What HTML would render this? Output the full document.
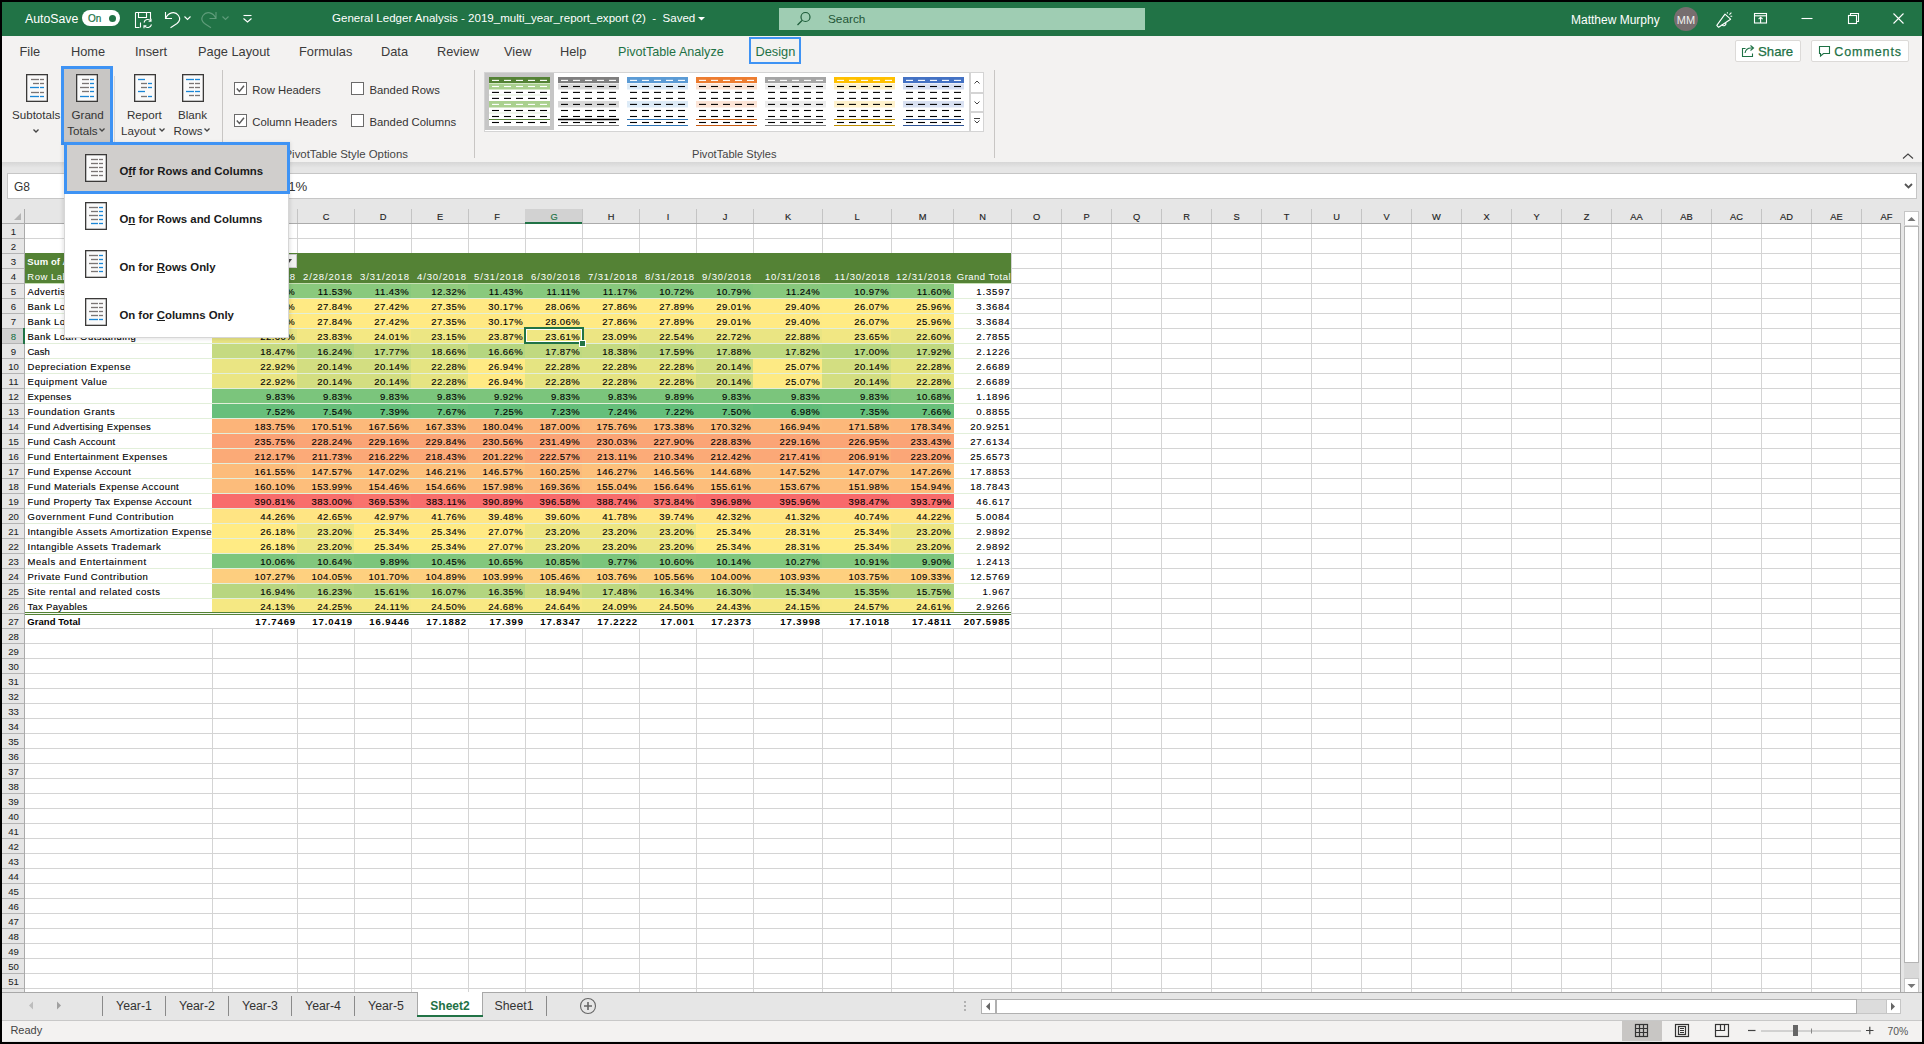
<!DOCTYPE html><html><head><meta charset="utf-8"><style>
html,body{margin:0;padding:0;}
body{width:1924px;height:1044px;position:relative;overflow:hidden;background:#000;font-family:"Liberation Sans", sans-serif;}
div{box-sizing:border-box;}
svg{position:absolute;overflow:visible;}
</style></head><body>
<div style="position:absolute;left:2px;top:2px;width:1920px;height:34px;background:#217346;"></div>
<div style="position:absolute;left:25px;top:13px;font-size:12.3px;line-height:12.3px;color:#fff;font-weight:normal;white-space:nowrap;">AutoSave</div>
<div style="position:absolute;left:82px;top:10px;width:38px;height:16px;background:#fff;border-radius:8px;"></div>
<div style="position:absolute;left:88px;top:14px;font-size:10px;line-height:10px;color:#217346;font-weight:normal;white-space:nowrap;-webkit-text-stroke:0.2px #217346;">On</div>
<div style="position:absolute;left:108.5px;top:14.5px;width:7px;height:7px;background:#217346;border-radius:50%;"></div>
<svg style="left:0;top:0" width="1924" height="40">
<g fill="none" stroke="#fff" stroke-width="1.1">
<path d="M135.5 12.5 h15 v7 M135.5 12.5 v15 h4"/>
<path d="M138.5 12.5 v5 h8 v-5"/>
<path d="M140.5 27.5 v-5"/>
<path d="M144 22.5 a4 4 0 0 1 7 -1.5 M151 18.8 v2.4 h-2.4 M151.5 24.5 a4 4 0 0 1 -7 1.5 M144 28.2 v-2.4 h2.4"/>
<path d="M165.5 12 V18.5 H172 M165.7 18.3 C168 12.5 175 10.5 178.5 15.5 C180.5 18.5 179.5 21.5 177 23.5 L170.5 27.8"/>
<path d="M184.5 16.5 l3 3 l3 -3"/>
</g>
<g fill="none" stroke="#5f9c7a" stroke-width="1.1">
<path d="M216 12 V18.5 H209.5 M215.8 18.3 C213.5 12.5 206.5 10.5 203 15.5 C201 18.5 202 21.5 204.5 23.5 L211 27.8"/>
<path d="M222.5 16.5 l3 3 l3 -3"/>
</g>
<g fill="none" stroke="#fff" stroke-width="1.1">
<path d="M243.5 15.5 h8"/><path d="M243.5 18.5 l4 3.5 l4 -3.5"/>
</g>
</svg>
<div style="position:absolute;left:332px;top:13px;font-size:11.55px;line-height:11.55px;color:#fff;font-weight:normal;white-space:nowrap;">General Ledger Analysis - 2019_multi_year_report_export (2)&nbsp; -&nbsp; Saved</div>
<svg style="left:0;top:0" width="1924" height="40"><path d="M698 17 l3.5 3.5 l3.5 -3.5z" fill="#fff"/></svg>
<div style="position:absolute;left:779px;top:8px;width:366px;height:22px;background:#9fcdb3;"></div>
<svg style="left:0;top:0" width="1924" height="40"><g fill="none" stroke="#1e5c3a" stroke-width="1.2"><circle cx="805.5" cy="17" r="4.5"/><path d="M802 20.5 l-4.5 4.5"/></g></svg>
<div style="position:absolute;left:828px;top:14px;font-size:11.8px;line-height:11.8px;color:#1f5537;font-weight:normal;white-space:nowrap;">Search</div>
<div style="position:absolute;left:1571px;top:14px;font-size:12px;line-height:12px;color:#fff;font-weight:normal;white-space:nowrap;">Matthew Murphy</div>
<div style="position:absolute;left:1674px;top:7px;width:24px;height:24px;background:#776e6f;border-radius:50%;"></div>
<div style="position:absolute;left:1486px;width:400px;top:15px;font-size:11px;line-height:11px;color:#f0f0f0;font-weight:normal;white-space:nowrap;text-align:center;">MM</div>
<svg style="left:0;top:0" width="1924" height="40"><g fill="none" stroke="#fff" stroke-width="1.1">
<path d="M1725 14.2 L1716.8 25.3 L1718.6 27.3 L1730.6 19.2 Z" stroke-linejoin="round"/><path d="M1722 24.6 a2 2 0 0 0 3.6 -1.8"/>
<path d="M1727.4 12.2 v1.4 M1729.4 14.6 l2 -2 M1730.4 16.3 h1.8"/>
<rect x="1754.5" y="13.5" width="12" height="9.5"/><path d="M1754.5 15.8 h12"/><path d="M1760.6 23 v-5.6 M1758.6 19.2 l2 -2 l2 2"/>
<path d="M1801.5 18.5 h11"/>
<rect x="1848.5" y="15.5" width="8" height="8"/><path d="M1850.5 15.5 v-2 h8 v8 h-2"/>
<path d="M1893.5 13.5 l10 10 M1903.5 13.5 l-10 10"/>
</g></svg>
<div style="position:absolute;left:2px;top:36px;width:1920px;height:126px;background:#f3f2f1;"></div>
<div style="position:absolute;left:19.5px;top:46px;font-size:12.8px;line-height:12.8px;color:#3b3b3b;font-weight:normal;white-space:nowrap;">File</div>
<div style="position:absolute;left:71px;top:46px;font-size:12.8px;line-height:12.8px;color:#3b3b3b;font-weight:normal;white-space:nowrap;">Home</div>
<div style="position:absolute;left:135px;top:46px;font-size:12.8px;line-height:12.8px;color:#3b3b3b;font-weight:normal;white-space:nowrap;">Insert</div>
<div style="position:absolute;left:198px;top:46px;font-size:12.8px;line-height:12.8px;color:#3b3b3b;font-weight:normal;white-space:nowrap;">Page Layout</div>
<div style="position:absolute;left:299px;top:46px;font-size:12.8px;line-height:12.8px;color:#3b3b3b;font-weight:normal;white-space:nowrap;">Formulas</div>
<div style="position:absolute;left:381px;top:46px;font-size:12.8px;line-height:12.8px;color:#3b3b3b;font-weight:normal;white-space:nowrap;">Data</div>
<div style="position:absolute;left:437px;top:46px;font-size:12.8px;line-height:12.8px;color:#3b3b3b;font-weight:normal;white-space:nowrap;">Review</div>
<div style="position:absolute;left:504px;top:46px;font-size:12.8px;line-height:12.8px;color:#3b3b3b;font-weight:normal;white-space:nowrap;">View</div>
<div style="position:absolute;left:560px;top:46px;font-size:12.8px;line-height:12.8px;color:#3b3b3b;font-weight:normal;white-space:nowrap;">Help</div>
<div style="position:absolute;left:618px;top:46px;font-size:12.6px;line-height:12.6px;color:#1e7145;font-weight:normal;white-space:nowrap;">PivotTable Analyze</div>
<div style="position:absolute;left:749px;top:37px;width:52px;height:27px;border:2px solid #3e93f4;"></div>
<div style="position:absolute;left:755.5px;top:46px;font-size:12.8px;line-height:12.8px;color:#1e7145;font-weight:normal;white-space:nowrap;">Design</div>
<div style="position:absolute;left:1735px;top:40px;width:66px;height:22px;background:#fff;border:1px solid #dcdad8;border-radius:2px;"></div>
<div style="position:absolute;left:1758px;top:45px;font-size:13.2px;line-height:13.2px;color:#1e7145;font-weight:normal;white-space:nowrap;-webkit-text-stroke:0.25px #1e7145;">Share</div>
<div style="position:absolute;left:1811px;top:40px;width:98px;height:22px;background:#fff;border:1px solid #dcdad8;border-radius:2px;"></div>
<div style="position:absolute;left:1834.3px;top:46px;font-size:12.5px;line-height:12.5px;color:#1e7145;font-weight:normal;white-space:nowrap;-webkit-text-stroke:0.25px #1e7145;letter-spacing:0.9px;">Comments</div>
<svg style="left:0;top:0" width="1924" height="70"><g fill="none" stroke="#1e7145" stroke-width="1.1">
<path d="M1745.5 48.5 h-3 v8 h10 v-3"/><path d="M1745 53 q1 -5 6 -5 h1.5 M1750.5 45.5 l3 2.5 l-3 2.5"/>
<path d="M1819.5 46.5 h10 v7 h-6 l-3 2.5 v-2.5 h-1 z"/>
</g></svg>
<div style="position:absolute;left:61px;top:66px;width:52px;height:79px;background:#c8c6c4;border:3px solid #3e93f4;"></div>
<svg style="left:26px;top:74px" width="22" height="28"><rect x="0.65" y="0.65" width="20.7" height="26.7" fill="#fafafa" stroke="#3b3a39" stroke-width="1.3"/><line x1="5" y1="5.5" x2="13" y2="5.5" stroke="#7a7574" stroke-width="1.3"/><line x1="14" y1="5.5" x2="18" y2="5.5" stroke="#7a7574" stroke-width="1.3"/><line x1="7" y1="9.5" x2="13" y2="9.5" stroke="#7a7574" stroke-width="1.3"/><line x1="14" y1="9.5" x2="18" y2="9.5" stroke="#7a7574" stroke-width="1.3"/><line x1="4" y1="13.5" x2="13" y2="13.5" stroke="#1a86d6" stroke-width="1.3"/><line x1="14" y1="13.5" x2="18" y2="13.5" stroke="#1a86d6" stroke-width="1.3"/><line x1="5" y1="18.5" x2="13" y2="18.5" stroke="#7a7574" stroke-width="1.3"/><line x1="14" y1="18.5" x2="18" y2="18.5" stroke="#7a7574" stroke-width="1.3"/><line x1="4" y1="22.5" x2="13" y2="22.5" stroke="#1a86d6" stroke-width="1.3"/><line x1="14" y1="22.5" x2="18" y2="22.5" stroke="#1a86d6" stroke-width="1.3"/></svg>
<svg style="left:76px;top:74px" width="22" height="28"><rect x="0.65" y="0.65" width="20.7" height="26.7" fill="#fafafa" stroke="#3b3a39" stroke-width="1.3"/><line x1="6" y1="5.5" x2="13" y2="5.5" stroke="#7a7574" stroke-width="1.3"/><line x1="14" y1="5.5" x2="18" y2="5.5" stroke="#1a86d6" stroke-width="1.3"/><line x1="6" y1="9.5" x2="13" y2="9.5" stroke="#7a7574" stroke-width="1.3"/><line x1="14" y1="9.5" x2="18" y2="9.5" stroke="#1a86d6" stroke-width="1.3"/><line x1="4" y1="13.5" x2="13" y2="13.5" stroke="#7a7574" stroke-width="1.3"/><line x1="14" y1="13.5" x2="18" y2="13.5" stroke="#1a86d6" stroke-width="1.3"/><line x1="6" y1="17.5" x2="13" y2="17.5" stroke="#7a7574" stroke-width="1.3"/><line x1="14" y1="17.5" x2="18" y2="17.5" stroke="#1a86d6" stroke-width="1.3"/><line x1="4" y1="22.5" x2="13" y2="22.5" stroke="#1a86d6" stroke-width="1.3"/><line x1="14" y1="22.5" x2="18" y2="22.5" stroke="#1a86d6" stroke-width="1.3"/></svg>
<svg style="left:134px;top:74px" width="22" height="28"><rect x="0.65" y="0.65" width="20.7" height="26.7" fill="#fafafa" stroke="#3b3a39" stroke-width="1.3"/><line x1="4" y1="5.5" x2="11" y2="5.5" stroke="#1a86d6" stroke-width="1.3"/><line x1="7" y1="9.5" x2="13" y2="9.5" stroke="#7a7574" stroke-width="1.3"/><line x1="14" y1="9.5" x2="18" y2="9.5" stroke="#1a86d6" stroke-width="1.3"/><line x1="7" y1="13.5" x2="13" y2="13.5" stroke="#7a7574" stroke-width="1.3"/><line x1="14" y1="13.5" x2="18" y2="13.5" stroke="#1a86d6" stroke-width="1.3"/><line x1="4" y1="17.5" x2="11" y2="17.5" stroke="#1a86d6" stroke-width="1.3"/><line x1="7" y1="22.5" x2="13" y2="22.5" stroke="#7a7574" stroke-width="1.3"/><line x1="14" y1="22.5" x2="18" y2="22.5" stroke="#1a86d6" stroke-width="1.3"/></svg>
<svg style="left:182px;top:74px" width="22" height="28"><rect x="0.65" y="0.65" width="20.7" height="26.7" fill="#fafafa" stroke="#3b3a39" stroke-width="1.3"/><line x1="4" y1="5.5" x2="12" y2="5.5" stroke="#1a86d6" stroke-width="1.3"/><line x1="13" y1="5.5" x2="18" y2="5.5" stroke="#1a86d6" stroke-width="1.3"/><line x1="7" y1="9.5" x2="12" y2="9.5" stroke="#7a7574" stroke-width="1.3"/><line x1="13" y1="9.5" x2="18" y2="9.5" stroke="#7a7574" stroke-width="1.3"/><line x1="7" y1="13.5" x2="12" y2="13.5" stroke="#7a7574" stroke-width="1.3"/><line x1="13" y1="13.5" x2="18" y2="13.5" stroke="#7a7574" stroke-width="1.3"/><line x1="4" y1="17.5" x2="12" y2="17.5" stroke="#1a86d6" stroke-width="1.3"/><line x1="13" y1="17.5" x2="18" y2="17.5" stroke="#1a86d6" stroke-width="1.3"/><line x1="7" y1="21.5" x2="12" y2="21.5" stroke="#7a7574" stroke-width="1.3"/><line x1="13" y1="21.5" x2="18" y2="21.5" stroke="#7a7574" stroke-width="1.3"/></svg>
<div style="position:absolute;left:12px;top:109px;font-size:11.6px;line-height:11.6px;color:#333333;font-weight:normal;white-space:nowrap;">Subtotals</div>
<div style="position:absolute;left:71.5px;top:109px;font-size:11.6px;line-height:11.6px;color:#333333;font-weight:normal;white-space:nowrap;">Grand</div>
<div style="position:absolute;left:67.3px;top:125px;font-size:11.6px;line-height:11.6px;color:#333333;font-weight:normal;white-space:nowrap;">Totals</div>
<div style="position:absolute;left:127px;top:109px;font-size:11.6px;line-height:11.6px;color:#333333;font-weight:normal;white-space:nowrap;">Report</div>
<div style="position:absolute;left:121px;top:125px;font-size:11.6px;line-height:11.6px;color:#333333;font-weight:normal;white-space:nowrap;">Layout</div>
<div style="position:absolute;left:178px;top:109px;font-size:11.6px;line-height:11.6px;color:#333333;font-weight:normal;white-space:nowrap;">Blank</div>
<div style="position:absolute;left:173.6px;top:125px;font-size:11.6px;line-height:11.6px;color:#333333;font-weight:normal;white-space:nowrap;">Rows</div>
<svg style="left:0;top:0" width="1000" height="170"><g fill="none" stroke="#444" stroke-width="1.3">
<path d="M33.5 129.5 l2.5 2.5 l2.5 -2.5"/>
<path d="M99.5 128.5 l2.5 2.5 l2.5 -2.5"/>
<path d="M159.5 128.5 l2.5 2.5 l2.5 -2.5"/>
<path d="M204.5 128.5 l2.5 2.5 l2.5 -2.5"/>
</g>
<line x1="114.5" y1="76" x2="114.5" y2="142" stroke="#d8d6d4"/>
<line x1="222.5" y1="70" x2="222.5" y2="158" stroke="#c8c6c4"/>
<line x1="474.5" y1="70" x2="474.5" y2="158" stroke="#c8c6c4"/>
<line x1="994.5" y1="70" x2="994.5" y2="158" stroke="#c8c6c4"/>
</svg>
<svg style="left:234px;top:82px" width="13" height="13"><rect x="0.5" y="0.5" width="12" height="12" fill="#fff" stroke="#6b6b6b"/><path d="M2.8 6.6 l2.6 2.8 l4.6 -5.6" fill="none" stroke="#5a5a5a" stroke-width="1.5"/></svg>
<svg style="left:234px;top:114px" width="13" height="13"><rect x="0.5" y="0.5" width="12" height="12" fill="#fff" stroke="#6b6b6b"/><path d="M2.8 6.6 l2.6 2.8 l4.6 -5.6" fill="none" stroke="#5a5a5a" stroke-width="1.5"/></svg>
<svg style="left:351px;top:82px" width="13" height="13"><rect x="0.5" y="0.5" width="12" height="12" fill="#fff" stroke="#6b6b6b"/></svg>
<svg style="left:351px;top:114px" width="13" height="13"><rect x="0.5" y="0.5" width="12" height="12" fill="#fff" stroke="#6b6b6b"/></svg>
<div style="position:absolute;left:252.3px;top:85px;font-size:11.3px;line-height:11.3px;color:#333333;font-weight:normal;white-space:nowrap;">Row Headers</div>
<div style="position:absolute;left:252.3px;top:117px;font-size:11.3px;line-height:11.3px;color:#333333;font-weight:normal;white-space:nowrap;">Column Headers</div>
<div style="position:absolute;left:369.5px;top:85px;font-size:11.3px;line-height:11.3px;color:#333333;font-weight:normal;white-space:nowrap;">Banded Rows</div>
<div style="position:absolute;left:369.5px;top:117px;font-size:11.3px;line-height:11.3px;color:#333333;font-weight:normal;white-space:nowrap;">Banded Columns</div>
<div style="position:absolute;left:284.5px;top:149px;font-size:11.4px;line-height:11.4px;color:#444;font-weight:normal;white-space:nowrap;">PivotTable Style Options</div>
<div style="position:absolute;left:692px;top:149px;font-size:11.1px;line-height:11.1px;color:#444;font-weight:normal;white-space:nowrap;">PivotTable Styles</div>
<svg style="left:0;top:0" width="1000" height="170"><rect x="484.5" y="72.5" width="485" height="59" fill="#fff" stroke="#d4d4d4"/><rect x="485" y="73" width="69" height="57" fill="#c6c6c6"/><rect x="489" y="77" width="61" height="49" fill="#fff"/><rect x="489" y="77" width="61" height="6" fill="#548235"/><rect x="489" y="83.5" width="61" height="6" fill="#a9d08e"/><rect x="489" y="101" width="61" height="6.5" fill="#a9d08e"/><line x1="489" y1="95" x2="550" y2="95" stroke="#e2efda" stroke-width="1"/><line x1="489" y1="113" x2="550" y2="113" stroke="#e2efda" stroke-width="1"/><line x1="489" y1="119.5" x2="550" y2="119.5" stroke="#548235" stroke-width="1"/><line x1="492" y1="80.4" x2="499" y2="80.4" stroke="#fff" stroke-width="1.1"/><line x1="504" y1="80.4" x2="511" y2="80.4" stroke="#fff" stroke-width="1.1"/><line x1="516" y1="80.4" x2="523" y2="80.4" stroke="#fff" stroke-width="1.1"/><line x1="528" y1="80.4" x2="535" y2="80.4" stroke="#fff" stroke-width="1.1"/><line x1="540" y1="80.4" x2="547" y2="80.4" stroke="#fff" stroke-width="1.1"/><line x1="492" y1="86.5" x2="499" y2="86.5" stroke="#fff" stroke-width="1.1"/><line x1="504" y1="86.5" x2="511" y2="86.5" stroke="#fff" stroke-width="1.1"/><line x1="516" y1="86.5" x2="523" y2="86.5" stroke="#fff" stroke-width="1.1"/><line x1="528" y1="86.5" x2="535" y2="86.5" stroke="#fff" stroke-width="1.1"/><line x1="540" y1="86.5" x2="547" y2="86.5" stroke="#fff" stroke-width="1.1"/><line x1="492" y1="92.4" x2="499" y2="92.4" stroke="#000" stroke-width="1.1"/><line x1="504" y1="92.4" x2="511" y2="92.4" stroke="#000" stroke-width="1.1"/><line x1="516" y1="92.4" x2="523" y2="92.4" stroke="#000" stroke-width="1.1"/><line x1="528" y1="92.4" x2="535" y2="92.4" stroke="#000" stroke-width="1.1"/><line x1="540" y1="92.4" x2="547" y2="92.4" stroke="#000" stroke-width="1.1"/><line x1="492" y1="98.4" x2="499" y2="98.4" stroke="#000" stroke-width="1.1"/><line x1="504" y1="98.4" x2="511" y2="98.4" stroke="#000" stroke-width="1.1"/><line x1="516" y1="98.4" x2="523" y2="98.4" stroke="#000" stroke-width="1.1"/><line x1="528" y1="98.4" x2="535" y2="98.4" stroke="#000" stroke-width="1.1"/><line x1="540" y1="98.4" x2="547" y2="98.4" stroke="#000" stroke-width="1.1"/><line x1="492" y1="104.4" x2="499" y2="104.4" stroke="#fff" stroke-width="1.1"/><line x1="504" y1="104.4" x2="511" y2="104.4" stroke="#fff" stroke-width="1.1"/><line x1="516" y1="104.4" x2="523" y2="104.4" stroke="#fff" stroke-width="1.1"/><line x1="528" y1="104.4" x2="535" y2="104.4" stroke="#fff" stroke-width="1.1"/><line x1="540" y1="104.4" x2="547" y2="104.4" stroke="#fff" stroke-width="1.1"/><line x1="492" y1="110.5" x2="499" y2="110.5" stroke="#000" stroke-width="1.1"/><line x1="504" y1="110.5" x2="511" y2="110.5" stroke="#000" stroke-width="1.1"/><line x1="516" y1="110.5" x2="523" y2="110.5" stroke="#000" stroke-width="1.1"/><line x1="528" y1="110.5" x2="535" y2="110.5" stroke="#000" stroke-width="1.1"/><line x1="540" y1="110.5" x2="547" y2="110.5" stroke="#000" stroke-width="1.1"/><line x1="492" y1="116.5" x2="499" y2="116.5" stroke="#000" stroke-width="1.1"/><line x1="504" y1="116.5" x2="511" y2="116.5" stroke="#000" stroke-width="1.1"/><line x1="516" y1="116.5" x2="523" y2="116.5" stroke="#000" stroke-width="1.1"/><line x1="528" y1="116.5" x2="535" y2="116.5" stroke="#000" stroke-width="1.1"/><line x1="540" y1="116.5" x2="547" y2="116.5" stroke="#000" stroke-width="1.1"/><line x1="492" y1="122.5" x2="499" y2="122.5" stroke="#000" stroke-width="1.1"/><line x1="504" y1="122.5" x2="511" y2="122.5" stroke="#000" stroke-width="1.1"/><line x1="516" y1="122.5" x2="523" y2="122.5" stroke="#000" stroke-width="1.1"/><line x1="528" y1="122.5" x2="535" y2="122.5" stroke="#000" stroke-width="1.1"/><line x1="540" y1="122.5" x2="547" y2="122.5" stroke="#000" stroke-width="1.1"/><rect x="558" y="77" width="61" height="6" fill="#7f7f7f"/><rect x="558" y="83.5" width="61" height="6" fill="#d9d9d9"/><rect x="558" y="101" width="61" height="6.5" fill="#d9d9d9"/><line x1="558" y1="119.5" x2="619" y2="119.5" stroke="#000000" stroke-width="1.3"/><line x1="558" y1="125.5" x2="619" y2="125.5" stroke="#808080" stroke-width="1"/><line x1="561" y1="80.4" x2="568" y2="80.4" stroke="#fff" stroke-width="1.1"/><line x1="573" y1="80.4" x2="580" y2="80.4" stroke="#fff" stroke-width="1.1"/><line x1="585" y1="80.4" x2="592" y2="80.4" stroke="#fff" stroke-width="1.1"/><line x1="597" y1="80.4" x2="604" y2="80.4" stroke="#fff" stroke-width="1.1"/><line x1="609" y1="80.4" x2="616" y2="80.4" stroke="#fff" stroke-width="1.1"/><line x1="561" y1="86.5" x2="568" y2="86.5" stroke="#000" stroke-width="1.1"/><line x1="573" y1="86.5" x2="580" y2="86.5" stroke="#000" stroke-width="1.1"/><line x1="585" y1="86.5" x2="592" y2="86.5" stroke="#000" stroke-width="1.1"/><line x1="597" y1="86.5" x2="604" y2="86.5" stroke="#000" stroke-width="1.1"/><line x1="609" y1="86.5" x2="616" y2="86.5" stroke="#000" stroke-width="1.1"/><line x1="561" y1="92.4" x2="568" y2="92.4" stroke="#000" stroke-width="1.1"/><line x1="573" y1="92.4" x2="580" y2="92.4" stroke="#000" stroke-width="1.1"/><line x1="585" y1="92.4" x2="592" y2="92.4" stroke="#000" stroke-width="1.1"/><line x1="597" y1="92.4" x2="604" y2="92.4" stroke="#000" stroke-width="1.1"/><line x1="609" y1="92.4" x2="616" y2="92.4" stroke="#000" stroke-width="1.1"/><line x1="561" y1="98.4" x2="568" y2="98.4" stroke="#000" stroke-width="1.1"/><line x1="573" y1="98.4" x2="580" y2="98.4" stroke="#000" stroke-width="1.1"/><line x1="585" y1="98.4" x2="592" y2="98.4" stroke="#000" stroke-width="1.1"/><line x1="597" y1="98.4" x2="604" y2="98.4" stroke="#000" stroke-width="1.1"/><line x1="609" y1="98.4" x2="616" y2="98.4" stroke="#000" stroke-width="1.1"/><line x1="561" y1="104.4" x2="568" y2="104.4" stroke="#000" stroke-width="1.1"/><line x1="573" y1="104.4" x2="580" y2="104.4" stroke="#000" stroke-width="1.1"/><line x1="585" y1="104.4" x2="592" y2="104.4" stroke="#000" stroke-width="1.1"/><line x1="597" y1="104.4" x2="604" y2="104.4" stroke="#000" stroke-width="1.1"/><line x1="609" y1="104.4" x2="616" y2="104.4" stroke="#000" stroke-width="1.1"/><line x1="561" y1="110.5" x2="568" y2="110.5" stroke="#000" stroke-width="1.1"/><line x1="573" y1="110.5" x2="580" y2="110.5" stroke="#000" stroke-width="1.1"/><line x1="585" y1="110.5" x2="592" y2="110.5" stroke="#000" stroke-width="1.1"/><line x1="597" y1="110.5" x2="604" y2="110.5" stroke="#000" stroke-width="1.1"/><line x1="609" y1="110.5" x2="616" y2="110.5" stroke="#000" stroke-width="1.1"/><line x1="561" y1="116.5" x2="568" y2="116.5" stroke="#000" stroke-width="1.1"/><line x1="573" y1="116.5" x2="580" y2="116.5" stroke="#000" stroke-width="1.1"/><line x1="585" y1="116.5" x2="592" y2="116.5" stroke="#000" stroke-width="1.1"/><line x1="597" y1="116.5" x2="604" y2="116.5" stroke="#000" stroke-width="1.1"/><line x1="609" y1="116.5" x2="616" y2="116.5" stroke="#000" stroke-width="1.1"/><line x1="561" y1="122.5" x2="568" y2="122.5" stroke="#000" stroke-width="1.1"/><line x1="573" y1="122.5" x2="580" y2="122.5" stroke="#000" stroke-width="1.1"/><line x1="585" y1="122.5" x2="592" y2="122.5" stroke="#000" stroke-width="1.1"/><line x1="597" y1="122.5" x2="604" y2="122.5" stroke="#000" stroke-width="1.1"/><line x1="609" y1="122.5" x2="616" y2="122.5" stroke="#000" stroke-width="1.1"/><rect x="627" y="77" width="61" height="6" fill="#5b9bd5"/><rect x="627" y="83.5" width="61" height="6" fill="#ddebf7"/><rect x="627" y="101" width="61" height="6.5" fill="#ddebf7"/><line x1="627" y1="119.5" x2="688" y2="119.5" stroke="#2e75b6" stroke-width="1"/><line x1="627" y1="125.5" x2="688" y2="125.5" stroke="#2e75b6" stroke-width="1"/><line x1="630" y1="80.4" x2="637" y2="80.4" stroke="#fff" stroke-width="1.1"/><line x1="642" y1="80.4" x2="649" y2="80.4" stroke="#fff" stroke-width="1.1"/><line x1="654" y1="80.4" x2="661" y2="80.4" stroke="#fff" stroke-width="1.1"/><line x1="666" y1="80.4" x2="673" y2="80.4" stroke="#fff" stroke-width="1.1"/><line x1="678" y1="80.4" x2="685" y2="80.4" stroke="#fff" stroke-width="1.1"/><line x1="630" y1="86.5" x2="637" y2="86.5" stroke="#000" stroke-width="1.1"/><line x1="642" y1="86.5" x2="649" y2="86.5" stroke="#000" stroke-width="1.1"/><line x1="654" y1="86.5" x2="661" y2="86.5" stroke="#000" stroke-width="1.1"/><line x1="666" y1="86.5" x2="673" y2="86.5" stroke="#000" stroke-width="1.1"/><line x1="678" y1="86.5" x2="685" y2="86.5" stroke="#000" stroke-width="1.1"/><line x1="630" y1="92.4" x2="637" y2="92.4" stroke="#000" stroke-width="1.1"/><line x1="642" y1="92.4" x2="649" y2="92.4" stroke="#000" stroke-width="1.1"/><line x1="654" y1="92.4" x2="661" y2="92.4" stroke="#000" stroke-width="1.1"/><line x1="666" y1="92.4" x2="673" y2="92.4" stroke="#000" stroke-width="1.1"/><line x1="678" y1="92.4" x2="685" y2="92.4" stroke="#000" stroke-width="1.1"/><line x1="630" y1="98.4" x2="637" y2="98.4" stroke="#000" stroke-width="1.1"/><line x1="642" y1="98.4" x2="649" y2="98.4" stroke="#000" stroke-width="1.1"/><line x1="654" y1="98.4" x2="661" y2="98.4" stroke="#000" stroke-width="1.1"/><line x1="666" y1="98.4" x2="673" y2="98.4" stroke="#000" stroke-width="1.1"/><line x1="678" y1="98.4" x2="685" y2="98.4" stroke="#000" stroke-width="1.1"/><line x1="630" y1="104.4" x2="637" y2="104.4" stroke="#000" stroke-width="1.1"/><line x1="642" y1="104.4" x2="649" y2="104.4" stroke="#000" stroke-width="1.1"/><line x1="654" y1="104.4" x2="661" y2="104.4" stroke="#000" stroke-width="1.1"/><line x1="666" y1="104.4" x2="673" y2="104.4" stroke="#000" stroke-width="1.1"/><line x1="678" y1="104.4" x2="685" y2="104.4" stroke="#000" stroke-width="1.1"/><line x1="630" y1="110.5" x2="637" y2="110.5" stroke="#000" stroke-width="1.1"/><line x1="642" y1="110.5" x2="649" y2="110.5" stroke="#000" stroke-width="1.1"/><line x1="654" y1="110.5" x2="661" y2="110.5" stroke="#000" stroke-width="1.1"/><line x1="666" y1="110.5" x2="673" y2="110.5" stroke="#000" stroke-width="1.1"/><line x1="678" y1="110.5" x2="685" y2="110.5" stroke="#000" stroke-width="1.1"/><line x1="630" y1="116.5" x2="637" y2="116.5" stroke="#000" stroke-width="1.1"/><line x1="642" y1="116.5" x2="649" y2="116.5" stroke="#000" stroke-width="1.1"/><line x1="654" y1="116.5" x2="661" y2="116.5" stroke="#000" stroke-width="1.1"/><line x1="666" y1="116.5" x2="673" y2="116.5" stroke="#000" stroke-width="1.1"/><line x1="678" y1="116.5" x2="685" y2="116.5" stroke="#000" stroke-width="1.1"/><line x1="630" y1="122.5" x2="637" y2="122.5" stroke="#000" stroke-width="1.1"/><line x1="642" y1="122.5" x2="649" y2="122.5" stroke="#000" stroke-width="1.1"/><line x1="654" y1="122.5" x2="661" y2="122.5" stroke="#000" stroke-width="1.1"/><line x1="666" y1="122.5" x2="673" y2="122.5" stroke="#000" stroke-width="1.1"/><line x1="678" y1="122.5" x2="685" y2="122.5" stroke="#000" stroke-width="1.1"/><rect x="696" y="77" width="61" height="6" fill="#ed7d31"/><rect x="696" y="83.5" width="61" height="6" fill="#fce4d6"/><rect x="696" y="101" width="61" height="6.5" fill="#fce4d6"/><line x1="696" y1="119.5" x2="757" y2="119.5" stroke="#c65911" stroke-width="1"/><line x1="696" y1="125.5" x2="757" y2="125.5" stroke="#c65911" stroke-width="1"/><line x1="699" y1="80.4" x2="706" y2="80.4" stroke="#fff" stroke-width="1.1"/><line x1="711" y1="80.4" x2="718" y2="80.4" stroke="#fff" stroke-width="1.1"/><line x1="723" y1="80.4" x2="730" y2="80.4" stroke="#fff" stroke-width="1.1"/><line x1="735" y1="80.4" x2="742" y2="80.4" stroke="#fff" stroke-width="1.1"/><line x1="747" y1="80.4" x2="754" y2="80.4" stroke="#fff" stroke-width="1.1"/><line x1="699" y1="86.5" x2="706" y2="86.5" stroke="#000" stroke-width="1.1"/><line x1="711" y1="86.5" x2="718" y2="86.5" stroke="#000" stroke-width="1.1"/><line x1="723" y1="86.5" x2="730" y2="86.5" stroke="#000" stroke-width="1.1"/><line x1="735" y1="86.5" x2="742" y2="86.5" stroke="#000" stroke-width="1.1"/><line x1="747" y1="86.5" x2="754" y2="86.5" stroke="#000" stroke-width="1.1"/><line x1="699" y1="92.4" x2="706" y2="92.4" stroke="#000" stroke-width="1.1"/><line x1="711" y1="92.4" x2="718" y2="92.4" stroke="#000" stroke-width="1.1"/><line x1="723" y1="92.4" x2="730" y2="92.4" stroke="#000" stroke-width="1.1"/><line x1="735" y1="92.4" x2="742" y2="92.4" stroke="#000" stroke-width="1.1"/><line x1="747" y1="92.4" x2="754" y2="92.4" stroke="#000" stroke-width="1.1"/><line x1="699" y1="98.4" x2="706" y2="98.4" stroke="#000" stroke-width="1.1"/><line x1="711" y1="98.4" x2="718" y2="98.4" stroke="#000" stroke-width="1.1"/><line x1="723" y1="98.4" x2="730" y2="98.4" stroke="#000" stroke-width="1.1"/><line x1="735" y1="98.4" x2="742" y2="98.4" stroke="#000" stroke-width="1.1"/><line x1="747" y1="98.4" x2="754" y2="98.4" stroke="#000" stroke-width="1.1"/><line x1="699" y1="104.4" x2="706" y2="104.4" stroke="#000" stroke-width="1.1"/><line x1="711" y1="104.4" x2="718" y2="104.4" stroke="#000" stroke-width="1.1"/><line x1="723" y1="104.4" x2="730" y2="104.4" stroke="#000" stroke-width="1.1"/><line x1="735" y1="104.4" x2="742" y2="104.4" stroke="#000" stroke-width="1.1"/><line x1="747" y1="104.4" x2="754" y2="104.4" stroke="#000" stroke-width="1.1"/><line x1="699" y1="110.5" x2="706" y2="110.5" stroke="#000" stroke-width="1.1"/><line x1="711" y1="110.5" x2="718" y2="110.5" stroke="#000" stroke-width="1.1"/><line x1="723" y1="110.5" x2="730" y2="110.5" stroke="#000" stroke-width="1.1"/><line x1="735" y1="110.5" x2="742" y2="110.5" stroke="#000" stroke-width="1.1"/><line x1="747" y1="110.5" x2="754" y2="110.5" stroke="#000" stroke-width="1.1"/><line x1="699" y1="116.5" x2="706" y2="116.5" stroke="#000" stroke-width="1.1"/><line x1="711" y1="116.5" x2="718" y2="116.5" stroke="#000" stroke-width="1.1"/><line x1="723" y1="116.5" x2="730" y2="116.5" stroke="#000" stroke-width="1.1"/><line x1="735" y1="116.5" x2="742" y2="116.5" stroke="#000" stroke-width="1.1"/><line x1="747" y1="116.5" x2="754" y2="116.5" stroke="#000" stroke-width="1.1"/><line x1="699" y1="122.5" x2="706" y2="122.5" stroke="#000" stroke-width="1.1"/><line x1="711" y1="122.5" x2="718" y2="122.5" stroke="#000" stroke-width="1.1"/><line x1="723" y1="122.5" x2="730" y2="122.5" stroke="#000" stroke-width="1.1"/><line x1="735" y1="122.5" x2="742" y2="122.5" stroke="#000" stroke-width="1.1"/><line x1="747" y1="122.5" x2="754" y2="122.5" stroke="#000" stroke-width="1.1"/><rect x="765" y="77" width="61" height="6" fill="#a5a5a5"/><rect x="765" y="83.5" width="61" height="6" fill="#ededed"/><rect x="765" y="101" width="61" height="6.5" fill="#ededed"/><line x1="765" y1="119.5" x2="826" y2="119.5" stroke="#7b7b7b" stroke-width="1"/><line x1="765" y1="125.5" x2="826" y2="125.5" stroke="#7b7b7b" stroke-width="1"/><line x1="768" y1="80.4" x2="775" y2="80.4" stroke="#fff" stroke-width="1.1"/><line x1="780" y1="80.4" x2="787" y2="80.4" stroke="#fff" stroke-width="1.1"/><line x1="792" y1="80.4" x2="799" y2="80.4" stroke="#fff" stroke-width="1.1"/><line x1="804" y1="80.4" x2="811" y2="80.4" stroke="#fff" stroke-width="1.1"/><line x1="816" y1="80.4" x2="823" y2="80.4" stroke="#fff" stroke-width="1.1"/><line x1="768" y1="86.5" x2="775" y2="86.5" stroke="#000" stroke-width="1.1"/><line x1="780" y1="86.5" x2="787" y2="86.5" stroke="#000" stroke-width="1.1"/><line x1="792" y1="86.5" x2="799" y2="86.5" stroke="#000" stroke-width="1.1"/><line x1="804" y1="86.5" x2="811" y2="86.5" stroke="#000" stroke-width="1.1"/><line x1="816" y1="86.5" x2="823" y2="86.5" stroke="#000" stroke-width="1.1"/><line x1="768" y1="92.4" x2="775" y2="92.4" stroke="#000" stroke-width="1.1"/><line x1="780" y1="92.4" x2="787" y2="92.4" stroke="#000" stroke-width="1.1"/><line x1="792" y1="92.4" x2="799" y2="92.4" stroke="#000" stroke-width="1.1"/><line x1="804" y1="92.4" x2="811" y2="92.4" stroke="#000" stroke-width="1.1"/><line x1="816" y1="92.4" x2="823" y2="92.4" stroke="#000" stroke-width="1.1"/><line x1="768" y1="98.4" x2="775" y2="98.4" stroke="#000" stroke-width="1.1"/><line x1="780" y1="98.4" x2="787" y2="98.4" stroke="#000" stroke-width="1.1"/><line x1="792" y1="98.4" x2="799" y2="98.4" stroke="#000" stroke-width="1.1"/><line x1="804" y1="98.4" x2="811" y2="98.4" stroke="#000" stroke-width="1.1"/><line x1="816" y1="98.4" x2="823" y2="98.4" stroke="#000" stroke-width="1.1"/><line x1="768" y1="104.4" x2="775" y2="104.4" stroke="#000" stroke-width="1.1"/><line x1="780" y1="104.4" x2="787" y2="104.4" stroke="#000" stroke-width="1.1"/><line x1="792" y1="104.4" x2="799" y2="104.4" stroke="#000" stroke-width="1.1"/><line x1="804" y1="104.4" x2="811" y2="104.4" stroke="#000" stroke-width="1.1"/><line x1="816" y1="104.4" x2="823" y2="104.4" stroke="#000" stroke-width="1.1"/><line x1="768" y1="110.5" x2="775" y2="110.5" stroke="#000" stroke-width="1.1"/><line x1="780" y1="110.5" x2="787" y2="110.5" stroke="#000" stroke-width="1.1"/><line x1="792" y1="110.5" x2="799" y2="110.5" stroke="#000" stroke-width="1.1"/><line x1="804" y1="110.5" x2="811" y2="110.5" stroke="#000" stroke-width="1.1"/><line x1="816" y1="110.5" x2="823" y2="110.5" stroke="#000" stroke-width="1.1"/><line x1="768" y1="116.5" x2="775" y2="116.5" stroke="#000" stroke-width="1.1"/><line x1="780" y1="116.5" x2="787" y2="116.5" stroke="#000" stroke-width="1.1"/><line x1="792" y1="116.5" x2="799" y2="116.5" stroke="#000" stroke-width="1.1"/><line x1="804" y1="116.5" x2="811" y2="116.5" stroke="#000" stroke-width="1.1"/><line x1="816" y1="116.5" x2="823" y2="116.5" stroke="#000" stroke-width="1.1"/><line x1="768" y1="122.5" x2="775" y2="122.5" stroke="#000" stroke-width="1.1"/><line x1="780" y1="122.5" x2="787" y2="122.5" stroke="#000" stroke-width="1.1"/><line x1="792" y1="122.5" x2="799" y2="122.5" stroke="#000" stroke-width="1.1"/><line x1="804" y1="122.5" x2="811" y2="122.5" stroke="#000" stroke-width="1.1"/><line x1="816" y1="122.5" x2="823" y2="122.5" stroke="#000" stroke-width="1.1"/><rect x="834" y="77" width="61" height="6" fill="#ffc000"/><rect x="834" y="83.5" width="61" height="6" fill="#fff2cc"/><rect x="834" y="101" width="61" height="6.5" fill="#fff2cc"/><line x1="834" y1="119.5" x2="895" y2="119.5" stroke="#bf8f00" stroke-width="1"/><line x1="834" y1="125.5" x2="895" y2="125.5" stroke="#bf8f00" stroke-width="1"/><line x1="837" y1="80.4" x2="844" y2="80.4" stroke="#fff" stroke-width="1.1"/><line x1="849" y1="80.4" x2="856" y2="80.4" stroke="#fff" stroke-width="1.1"/><line x1="861" y1="80.4" x2="868" y2="80.4" stroke="#fff" stroke-width="1.1"/><line x1="873" y1="80.4" x2="880" y2="80.4" stroke="#fff" stroke-width="1.1"/><line x1="885" y1="80.4" x2="892" y2="80.4" stroke="#fff" stroke-width="1.1"/><line x1="837" y1="86.5" x2="844" y2="86.5" stroke="#000" stroke-width="1.1"/><line x1="849" y1="86.5" x2="856" y2="86.5" stroke="#000" stroke-width="1.1"/><line x1="861" y1="86.5" x2="868" y2="86.5" stroke="#000" stroke-width="1.1"/><line x1="873" y1="86.5" x2="880" y2="86.5" stroke="#000" stroke-width="1.1"/><line x1="885" y1="86.5" x2="892" y2="86.5" stroke="#000" stroke-width="1.1"/><line x1="837" y1="92.4" x2="844" y2="92.4" stroke="#000" stroke-width="1.1"/><line x1="849" y1="92.4" x2="856" y2="92.4" stroke="#000" stroke-width="1.1"/><line x1="861" y1="92.4" x2="868" y2="92.4" stroke="#000" stroke-width="1.1"/><line x1="873" y1="92.4" x2="880" y2="92.4" stroke="#000" stroke-width="1.1"/><line x1="885" y1="92.4" x2="892" y2="92.4" stroke="#000" stroke-width="1.1"/><line x1="837" y1="98.4" x2="844" y2="98.4" stroke="#000" stroke-width="1.1"/><line x1="849" y1="98.4" x2="856" y2="98.4" stroke="#000" stroke-width="1.1"/><line x1="861" y1="98.4" x2="868" y2="98.4" stroke="#000" stroke-width="1.1"/><line x1="873" y1="98.4" x2="880" y2="98.4" stroke="#000" stroke-width="1.1"/><line x1="885" y1="98.4" x2="892" y2="98.4" stroke="#000" stroke-width="1.1"/><line x1="837" y1="104.4" x2="844" y2="104.4" stroke="#000" stroke-width="1.1"/><line x1="849" y1="104.4" x2="856" y2="104.4" stroke="#000" stroke-width="1.1"/><line x1="861" y1="104.4" x2="868" y2="104.4" stroke="#000" stroke-width="1.1"/><line x1="873" y1="104.4" x2="880" y2="104.4" stroke="#000" stroke-width="1.1"/><line x1="885" y1="104.4" x2="892" y2="104.4" stroke="#000" stroke-width="1.1"/><line x1="837" y1="110.5" x2="844" y2="110.5" stroke="#000" stroke-width="1.1"/><line x1="849" y1="110.5" x2="856" y2="110.5" stroke="#000" stroke-width="1.1"/><line x1="861" y1="110.5" x2="868" y2="110.5" stroke="#000" stroke-width="1.1"/><line x1="873" y1="110.5" x2="880" y2="110.5" stroke="#000" stroke-width="1.1"/><line x1="885" y1="110.5" x2="892" y2="110.5" stroke="#000" stroke-width="1.1"/><line x1="837" y1="116.5" x2="844" y2="116.5" stroke="#000" stroke-width="1.1"/><line x1="849" y1="116.5" x2="856" y2="116.5" stroke="#000" stroke-width="1.1"/><line x1="861" y1="116.5" x2="868" y2="116.5" stroke="#000" stroke-width="1.1"/><line x1="873" y1="116.5" x2="880" y2="116.5" stroke="#000" stroke-width="1.1"/><line x1="885" y1="116.5" x2="892" y2="116.5" stroke="#000" stroke-width="1.1"/><line x1="837" y1="122.5" x2="844" y2="122.5" stroke="#000" stroke-width="1.1"/><line x1="849" y1="122.5" x2="856" y2="122.5" stroke="#000" stroke-width="1.1"/><line x1="861" y1="122.5" x2="868" y2="122.5" stroke="#000" stroke-width="1.1"/><line x1="873" y1="122.5" x2="880" y2="122.5" stroke="#000" stroke-width="1.1"/><line x1="885" y1="122.5" x2="892" y2="122.5" stroke="#000" stroke-width="1.1"/><rect x="903" y="77" width="61" height="6" fill="#4472c4"/><rect x="903" y="83.5" width="61" height="6" fill="#d9e1f2"/><rect x="903" y="101" width="61" height="6.5" fill="#d9e1f2"/><line x1="903" y1="119.5" x2="964" y2="119.5" stroke="#2f5597" stroke-width="1"/><line x1="903" y1="125.5" x2="964" y2="125.5" stroke="#2f5597" stroke-width="1"/><line x1="906" y1="80.4" x2="913" y2="80.4" stroke="#fff" stroke-width="1.1"/><line x1="918" y1="80.4" x2="925" y2="80.4" stroke="#fff" stroke-width="1.1"/><line x1="930" y1="80.4" x2="937" y2="80.4" stroke="#fff" stroke-width="1.1"/><line x1="942" y1="80.4" x2="949" y2="80.4" stroke="#fff" stroke-width="1.1"/><line x1="954" y1="80.4" x2="961" y2="80.4" stroke="#fff" stroke-width="1.1"/><line x1="906" y1="86.5" x2="913" y2="86.5" stroke="#000" stroke-width="1.1"/><line x1="918" y1="86.5" x2="925" y2="86.5" stroke="#000" stroke-width="1.1"/><line x1="930" y1="86.5" x2="937" y2="86.5" stroke="#000" stroke-width="1.1"/><line x1="942" y1="86.5" x2="949" y2="86.5" stroke="#000" stroke-width="1.1"/><line x1="954" y1="86.5" x2="961" y2="86.5" stroke="#000" stroke-width="1.1"/><line x1="906" y1="92.4" x2="913" y2="92.4" stroke="#000" stroke-width="1.1"/><line x1="918" y1="92.4" x2="925" y2="92.4" stroke="#000" stroke-width="1.1"/><line x1="930" y1="92.4" x2="937" y2="92.4" stroke="#000" stroke-width="1.1"/><line x1="942" y1="92.4" x2="949" y2="92.4" stroke="#000" stroke-width="1.1"/><line x1="954" y1="92.4" x2="961" y2="92.4" stroke="#000" stroke-width="1.1"/><line x1="906" y1="98.4" x2="913" y2="98.4" stroke="#000" stroke-width="1.1"/><line x1="918" y1="98.4" x2="925" y2="98.4" stroke="#000" stroke-width="1.1"/><line x1="930" y1="98.4" x2="937" y2="98.4" stroke="#000" stroke-width="1.1"/><line x1="942" y1="98.4" x2="949" y2="98.4" stroke="#000" stroke-width="1.1"/><line x1="954" y1="98.4" x2="961" y2="98.4" stroke="#000" stroke-width="1.1"/><line x1="906" y1="104.4" x2="913" y2="104.4" stroke="#000" stroke-width="1.1"/><line x1="918" y1="104.4" x2="925" y2="104.4" stroke="#000" stroke-width="1.1"/><line x1="930" y1="104.4" x2="937" y2="104.4" stroke="#000" stroke-width="1.1"/><line x1="942" y1="104.4" x2="949" y2="104.4" stroke="#000" stroke-width="1.1"/><line x1="954" y1="104.4" x2="961" y2="104.4" stroke="#000" stroke-width="1.1"/><line x1="906" y1="110.5" x2="913" y2="110.5" stroke="#000" stroke-width="1.1"/><line x1="918" y1="110.5" x2="925" y2="110.5" stroke="#000" stroke-width="1.1"/><line x1="930" y1="110.5" x2="937" y2="110.5" stroke="#000" stroke-width="1.1"/><line x1="942" y1="110.5" x2="949" y2="110.5" stroke="#000" stroke-width="1.1"/><line x1="954" y1="110.5" x2="961" y2="110.5" stroke="#000" stroke-width="1.1"/><line x1="906" y1="116.5" x2="913" y2="116.5" stroke="#000" stroke-width="1.1"/><line x1="918" y1="116.5" x2="925" y2="116.5" stroke="#000" stroke-width="1.1"/><line x1="930" y1="116.5" x2="937" y2="116.5" stroke="#000" stroke-width="1.1"/><line x1="942" y1="116.5" x2="949" y2="116.5" stroke="#000" stroke-width="1.1"/><line x1="954" y1="116.5" x2="961" y2="116.5" stroke="#000" stroke-width="1.1"/><line x1="906" y1="122.5" x2="913" y2="122.5" stroke="#000" stroke-width="1.1"/><line x1="918" y1="122.5" x2="925" y2="122.5" stroke="#000" stroke-width="1.1"/><line x1="930" y1="122.5" x2="937" y2="122.5" stroke="#000" stroke-width="1.1"/><line x1="942" y1="122.5" x2="949" y2="122.5" stroke="#000" stroke-width="1.1"/><line x1="954" y1="122.5" x2="961" y2="122.5" stroke="#000" stroke-width="1.1"/><rect x="970.5" y="72.5" width="13" height="20" fill="#fff" stroke="#d4d4d4"/><rect x="970.5" y="93.5" width="13" height="18" fill="#fff" stroke="#d4d4d4"/><rect x="970.5" y="112.5" width="13" height="19" fill="#fff" stroke="#d4d4d4"/><g fill="none" stroke="#444" stroke-width="1"><path d="M974.5 83.5 l2.5 -2.5 l2.5 2.5"/><path d="M974.5 101.5 l2.5 2.5 l2.5 -2.5"/><path d="M974 118.5 h6 M974.5 120.5 l2.5 2.5 l2.5 -2.5"/></g></svg>
<svg style="left:0;top:0" width="1924" height="170"><path d="M1903 158.5 l5 -4.5 l5 4.5" fill="none" stroke="#444" stroke-width="1.1"/></svg>
<div style="position:absolute;left:2px;top:162px;width:1920px;height:880px;background:#e6e6e6;"></div>
<div style="position:absolute;left:2px;top:162px;width:1920px;height:6px;background:linear-gradient(#d6d6d6,#e6e6e6);"></div>
<div style="position:absolute;left:7px;top:173px;width:70px;height:26px;background:#fff;border:1px solid #c6c6c6;"></div>
<div style="position:absolute;left:14px;top:181px;font-size:12px;line-height:12px;color:#333;font-weight:normal;white-space:nowrap;">G8</div>
<div style="position:absolute;left:230px;top:173px;width:1687px;height:26px;background:#fff;border:1px solid #c6c6c6;"></div>
<div style="position:absolute;right:1617.20px;top:180px;font-size:13.2px;line-height:13.2px;color:#333;font-weight:normal;white-space:nowrap;text-align:right;letter-spacing:-0.3px;">23.61%</div>
<svg style="left:0;top:0" width="1924" height="200"><path d="M1905 184 l3.5 3.5 l3.5 -3.5" fill="none" stroke="#555" stroke-width="1.8"/></svg>
<div style="position:absolute;left:24px;top:223px;width:1876px;height:769px;background:#fff;"></div>
<div style="position:absolute;left:2px;top:209px;width:1898px;height:14px;background:#e6e6e6;"></div>
<div style="position:absolute;left:2px;top:223px;width:22px;height:769px;background:#e6e6e6;"></div>
<div style="position:absolute;left:212px;top:224px;width:1px;height:768px;background:#d4d4d4;"></div>
<div style="position:absolute;left:212px;top:209px;width:1px;height:14px;background:#c4c4c4;"></div>
<div style="position:absolute;left:297px;top:224px;width:1px;height:768px;background:#d4d4d4;"></div>
<div style="position:absolute;left:297px;top:209px;width:1px;height:14px;background:#c4c4c4;"></div>
<div style="position:absolute;left:354px;top:224px;width:1px;height:768px;background:#d4d4d4;"></div>
<div style="position:absolute;left:354px;top:209px;width:1px;height:14px;background:#c4c4c4;"></div>
<div style="position:absolute;left:411px;top:224px;width:1px;height:768px;background:#d4d4d4;"></div>
<div style="position:absolute;left:411px;top:209px;width:1px;height:14px;background:#c4c4c4;"></div>
<div style="position:absolute;left:468px;top:224px;width:1px;height:768px;background:#d4d4d4;"></div>
<div style="position:absolute;left:468px;top:209px;width:1px;height:14px;background:#c4c4c4;"></div>
<div style="position:absolute;left:525px;top:224px;width:1px;height:768px;background:#d4d4d4;"></div>
<div style="position:absolute;left:525px;top:209px;width:1px;height:14px;background:#c4c4c4;"></div>
<div style="position:absolute;left:582px;top:224px;width:1px;height:768px;background:#d4d4d4;"></div>
<div style="position:absolute;left:582px;top:209px;width:1px;height:14px;background:#c4c4c4;"></div>
<div style="position:absolute;left:639px;top:224px;width:1px;height:768px;background:#d4d4d4;"></div>
<div style="position:absolute;left:639px;top:209px;width:1px;height:14px;background:#c4c4c4;"></div>
<div style="position:absolute;left:696px;top:224px;width:1px;height:768px;background:#d4d4d4;"></div>
<div style="position:absolute;left:696px;top:209px;width:1px;height:14px;background:#c4c4c4;"></div>
<div style="position:absolute;left:753px;top:224px;width:1px;height:768px;background:#d4d4d4;"></div>
<div style="position:absolute;left:753px;top:209px;width:1px;height:14px;background:#c4c4c4;"></div>
<div style="position:absolute;left:822px;top:224px;width:1px;height:768px;background:#d4d4d4;"></div>
<div style="position:absolute;left:822px;top:209px;width:1px;height:14px;background:#c4c4c4;"></div>
<div style="position:absolute;left:891px;top:224px;width:1px;height:768px;background:#d4d4d4;"></div>
<div style="position:absolute;left:891px;top:209px;width:1px;height:14px;background:#c4c4c4;"></div>
<div style="position:absolute;left:953px;top:224px;width:1px;height:768px;background:#d4d4d4;"></div>
<div style="position:absolute;left:953px;top:209px;width:1px;height:14px;background:#c4c4c4;"></div>
<div style="position:absolute;left:1011px;top:224px;width:1px;height:768px;background:#d4d4d4;"></div>
<div style="position:absolute;left:1011px;top:209px;width:1px;height:14px;background:#c4c4c4;"></div>
<div style="position:absolute;left:1061px;top:224px;width:1px;height:768px;background:#d4d4d4;"></div>
<div style="position:absolute;left:1061px;top:209px;width:1px;height:14px;background:#c4c4c4;"></div>
<div style="position:absolute;left:1111px;top:224px;width:1px;height:768px;background:#d4d4d4;"></div>
<div style="position:absolute;left:1111px;top:209px;width:1px;height:14px;background:#c4c4c4;"></div>
<div style="position:absolute;left:1161px;top:224px;width:1px;height:768px;background:#d4d4d4;"></div>
<div style="position:absolute;left:1161px;top:209px;width:1px;height:14px;background:#c4c4c4;"></div>
<div style="position:absolute;left:1211px;top:224px;width:1px;height:768px;background:#d4d4d4;"></div>
<div style="position:absolute;left:1211px;top:209px;width:1px;height:14px;background:#c4c4c4;"></div>
<div style="position:absolute;left:1261px;top:224px;width:1px;height:768px;background:#d4d4d4;"></div>
<div style="position:absolute;left:1261px;top:209px;width:1px;height:14px;background:#c4c4c4;"></div>
<div style="position:absolute;left:1311px;top:224px;width:1px;height:768px;background:#d4d4d4;"></div>
<div style="position:absolute;left:1311px;top:209px;width:1px;height:14px;background:#c4c4c4;"></div>
<div style="position:absolute;left:1361px;top:224px;width:1px;height:768px;background:#d4d4d4;"></div>
<div style="position:absolute;left:1361px;top:209px;width:1px;height:14px;background:#c4c4c4;"></div>
<div style="position:absolute;left:1411px;top:224px;width:1px;height:768px;background:#d4d4d4;"></div>
<div style="position:absolute;left:1411px;top:209px;width:1px;height:14px;background:#c4c4c4;"></div>
<div style="position:absolute;left:1461px;top:224px;width:1px;height:768px;background:#d4d4d4;"></div>
<div style="position:absolute;left:1461px;top:209px;width:1px;height:14px;background:#c4c4c4;"></div>
<div style="position:absolute;left:1511px;top:224px;width:1px;height:768px;background:#d4d4d4;"></div>
<div style="position:absolute;left:1511px;top:209px;width:1px;height:14px;background:#c4c4c4;"></div>
<div style="position:absolute;left:1561px;top:224px;width:1px;height:768px;background:#d4d4d4;"></div>
<div style="position:absolute;left:1561px;top:209px;width:1px;height:14px;background:#c4c4c4;"></div>
<div style="position:absolute;left:1611px;top:224px;width:1px;height:768px;background:#d4d4d4;"></div>
<div style="position:absolute;left:1611px;top:209px;width:1px;height:14px;background:#c4c4c4;"></div>
<div style="position:absolute;left:1661px;top:224px;width:1px;height:768px;background:#d4d4d4;"></div>
<div style="position:absolute;left:1661px;top:209px;width:1px;height:14px;background:#c4c4c4;"></div>
<div style="position:absolute;left:1711px;top:224px;width:1px;height:768px;background:#d4d4d4;"></div>
<div style="position:absolute;left:1711px;top:209px;width:1px;height:14px;background:#c4c4c4;"></div>
<div style="position:absolute;left:1761px;top:224px;width:1px;height:768px;background:#d4d4d4;"></div>
<div style="position:absolute;left:1761px;top:209px;width:1px;height:14px;background:#c4c4c4;"></div>
<div style="position:absolute;left:1811px;top:224px;width:1px;height:768px;background:#d4d4d4;"></div>
<div style="position:absolute;left:1811px;top:209px;width:1px;height:14px;background:#c4c4c4;"></div>
<div style="position:absolute;left:1861px;top:224px;width:1px;height:768px;background:#d4d4d4;"></div>
<div style="position:absolute;left:1861px;top:209px;width:1px;height:14px;background:#c4c4c4;"></div>
<div style="position:absolute;left:25px;top:238px;width:1875px;height:1px;background:#d4d4d4;"></div>
<div style="position:absolute;left:2px;top:238px;width:22px;height:1px;background:#b4b4b4;"></div>
<div style="position:absolute;left:25px;top:253px;width:1875px;height:1px;background:#d4d4d4;"></div>
<div style="position:absolute;left:2px;top:253px;width:22px;height:1px;background:#b4b4b4;"></div>
<div style="position:absolute;left:25px;top:268px;width:1875px;height:1px;background:#d4d4d4;"></div>
<div style="position:absolute;left:2px;top:268px;width:22px;height:1px;background:#b4b4b4;"></div>
<div style="position:absolute;left:25px;top:283px;width:1875px;height:1px;background:#d4d4d4;"></div>
<div style="position:absolute;left:2px;top:283px;width:22px;height:1px;background:#b4b4b4;"></div>
<div style="position:absolute;left:25px;top:298px;width:1875px;height:1px;background:#d4d4d4;"></div>
<div style="position:absolute;left:2px;top:298px;width:22px;height:1px;background:#b4b4b4;"></div>
<div style="position:absolute;left:25px;top:313px;width:1875px;height:1px;background:#d4d4d4;"></div>
<div style="position:absolute;left:2px;top:313px;width:22px;height:1px;background:#b4b4b4;"></div>
<div style="position:absolute;left:25px;top:328px;width:1875px;height:1px;background:#d4d4d4;"></div>
<div style="position:absolute;left:2px;top:328px;width:22px;height:1px;background:#b4b4b4;"></div>
<div style="position:absolute;left:25px;top:343px;width:1875px;height:1px;background:#d4d4d4;"></div>
<div style="position:absolute;left:2px;top:343px;width:22px;height:1px;background:#b4b4b4;"></div>
<div style="position:absolute;left:25px;top:358px;width:1875px;height:1px;background:#d4d4d4;"></div>
<div style="position:absolute;left:2px;top:358px;width:22px;height:1px;background:#b4b4b4;"></div>
<div style="position:absolute;left:25px;top:373px;width:1875px;height:1px;background:#d4d4d4;"></div>
<div style="position:absolute;left:2px;top:373px;width:22px;height:1px;background:#b4b4b4;"></div>
<div style="position:absolute;left:25px;top:388px;width:1875px;height:1px;background:#d4d4d4;"></div>
<div style="position:absolute;left:2px;top:388px;width:22px;height:1px;background:#b4b4b4;"></div>
<div style="position:absolute;left:25px;top:403px;width:1875px;height:1px;background:#d4d4d4;"></div>
<div style="position:absolute;left:2px;top:403px;width:22px;height:1px;background:#b4b4b4;"></div>
<div style="position:absolute;left:25px;top:418px;width:1875px;height:1px;background:#d4d4d4;"></div>
<div style="position:absolute;left:2px;top:418px;width:22px;height:1px;background:#b4b4b4;"></div>
<div style="position:absolute;left:25px;top:433px;width:1875px;height:1px;background:#d4d4d4;"></div>
<div style="position:absolute;left:2px;top:433px;width:22px;height:1px;background:#b4b4b4;"></div>
<div style="position:absolute;left:25px;top:448px;width:1875px;height:1px;background:#d4d4d4;"></div>
<div style="position:absolute;left:2px;top:448px;width:22px;height:1px;background:#b4b4b4;"></div>
<div style="position:absolute;left:25px;top:463px;width:1875px;height:1px;background:#d4d4d4;"></div>
<div style="position:absolute;left:2px;top:463px;width:22px;height:1px;background:#b4b4b4;"></div>
<div style="position:absolute;left:25px;top:478px;width:1875px;height:1px;background:#d4d4d4;"></div>
<div style="position:absolute;left:2px;top:478px;width:22px;height:1px;background:#b4b4b4;"></div>
<div style="position:absolute;left:25px;top:493px;width:1875px;height:1px;background:#d4d4d4;"></div>
<div style="position:absolute;left:2px;top:493px;width:22px;height:1px;background:#b4b4b4;"></div>
<div style="position:absolute;left:25px;top:508px;width:1875px;height:1px;background:#d4d4d4;"></div>
<div style="position:absolute;left:2px;top:508px;width:22px;height:1px;background:#b4b4b4;"></div>
<div style="position:absolute;left:25px;top:523px;width:1875px;height:1px;background:#d4d4d4;"></div>
<div style="position:absolute;left:2px;top:523px;width:22px;height:1px;background:#b4b4b4;"></div>
<div style="position:absolute;left:25px;top:538px;width:1875px;height:1px;background:#d4d4d4;"></div>
<div style="position:absolute;left:2px;top:538px;width:22px;height:1px;background:#b4b4b4;"></div>
<div style="position:absolute;left:25px;top:553px;width:1875px;height:1px;background:#d4d4d4;"></div>
<div style="position:absolute;left:2px;top:553px;width:22px;height:1px;background:#b4b4b4;"></div>
<div style="position:absolute;left:25px;top:568px;width:1875px;height:1px;background:#d4d4d4;"></div>
<div style="position:absolute;left:2px;top:568px;width:22px;height:1px;background:#b4b4b4;"></div>
<div style="position:absolute;left:25px;top:583px;width:1875px;height:1px;background:#d4d4d4;"></div>
<div style="position:absolute;left:2px;top:583px;width:22px;height:1px;background:#b4b4b4;"></div>
<div style="position:absolute;left:25px;top:598px;width:1875px;height:1px;background:#d4d4d4;"></div>
<div style="position:absolute;left:2px;top:598px;width:22px;height:1px;background:#b4b4b4;"></div>
<div style="position:absolute;left:25px;top:613px;width:1875px;height:1px;background:#d4d4d4;"></div>
<div style="position:absolute;left:2px;top:613px;width:22px;height:1px;background:#b4b4b4;"></div>
<div style="position:absolute;left:25px;top:628px;width:1875px;height:1px;background:#d4d4d4;"></div>
<div style="position:absolute;left:2px;top:628px;width:22px;height:1px;background:#b4b4b4;"></div>
<div style="position:absolute;left:25px;top:643px;width:1875px;height:1px;background:#d4d4d4;"></div>
<div style="position:absolute;left:2px;top:643px;width:22px;height:1px;background:#b4b4b4;"></div>
<div style="position:absolute;left:25px;top:658px;width:1875px;height:1px;background:#d4d4d4;"></div>
<div style="position:absolute;left:2px;top:658px;width:22px;height:1px;background:#b4b4b4;"></div>
<div style="position:absolute;left:25px;top:673px;width:1875px;height:1px;background:#d4d4d4;"></div>
<div style="position:absolute;left:2px;top:673px;width:22px;height:1px;background:#b4b4b4;"></div>
<div style="position:absolute;left:25px;top:688px;width:1875px;height:1px;background:#d4d4d4;"></div>
<div style="position:absolute;left:2px;top:688px;width:22px;height:1px;background:#b4b4b4;"></div>
<div style="position:absolute;left:25px;top:703px;width:1875px;height:1px;background:#d4d4d4;"></div>
<div style="position:absolute;left:2px;top:703px;width:22px;height:1px;background:#b4b4b4;"></div>
<div style="position:absolute;left:25px;top:718px;width:1875px;height:1px;background:#d4d4d4;"></div>
<div style="position:absolute;left:2px;top:718px;width:22px;height:1px;background:#b4b4b4;"></div>
<div style="position:absolute;left:25px;top:733px;width:1875px;height:1px;background:#d4d4d4;"></div>
<div style="position:absolute;left:2px;top:733px;width:22px;height:1px;background:#b4b4b4;"></div>
<div style="position:absolute;left:25px;top:748px;width:1875px;height:1px;background:#d4d4d4;"></div>
<div style="position:absolute;left:2px;top:748px;width:22px;height:1px;background:#b4b4b4;"></div>
<div style="position:absolute;left:25px;top:763px;width:1875px;height:1px;background:#d4d4d4;"></div>
<div style="position:absolute;left:2px;top:763px;width:22px;height:1px;background:#b4b4b4;"></div>
<div style="position:absolute;left:25px;top:778px;width:1875px;height:1px;background:#d4d4d4;"></div>
<div style="position:absolute;left:2px;top:778px;width:22px;height:1px;background:#b4b4b4;"></div>
<div style="position:absolute;left:25px;top:793px;width:1875px;height:1px;background:#d4d4d4;"></div>
<div style="position:absolute;left:2px;top:793px;width:22px;height:1px;background:#b4b4b4;"></div>
<div style="position:absolute;left:25px;top:808px;width:1875px;height:1px;background:#d4d4d4;"></div>
<div style="position:absolute;left:2px;top:808px;width:22px;height:1px;background:#b4b4b4;"></div>
<div style="position:absolute;left:25px;top:823px;width:1875px;height:1px;background:#d4d4d4;"></div>
<div style="position:absolute;left:2px;top:823px;width:22px;height:1px;background:#b4b4b4;"></div>
<div style="position:absolute;left:25px;top:838px;width:1875px;height:1px;background:#d4d4d4;"></div>
<div style="position:absolute;left:2px;top:838px;width:22px;height:1px;background:#b4b4b4;"></div>
<div style="position:absolute;left:25px;top:853px;width:1875px;height:1px;background:#d4d4d4;"></div>
<div style="position:absolute;left:2px;top:853px;width:22px;height:1px;background:#b4b4b4;"></div>
<div style="position:absolute;left:25px;top:868px;width:1875px;height:1px;background:#d4d4d4;"></div>
<div style="position:absolute;left:2px;top:868px;width:22px;height:1px;background:#b4b4b4;"></div>
<div style="position:absolute;left:25px;top:883px;width:1875px;height:1px;background:#d4d4d4;"></div>
<div style="position:absolute;left:2px;top:883px;width:22px;height:1px;background:#b4b4b4;"></div>
<div style="position:absolute;left:25px;top:898px;width:1875px;height:1px;background:#d4d4d4;"></div>
<div style="position:absolute;left:2px;top:898px;width:22px;height:1px;background:#b4b4b4;"></div>
<div style="position:absolute;left:25px;top:913px;width:1875px;height:1px;background:#d4d4d4;"></div>
<div style="position:absolute;left:2px;top:913px;width:22px;height:1px;background:#b4b4b4;"></div>
<div style="position:absolute;left:25px;top:928px;width:1875px;height:1px;background:#d4d4d4;"></div>
<div style="position:absolute;left:2px;top:928px;width:22px;height:1px;background:#b4b4b4;"></div>
<div style="position:absolute;left:25px;top:943px;width:1875px;height:1px;background:#d4d4d4;"></div>
<div style="position:absolute;left:2px;top:943px;width:22px;height:1px;background:#b4b4b4;"></div>
<div style="position:absolute;left:25px;top:958px;width:1875px;height:1px;background:#d4d4d4;"></div>
<div style="position:absolute;left:2px;top:958px;width:22px;height:1px;background:#b4b4b4;"></div>
<div style="position:absolute;left:25px;top:973px;width:1875px;height:1px;background:#d4d4d4;"></div>
<div style="position:absolute;left:2px;top:973px;width:22px;height:1px;background:#b4b4b4;"></div>
<div style="position:absolute;left:25px;top:988px;width:1875px;height:1px;background:#d4d4d4;"></div>
<div style="position:absolute;left:2px;top:988px;width:22px;height:1px;background:#b4b4b4;"></div>
<div style="position:absolute;left:2px;top:223px;width:1898px;height:1px;background:#ababab;"></div>
<div style="position:absolute;left:24px;top:209px;width:1px;height:783px;background:#ababab;"></div>
<div style="position:absolute;left:1900px;top:223px;width:1px;height:769px;background:#a6a6a6;"></div>
<div style="position:absolute;left:525px;top:209px;width:57px;height:14px;background:#d2d2d2;"></div>
<div style="position:absolute;left:525px;top:222px;width:57px;height:2px;background:#217346;"></div>
<div style="position:absolute;left:2px;top:329px;width:22px;height:14px;background:#d2d2d2;"></div>
<div style="position:absolute;left:23px;top:328px;width:2px;height:16px;background:#217346;"></div>
<svg style="left:0;top:0" width="30" height="230"><path d="M21 213 v7 h-7 z" fill="#b4b4b4"/></svg>
<div style="position:absolute;left:-81.5px;width:400px;top:213px;font-size:9.3px;line-height:9.3px;color:#222;font-weight:normal;white-space:nowrap;text-align:center;-webkit-text-stroke:0.15px #222;">A</div>
<div style="position:absolute;left:55.0px;width:400px;top:213px;font-size:9.3px;line-height:9.3px;color:#222;font-weight:normal;white-space:nowrap;text-align:center;-webkit-text-stroke:0.15px #222;">B</div>
<div style="position:absolute;left:126.0px;width:400px;top:213px;font-size:9.3px;line-height:9.3px;color:#222;font-weight:normal;white-space:nowrap;text-align:center;-webkit-text-stroke:0.15px #222;">C</div>
<div style="position:absolute;left:183.0px;width:400px;top:213px;font-size:9.3px;line-height:9.3px;color:#222;font-weight:normal;white-space:nowrap;text-align:center;-webkit-text-stroke:0.15px #222;">D</div>
<div style="position:absolute;left:240.0px;width:400px;top:213px;font-size:9.3px;line-height:9.3px;color:#222;font-weight:normal;white-space:nowrap;text-align:center;-webkit-text-stroke:0.15px #222;">E</div>
<div style="position:absolute;left:297.0px;width:400px;top:213px;font-size:9.3px;line-height:9.3px;color:#222;font-weight:normal;white-space:nowrap;text-align:center;-webkit-text-stroke:0.15px #222;">F</div>
<div style="position:absolute;left:354.0px;width:400px;top:213px;font-size:9.3px;line-height:9.3px;color:#217346;font-weight:normal;white-space:nowrap;text-align:center;-webkit-text-stroke:0.15px #217346;">G</div>
<div style="position:absolute;left:411.0px;width:400px;top:213px;font-size:9.3px;line-height:9.3px;color:#222;font-weight:normal;white-space:nowrap;text-align:center;-webkit-text-stroke:0.15px #222;">H</div>
<div style="position:absolute;left:468.0px;width:400px;top:213px;font-size:9.3px;line-height:9.3px;color:#222;font-weight:normal;white-space:nowrap;text-align:center;-webkit-text-stroke:0.15px #222;">I</div>
<div style="position:absolute;left:525.0px;width:400px;top:213px;font-size:9.3px;line-height:9.3px;color:#222;font-weight:normal;white-space:nowrap;text-align:center;-webkit-text-stroke:0.15px #222;">J</div>
<div style="position:absolute;left:588.0px;width:400px;top:213px;font-size:9.3px;line-height:9.3px;color:#222;font-weight:normal;white-space:nowrap;text-align:center;-webkit-text-stroke:0.15px #222;">K</div>
<div style="position:absolute;left:657.0px;width:400px;top:213px;font-size:9.3px;line-height:9.3px;color:#222;font-weight:normal;white-space:nowrap;text-align:center;-webkit-text-stroke:0.15px #222;">L</div>
<div style="position:absolute;left:722.5px;width:400px;top:213px;font-size:9.3px;line-height:9.3px;color:#222;font-weight:normal;white-space:nowrap;text-align:center;-webkit-text-stroke:0.15px #222;">M</div>
<div style="position:absolute;left:782.5px;width:400px;top:213px;font-size:9.3px;line-height:9.3px;color:#222;font-weight:normal;white-space:nowrap;text-align:center;-webkit-text-stroke:0.15px #222;">N</div>
<div style="position:absolute;left:836.5px;width:400px;top:213px;font-size:9.3px;line-height:9.3px;color:#222;font-weight:normal;white-space:nowrap;text-align:center;-webkit-text-stroke:0.15px #222;">O</div>
<div style="position:absolute;left:886.5px;width:400px;top:213px;font-size:9.3px;line-height:9.3px;color:#222;font-weight:normal;white-space:nowrap;text-align:center;-webkit-text-stroke:0.15px #222;">P</div>
<div style="position:absolute;left:936.5px;width:400px;top:213px;font-size:9.3px;line-height:9.3px;color:#222;font-weight:normal;white-space:nowrap;text-align:center;-webkit-text-stroke:0.15px #222;">Q</div>
<div style="position:absolute;left:986.5px;width:400px;top:213px;font-size:9.3px;line-height:9.3px;color:#222;font-weight:normal;white-space:nowrap;text-align:center;-webkit-text-stroke:0.15px #222;">R</div>
<div style="position:absolute;left:1036.5px;width:400px;top:213px;font-size:9.3px;line-height:9.3px;color:#222;font-weight:normal;white-space:nowrap;text-align:center;-webkit-text-stroke:0.15px #222;">S</div>
<div style="position:absolute;left:1086.5px;width:400px;top:213px;font-size:9.3px;line-height:9.3px;color:#222;font-weight:normal;white-space:nowrap;text-align:center;-webkit-text-stroke:0.15px #222;">T</div>
<div style="position:absolute;left:1136.5px;width:400px;top:213px;font-size:9.3px;line-height:9.3px;color:#222;font-weight:normal;white-space:nowrap;text-align:center;-webkit-text-stroke:0.15px #222;">U</div>
<div style="position:absolute;left:1186.5px;width:400px;top:213px;font-size:9.3px;line-height:9.3px;color:#222;font-weight:normal;white-space:nowrap;text-align:center;-webkit-text-stroke:0.15px #222;">V</div>
<div style="position:absolute;left:1236.5px;width:400px;top:213px;font-size:9.3px;line-height:9.3px;color:#222;font-weight:normal;white-space:nowrap;text-align:center;-webkit-text-stroke:0.15px #222;">W</div>
<div style="position:absolute;left:1286.5px;width:400px;top:213px;font-size:9.3px;line-height:9.3px;color:#222;font-weight:normal;white-space:nowrap;text-align:center;-webkit-text-stroke:0.15px #222;">X</div>
<div style="position:absolute;left:1336.5px;width:400px;top:213px;font-size:9.3px;line-height:9.3px;color:#222;font-weight:normal;white-space:nowrap;text-align:center;-webkit-text-stroke:0.15px #222;">Y</div>
<div style="position:absolute;left:1386.5px;width:400px;top:213px;font-size:9.3px;line-height:9.3px;color:#222;font-weight:normal;white-space:nowrap;text-align:center;-webkit-text-stroke:0.15px #222;">Z</div>
<div style="position:absolute;left:1436.5px;width:400px;top:213px;font-size:9.3px;line-height:9.3px;color:#222;font-weight:normal;white-space:nowrap;text-align:center;-webkit-text-stroke:0.15px #222;">AA</div>
<div style="position:absolute;left:1486.5px;width:400px;top:213px;font-size:9.3px;line-height:9.3px;color:#222;font-weight:normal;white-space:nowrap;text-align:center;-webkit-text-stroke:0.15px #222;">AB</div>
<div style="position:absolute;left:1536.5px;width:400px;top:213px;font-size:9.3px;line-height:9.3px;color:#222;font-weight:normal;white-space:nowrap;text-align:center;-webkit-text-stroke:0.15px #222;">AC</div>
<div style="position:absolute;left:1586.5px;width:400px;top:213px;font-size:9.3px;line-height:9.3px;color:#222;font-weight:normal;white-space:nowrap;text-align:center;-webkit-text-stroke:0.15px #222;">AD</div>
<div style="position:absolute;left:1636.5px;width:400px;top:213px;font-size:9.3px;line-height:9.3px;color:#222;font-weight:normal;white-space:nowrap;text-align:center;-webkit-text-stroke:0.15px #222;">AE</div>
<div style="position:absolute;left:1686.5px;width:400px;top:213px;font-size:9.3px;line-height:9.3px;color:#222;font-weight:normal;white-space:nowrap;text-align:center;-webkit-text-stroke:0.15px #222;">AF</div>
<div style="position:absolute;left:-186.5px;width:400px;top:227px;font-size:9.6px;line-height:9.6px;color:#222;font-weight:normal;white-space:nowrap;text-align:center;-webkit-text-stroke:0.05px #222;">1</div>
<div style="position:absolute;left:-186.5px;width:400px;top:242px;font-size:9.6px;line-height:9.6px;color:#222;font-weight:normal;white-space:nowrap;text-align:center;-webkit-text-stroke:0.05px #222;">2</div>
<div style="position:absolute;left:-186.5px;width:400px;top:257px;font-size:9.6px;line-height:9.6px;color:#222;font-weight:normal;white-space:nowrap;text-align:center;-webkit-text-stroke:0.05px #222;">3</div>
<div style="position:absolute;left:-186.5px;width:400px;top:272px;font-size:9.6px;line-height:9.6px;color:#222;font-weight:normal;white-space:nowrap;text-align:center;-webkit-text-stroke:0.05px #222;">4</div>
<div style="position:absolute;left:-186.5px;width:400px;top:287px;font-size:9.6px;line-height:9.6px;color:#222;font-weight:normal;white-space:nowrap;text-align:center;-webkit-text-stroke:0.05px #222;">5</div>
<div style="position:absolute;left:-186.5px;width:400px;top:302px;font-size:9.6px;line-height:9.6px;color:#222;font-weight:normal;white-space:nowrap;text-align:center;-webkit-text-stroke:0.05px #222;">6</div>
<div style="position:absolute;left:-186.5px;width:400px;top:317px;font-size:9.6px;line-height:9.6px;color:#222;font-weight:normal;white-space:nowrap;text-align:center;-webkit-text-stroke:0.05px #222;">7</div>
<div style="position:absolute;left:-186.5px;width:400px;top:332px;font-size:9.6px;line-height:9.6px;color:#217346;font-weight:normal;white-space:nowrap;text-align:center;-webkit-text-stroke:0.05px #217346;">8</div>
<div style="position:absolute;left:-186.5px;width:400px;top:347px;font-size:9.6px;line-height:9.6px;color:#222;font-weight:normal;white-space:nowrap;text-align:center;-webkit-text-stroke:0.05px #222;">9</div>
<div style="position:absolute;left:-186.5px;width:400px;top:362px;font-size:9.6px;line-height:9.6px;color:#222;font-weight:normal;white-space:nowrap;text-align:center;-webkit-text-stroke:0.05px #222;">10</div>
<div style="position:absolute;left:-186.5px;width:400px;top:377px;font-size:9.6px;line-height:9.6px;color:#222;font-weight:normal;white-space:nowrap;text-align:center;-webkit-text-stroke:0.05px #222;">11</div>
<div style="position:absolute;left:-186.5px;width:400px;top:392px;font-size:9.6px;line-height:9.6px;color:#222;font-weight:normal;white-space:nowrap;text-align:center;-webkit-text-stroke:0.05px #222;">12</div>
<div style="position:absolute;left:-186.5px;width:400px;top:407px;font-size:9.6px;line-height:9.6px;color:#222;font-weight:normal;white-space:nowrap;text-align:center;-webkit-text-stroke:0.05px #222;">13</div>
<div style="position:absolute;left:-186.5px;width:400px;top:422px;font-size:9.6px;line-height:9.6px;color:#222;font-weight:normal;white-space:nowrap;text-align:center;-webkit-text-stroke:0.05px #222;">14</div>
<div style="position:absolute;left:-186.5px;width:400px;top:437px;font-size:9.6px;line-height:9.6px;color:#222;font-weight:normal;white-space:nowrap;text-align:center;-webkit-text-stroke:0.05px #222;">15</div>
<div style="position:absolute;left:-186.5px;width:400px;top:452px;font-size:9.6px;line-height:9.6px;color:#222;font-weight:normal;white-space:nowrap;text-align:center;-webkit-text-stroke:0.05px #222;">16</div>
<div style="position:absolute;left:-186.5px;width:400px;top:467px;font-size:9.6px;line-height:9.6px;color:#222;font-weight:normal;white-space:nowrap;text-align:center;-webkit-text-stroke:0.05px #222;">17</div>
<div style="position:absolute;left:-186.5px;width:400px;top:482px;font-size:9.6px;line-height:9.6px;color:#222;font-weight:normal;white-space:nowrap;text-align:center;-webkit-text-stroke:0.05px #222;">18</div>
<div style="position:absolute;left:-186.5px;width:400px;top:497px;font-size:9.6px;line-height:9.6px;color:#222;font-weight:normal;white-space:nowrap;text-align:center;-webkit-text-stroke:0.05px #222;">19</div>
<div style="position:absolute;left:-186.5px;width:400px;top:512px;font-size:9.6px;line-height:9.6px;color:#222;font-weight:normal;white-space:nowrap;text-align:center;-webkit-text-stroke:0.05px #222;">20</div>
<div style="position:absolute;left:-186.5px;width:400px;top:527px;font-size:9.6px;line-height:9.6px;color:#222;font-weight:normal;white-space:nowrap;text-align:center;-webkit-text-stroke:0.05px #222;">21</div>
<div style="position:absolute;left:-186.5px;width:400px;top:542px;font-size:9.6px;line-height:9.6px;color:#222;font-weight:normal;white-space:nowrap;text-align:center;-webkit-text-stroke:0.05px #222;">22</div>
<div style="position:absolute;left:-186.5px;width:400px;top:557px;font-size:9.6px;line-height:9.6px;color:#222;font-weight:normal;white-space:nowrap;text-align:center;-webkit-text-stroke:0.05px #222;">23</div>
<div style="position:absolute;left:-186.5px;width:400px;top:572px;font-size:9.6px;line-height:9.6px;color:#222;font-weight:normal;white-space:nowrap;text-align:center;-webkit-text-stroke:0.05px #222;">24</div>
<div style="position:absolute;left:-186.5px;width:400px;top:587px;font-size:9.6px;line-height:9.6px;color:#222;font-weight:normal;white-space:nowrap;text-align:center;-webkit-text-stroke:0.05px #222;">25</div>
<div style="position:absolute;left:-186.5px;width:400px;top:602px;font-size:9.6px;line-height:9.6px;color:#222;font-weight:normal;white-space:nowrap;text-align:center;-webkit-text-stroke:0.05px #222;">26</div>
<div style="position:absolute;left:-186.5px;width:400px;top:617px;font-size:9.6px;line-height:9.6px;color:#222;font-weight:normal;white-space:nowrap;text-align:center;-webkit-text-stroke:0.05px #222;">27</div>
<div style="position:absolute;left:-186.5px;width:400px;top:632px;font-size:9.6px;line-height:9.6px;color:#222;font-weight:normal;white-space:nowrap;text-align:center;-webkit-text-stroke:0.05px #222;">28</div>
<div style="position:absolute;left:-186.5px;width:400px;top:647px;font-size:9.6px;line-height:9.6px;color:#222;font-weight:normal;white-space:nowrap;text-align:center;-webkit-text-stroke:0.05px #222;">29</div>
<div style="position:absolute;left:-186.5px;width:400px;top:662px;font-size:9.6px;line-height:9.6px;color:#222;font-weight:normal;white-space:nowrap;text-align:center;-webkit-text-stroke:0.05px #222;">30</div>
<div style="position:absolute;left:-186.5px;width:400px;top:677px;font-size:9.6px;line-height:9.6px;color:#222;font-weight:normal;white-space:nowrap;text-align:center;-webkit-text-stroke:0.05px #222;">31</div>
<div style="position:absolute;left:-186.5px;width:400px;top:692px;font-size:9.6px;line-height:9.6px;color:#222;font-weight:normal;white-space:nowrap;text-align:center;-webkit-text-stroke:0.05px #222;">32</div>
<div style="position:absolute;left:-186.5px;width:400px;top:707px;font-size:9.6px;line-height:9.6px;color:#222;font-weight:normal;white-space:nowrap;text-align:center;-webkit-text-stroke:0.05px #222;">33</div>
<div style="position:absolute;left:-186.5px;width:400px;top:722px;font-size:9.6px;line-height:9.6px;color:#222;font-weight:normal;white-space:nowrap;text-align:center;-webkit-text-stroke:0.05px #222;">34</div>
<div style="position:absolute;left:-186.5px;width:400px;top:737px;font-size:9.6px;line-height:9.6px;color:#222;font-weight:normal;white-space:nowrap;text-align:center;-webkit-text-stroke:0.05px #222;">35</div>
<div style="position:absolute;left:-186.5px;width:400px;top:752px;font-size:9.6px;line-height:9.6px;color:#222;font-weight:normal;white-space:nowrap;text-align:center;-webkit-text-stroke:0.05px #222;">36</div>
<div style="position:absolute;left:-186.5px;width:400px;top:767px;font-size:9.6px;line-height:9.6px;color:#222;font-weight:normal;white-space:nowrap;text-align:center;-webkit-text-stroke:0.05px #222;">37</div>
<div style="position:absolute;left:-186.5px;width:400px;top:782px;font-size:9.6px;line-height:9.6px;color:#222;font-weight:normal;white-space:nowrap;text-align:center;-webkit-text-stroke:0.05px #222;">38</div>
<div style="position:absolute;left:-186.5px;width:400px;top:797px;font-size:9.6px;line-height:9.6px;color:#222;font-weight:normal;white-space:nowrap;text-align:center;-webkit-text-stroke:0.05px #222;">39</div>
<div style="position:absolute;left:-186.5px;width:400px;top:812px;font-size:9.6px;line-height:9.6px;color:#222;font-weight:normal;white-space:nowrap;text-align:center;-webkit-text-stroke:0.05px #222;">40</div>
<div style="position:absolute;left:-186.5px;width:400px;top:827px;font-size:9.6px;line-height:9.6px;color:#222;font-weight:normal;white-space:nowrap;text-align:center;-webkit-text-stroke:0.05px #222;">41</div>
<div style="position:absolute;left:-186.5px;width:400px;top:842px;font-size:9.6px;line-height:9.6px;color:#222;font-weight:normal;white-space:nowrap;text-align:center;-webkit-text-stroke:0.05px #222;">42</div>
<div style="position:absolute;left:-186.5px;width:400px;top:857px;font-size:9.6px;line-height:9.6px;color:#222;font-weight:normal;white-space:nowrap;text-align:center;-webkit-text-stroke:0.05px #222;">43</div>
<div style="position:absolute;left:-186.5px;width:400px;top:872px;font-size:9.6px;line-height:9.6px;color:#222;font-weight:normal;white-space:nowrap;text-align:center;-webkit-text-stroke:0.05px #222;">44</div>
<div style="position:absolute;left:-186.5px;width:400px;top:887px;font-size:9.6px;line-height:9.6px;color:#222;font-weight:normal;white-space:nowrap;text-align:center;-webkit-text-stroke:0.05px #222;">45</div>
<div style="position:absolute;left:-186.5px;width:400px;top:902px;font-size:9.6px;line-height:9.6px;color:#222;font-weight:normal;white-space:nowrap;text-align:center;-webkit-text-stroke:0.05px #222;">46</div>
<div style="position:absolute;left:-186.5px;width:400px;top:917px;font-size:9.6px;line-height:9.6px;color:#222;font-weight:normal;white-space:nowrap;text-align:center;-webkit-text-stroke:0.05px #222;">47</div>
<div style="position:absolute;left:-186.5px;width:400px;top:932px;font-size:9.6px;line-height:9.6px;color:#222;font-weight:normal;white-space:nowrap;text-align:center;-webkit-text-stroke:0.05px #222;">48</div>
<div style="position:absolute;left:-186.5px;width:400px;top:947px;font-size:9.6px;line-height:9.6px;color:#222;font-weight:normal;white-space:nowrap;text-align:center;-webkit-text-stroke:0.05px #222;">49</div>
<div style="position:absolute;left:-186.5px;width:400px;top:962px;font-size:9.6px;line-height:9.6px;color:#222;font-weight:normal;white-space:nowrap;text-align:center;-webkit-text-stroke:0.05px #222;">50</div>
<div style="position:absolute;left:-186.5px;width:400px;top:977px;font-size:9.6px;line-height:9.6px;color:#222;font-weight:normal;white-space:nowrap;text-align:center;-webkit-text-stroke:0.05px #222;">51</div>
<div style="position:absolute;left:25px;top:253px;width:986px;height:30px;background:#548235;"></div>
<div style="position:absolute;left:25px;top:283px;width:986px;height:1px;background:#c6e0b4;"></div>
<div style="position:absolute;left:25px;top:284px;width:986px;height:14px;background:#fff;"></div>
<div style="position:absolute;left:212px;top:284px;width:86px;height:14px;background:#8bc97d;"></div>
<div style="position:absolute;left:297px;top:284px;width:58px;height:14px;background:#8ac97d;"></div>
<div style="position:absolute;left:354px;top:284px;width:58px;height:14px;background:#89c97d;"></div>
<div style="position:absolute;left:411px;top:284px;width:58px;height:14px;background:#90cb7e;"></div>
<div style="position:absolute;left:468px;top:284px;width:58px;height:14px;background:#89c97d;"></div>
<div style="position:absolute;left:525px;top:284px;width:58px;height:14px;background:#86c87d;"></div>
<div style="position:absolute;left:582px;top:284px;width:58px;height:14px;background:#87c87d;"></div>
<div style="position:absolute;left:639px;top:284px;width:58px;height:14px;background:#83c77d;"></div>
<div style="position:absolute;left:696px;top:284px;width:58px;height:14px;background:#83c77d;"></div>
<div style="position:absolute;left:753px;top:284px;width:70px;height:14px;background:#87c87d;"></div>
<div style="position:absolute;left:822px;top:284px;width:70px;height:14px;background:#85c87d;"></div>
<div style="position:absolute;left:891px;top:284px;width:63px;height:14px;background:#8ac97d;"></div>
<div style="position:absolute;left:25px;top:298px;width:986px;height:1px;background:#e2efda;"></div>
<div style="position:absolute;left:25px;top:299px;width:986px;height:14px;background:#fff;"></div>
<div style="position:absolute;left:212px;top:299px;width:86px;height:14px;background:#ffe984;"></div>
<div style="position:absolute;left:297px;top:299px;width:58px;height:14px;background:#ffea84;"></div>
<div style="position:absolute;left:354px;top:299px;width:58px;height:14px;background:#ffea84;"></div>
<div style="position:absolute;left:411px;top:299px;width:58px;height:14px;background:#ffea84;"></div>
<div style="position:absolute;left:468px;top:299px;width:58px;height:14px;background:#ffe984;"></div>
<div style="position:absolute;left:525px;top:299px;width:58px;height:14px;background:#ffea84;"></div>
<div style="position:absolute;left:582px;top:299px;width:58px;height:14px;background:#ffea84;"></div>
<div style="position:absolute;left:639px;top:299px;width:58px;height:14px;background:#ffea84;"></div>
<div style="position:absolute;left:696px;top:299px;width:58px;height:14px;background:#ffea84;"></div>
<div style="position:absolute;left:753px;top:299px;width:70px;height:14px;background:#ffea84;"></div>
<div style="position:absolute;left:822px;top:299px;width:70px;height:14px;background:#ffeb84;"></div>
<div style="position:absolute;left:891px;top:299px;width:63px;height:14px;background:#ffeb84;"></div>
<div style="position:absolute;left:25px;top:313px;width:986px;height:1px;background:#e2efda;"></div>
<div style="position:absolute;left:25px;top:314px;width:986px;height:14px;background:#fff;"></div>
<div style="position:absolute;left:212px;top:314px;width:86px;height:14px;background:#ffe984;"></div>
<div style="position:absolute;left:297px;top:314px;width:58px;height:14px;background:#ffea84;"></div>
<div style="position:absolute;left:354px;top:314px;width:58px;height:14px;background:#ffea84;"></div>
<div style="position:absolute;left:411px;top:314px;width:58px;height:14px;background:#ffea84;"></div>
<div style="position:absolute;left:468px;top:314px;width:58px;height:14px;background:#ffe984;"></div>
<div style="position:absolute;left:525px;top:314px;width:58px;height:14px;background:#ffea84;"></div>
<div style="position:absolute;left:582px;top:314px;width:58px;height:14px;background:#ffea84;"></div>
<div style="position:absolute;left:639px;top:314px;width:58px;height:14px;background:#ffea84;"></div>
<div style="position:absolute;left:696px;top:314px;width:58px;height:14px;background:#ffea84;"></div>
<div style="position:absolute;left:753px;top:314px;width:70px;height:14px;background:#ffea84;"></div>
<div style="position:absolute;left:822px;top:314px;width:70px;height:14px;background:#ffeb84;"></div>
<div style="position:absolute;left:891px;top:314px;width:63px;height:14px;background:#ffeb84;"></div>
<div style="position:absolute;left:25px;top:328px;width:986px;height:1px;background:#e2efda;"></div>
<div style="position:absolute;left:25px;top:329px;width:986px;height:14px;background:#fff;"></div>
<div style="position:absolute;left:212px;top:329px;width:86px;height:14px;background:#e8e483;"></div>
<div style="position:absolute;left:297px;top:329px;width:58px;height:14px;background:#f2e783;"></div>
<div style="position:absolute;left:354px;top:329px;width:58px;height:14px;background:#f4e883;"></div>
<div style="position:absolute;left:411px;top:329px;width:58px;height:14px;background:#ece683;"></div>
<div style="position:absolute;left:468px;top:329px;width:58px;height:14px;background:#f3e783;"></div>
<div style="position:absolute;left:525px;top:329px;width:58px;height:14px;background:#f0e783;"></div>
<div style="position:absolute;left:582px;top:329px;width:58px;height:14px;background:#ece583;"></div>
<div style="position:absolute;left:639px;top:329px;width:58px;height:14px;background:#e7e483;"></div>
<div style="position:absolute;left:696px;top:329px;width:58px;height:14px;background:#e9e583;"></div>
<div style="position:absolute;left:753px;top:329px;width:70px;height:14px;background:#eae583;"></div>
<div style="position:absolute;left:822px;top:329px;width:70px;height:14px;background:#f1e783;"></div>
<div style="position:absolute;left:891px;top:329px;width:63px;height:14px;background:#e8e483;"></div>
<div style="position:absolute;left:25px;top:343px;width:986px;height:1px;background:#e2efda;"></div>
<div style="position:absolute;left:25px;top:344px;width:986px;height:14px;background:#fff;"></div>
<div style="position:absolute;left:212px;top:344px;width:86px;height:14px;background:#c5da81;"></div>
<div style="position:absolute;left:297px;top:344px;width:58px;height:14px;background:#b2d580;"></div>
<div style="position:absolute;left:354px;top:344px;width:58px;height:14px;background:#bfd880;"></div>
<div style="position:absolute;left:411px;top:344px;width:58px;height:14px;background:#c6db81;"></div>
<div style="position:absolute;left:468px;top:344px;width:58px;height:14px;background:#b5d680;"></div>
<div style="position:absolute;left:525px;top:344px;width:58px;height:14px;background:#c0d980;"></div>
<div style="position:absolute;left:582px;top:344px;width:58px;height:14px;background:#c4da81;"></div>
<div style="position:absolute;left:639px;top:344px;width:58px;height:14px;background:#bdd880;"></div>
<div style="position:absolute;left:696px;top:344px;width:58px;height:14px;background:#c0d980;"></div>
<div style="position:absolute;left:753px;top:344px;width:70px;height:14px;background:#bfd980;"></div>
<div style="position:absolute;left:822px;top:344px;width:70px;height:14px;background:#b8d780;"></div>
<div style="position:absolute;left:891px;top:344px;width:63px;height:14px;background:#c0d980;"></div>
<div style="position:absolute;left:25px;top:358px;width:986px;height:1px;background:#e2efda;"></div>
<div style="position:absolute;left:25px;top:359px;width:986px;height:14px;background:#fff;"></div>
<div style="position:absolute;left:212px;top:359px;width:86px;height:14px;background:#eae583;"></div>
<div style="position:absolute;left:297px;top:359px;width:58px;height:14px;background:#d3de81;"></div>
<div style="position:absolute;left:354px;top:359px;width:58px;height:14px;background:#d3de81;"></div>
<div style="position:absolute;left:411px;top:359px;width:58px;height:14px;background:#e5e482;"></div>
<div style="position:absolute;left:468px;top:359px;width:58px;height:14px;background:#ffea84;"></div>
<div style="position:absolute;left:525px;top:359px;width:58px;height:14px;background:#e5e482;"></div>
<div style="position:absolute;left:582px;top:359px;width:58px;height:14px;background:#e5e482;"></div>
<div style="position:absolute;left:639px;top:359px;width:58px;height:14px;background:#e5e482;"></div>
<div style="position:absolute;left:696px;top:359px;width:58px;height:14px;background:#d3de81;"></div>
<div style="position:absolute;left:753px;top:359px;width:70px;height:14px;background:#fdea84;"></div>
<div style="position:absolute;left:822px;top:359px;width:70px;height:14px;background:#d3de81;"></div>
<div style="position:absolute;left:891px;top:359px;width:63px;height:14px;background:#e5e482;"></div>
<div style="position:absolute;left:25px;top:373px;width:986px;height:1px;background:#e2efda;"></div>
<div style="position:absolute;left:25px;top:374px;width:986px;height:14px;background:#fff;"></div>
<div style="position:absolute;left:212px;top:374px;width:86px;height:14px;background:#eae583;"></div>
<div style="position:absolute;left:297px;top:374px;width:58px;height:14px;background:#d3de81;"></div>
<div style="position:absolute;left:354px;top:374px;width:58px;height:14px;background:#d3de81;"></div>
<div style="position:absolute;left:411px;top:374px;width:58px;height:14px;background:#e5e482;"></div>
<div style="position:absolute;left:468px;top:374px;width:58px;height:14px;background:#ffea84;"></div>
<div style="position:absolute;left:525px;top:374px;width:58px;height:14px;background:#e5e482;"></div>
<div style="position:absolute;left:582px;top:374px;width:58px;height:14px;background:#e5e482;"></div>
<div style="position:absolute;left:639px;top:374px;width:58px;height:14px;background:#e5e482;"></div>
<div style="position:absolute;left:696px;top:374px;width:58px;height:14px;background:#d3de81;"></div>
<div style="position:absolute;left:753px;top:374px;width:70px;height:14px;background:#fdea84;"></div>
<div style="position:absolute;left:822px;top:374px;width:70px;height:14px;background:#d3de81;"></div>
<div style="position:absolute;left:891px;top:374px;width:63px;height:14px;background:#e5e482;"></div>
<div style="position:absolute;left:25px;top:388px;width:986px;height:1px;background:#e2efda;"></div>
<div style="position:absolute;left:25px;top:389px;width:986px;height:14px;background:#fff;"></div>
<div style="position:absolute;left:212px;top:389px;width:86px;height:14px;background:#7bc57c;"></div>
<div style="position:absolute;left:297px;top:389px;width:58px;height:14px;background:#7bc57c;"></div>
<div style="position:absolute;left:354px;top:389px;width:58px;height:14px;background:#7bc57c;"></div>
<div style="position:absolute;left:411px;top:389px;width:58px;height:14px;background:#7bc57c;"></div>
<div style="position:absolute;left:468px;top:389px;width:58px;height:14px;background:#7cc57c;"></div>
<div style="position:absolute;left:525px;top:389px;width:58px;height:14px;background:#7bc57c;"></div>
<div style="position:absolute;left:582px;top:389px;width:58px;height:14px;background:#7bc57c;"></div>
<div style="position:absolute;left:639px;top:389px;width:58px;height:14px;background:#7cc57c;"></div>
<div style="position:absolute;left:696px;top:389px;width:58px;height:14px;background:#7bc57c;"></div>
<div style="position:absolute;left:753px;top:389px;width:70px;height:14px;background:#7bc57c;"></div>
<div style="position:absolute;left:822px;top:389px;width:70px;height:14px;background:#7bc57c;"></div>
<div style="position:absolute;left:891px;top:389px;width:63px;height:14px;background:#82c77d;"></div>
<div style="position:absolute;left:25px;top:403px;width:986px;height:1px;background:#e2efda;"></div>
<div style="position:absolute;left:25px;top:404px;width:986px;height:14px;background:#fff;"></div>
<div style="position:absolute;left:212px;top:404px;width:86px;height:14px;background:#68bf7b;"></div>
<div style="position:absolute;left:297px;top:404px;width:58px;height:14px;background:#68bf7b;"></div>
<div style="position:absolute;left:354px;top:404px;width:58px;height:14px;background:#66bf7b;"></div>
<div style="position:absolute;left:411px;top:404px;width:58px;height:14px;background:#69c07b;"></div>
<div style="position:absolute;left:468px;top:404px;width:58px;height:14px;background:#65bf7b;"></div>
<div style="position:absolute;left:525px;top:404px;width:58px;height:14px;background:#65bf7b;"></div>
<div style="position:absolute;left:582px;top:404px;width:58px;height:14px;background:#65bf7b;"></div>
<div style="position:absolute;left:639px;top:404px;width:58px;height:14px;background:#65bf7b;"></div>
<div style="position:absolute;left:696px;top:404px;width:58px;height:14px;background:#67bf7b;"></div>
<div style="position:absolute;left:753px;top:404px;width:70px;height:14px;background:#63be7b;"></div>
<div style="position:absolute;left:822px;top:404px;width:70px;height:14px;background:#66bf7b;"></div>
<div style="position:absolute;left:891px;top:404px;width:63px;height:14px;background:#69c07b;"></div>
<div style="position:absolute;left:25px;top:418px;width:986px;height:1px;background:#e2efda;"></div>
<div style="position:absolute;left:25px;top:419px;width:986px;height:14px;background:#fff;"></div>
<div style="position:absolute;left:212px;top:419px;width:86px;height:14px;background:#fcb479;"></div>
<div style="position:absolute;left:297px;top:419px;width:58px;height:14px;background:#fcb87a;"></div>
<div style="position:absolute;left:354px;top:419px;width:58px;height:14px;background:#fcb97a;"></div>
<div style="position:absolute;left:411px;top:419px;width:58px;height:14px;background:#fcba7a;"></div>
<div style="position:absolute;left:468px;top:419px;width:58px;height:14px;background:#fcb57a;"></div>
<div style="position:absolute;left:525px;top:419px;width:58px;height:14px;background:#fcb379;"></div>
<div style="position:absolute;left:582px;top:419px;width:58px;height:14px;background:#fcb77a;"></div>
<div style="position:absolute;left:639px;top:419px;width:58px;height:14px;background:#fcb77a;"></div>
<div style="position:absolute;left:696px;top:419px;width:58px;height:14px;background:#fcb87a;"></div>
<div style="position:absolute;left:753px;top:419px;width:70px;height:14px;background:#fcba7b;"></div>
<div style="position:absolute;left:822px;top:419px;width:70px;height:14px;background:#fcb87a;"></div>
<div style="position:absolute;left:891px;top:419px;width:63px;height:14px;background:#fcb67a;"></div>
<div style="position:absolute;left:25px;top:433px;width:986px;height:1px;background:#e2efda;"></div>
<div style="position:absolute;left:25px;top:434px;width:986px;height:14px;background:#fff;"></div>
<div style="position:absolute;left:212px;top:434px;width:86px;height:14px;background:#fba276;"></div>
<div style="position:absolute;left:297px;top:434px;width:58px;height:14px;background:#fba476;"></div>
<div style="position:absolute;left:354px;top:434px;width:58px;height:14px;background:#fba476;"></div>
<div style="position:absolute;left:411px;top:434px;width:58px;height:14px;background:#fba476;"></div>
<div style="position:absolute;left:468px;top:434px;width:58px;height:14px;background:#fba476;"></div>
<div style="position:absolute;left:525px;top:434px;width:58px;height:14px;background:#fba376;"></div>
<div style="position:absolute;left:582px;top:434px;width:58px;height:14px;background:#fba476;"></div>
<div style="position:absolute;left:639px;top:434px;width:58px;height:14px;background:#fba476;"></div>
<div style="position:absolute;left:696px;top:434px;width:58px;height:14px;background:#fba476;"></div>
<div style="position:absolute;left:753px;top:434px;width:70px;height:14px;background:#fba476;"></div>
<div style="position:absolute;left:822px;top:434px;width:70px;height:14px;background:#fba576;"></div>
<div style="position:absolute;left:891px;top:434px;width:63px;height:14px;background:#fba376;"></div>
<div style="position:absolute;left:25px;top:448px;width:986px;height:1px;background:#e2efda;"></div>
<div style="position:absolute;left:25px;top:449px;width:986px;height:14px;background:#fff;"></div>
<div style="position:absolute;left:212px;top:449px;width:86px;height:14px;background:#fbaa77;"></div>
<div style="position:absolute;left:297px;top:449px;width:58px;height:14px;background:#fcaa78;"></div>
<div style="position:absolute;left:354px;top:449px;width:58px;height:14px;background:#fba877;"></div>
<div style="position:absolute;left:411px;top:449px;width:58px;height:14px;background:#fba877;"></div>
<div style="position:absolute;left:468px;top:449px;width:58px;height:14px;background:#fcae78;"></div>
<div style="position:absolute;left:525px;top:449px;width:58px;height:14px;background:#fba677;"></div>
<div style="position:absolute;left:582px;top:449px;width:58px;height:14px;background:#fbaa77;"></div>
<div style="position:absolute;left:639px;top:449px;width:58px;height:14px;background:#fcab78;"></div>
<div style="position:absolute;left:696px;top:449px;width:58px;height:14px;background:#fbaa77;"></div>
<div style="position:absolute;left:753px;top:449px;width:70px;height:14px;background:#fba877;"></div>
<div style="position:absolute;left:822px;top:449px;width:70px;height:14px;background:#fcac78;"></div>
<div style="position:absolute;left:891px;top:449px;width:63px;height:14px;background:#fba677;"></div>
<div style="position:absolute;left:25px;top:463px;width:986px;height:1px;background:#e2efda;"></div>
<div style="position:absolute;left:25px;top:464px;width:986px;height:14px;background:#fff;"></div>
<div style="position:absolute;left:212px;top:464px;width:86px;height:14px;background:#fcbc7b;"></div>
<div style="position:absolute;left:297px;top:464px;width:58px;height:14px;background:#fdc07c;"></div>
<div style="position:absolute;left:354px;top:464px;width:58px;height:14px;background:#fdc17c;"></div>
<div style="position:absolute;left:411px;top:464px;width:58px;height:14px;background:#fdc17c;"></div>
<div style="position:absolute;left:468px;top:464px;width:58px;height:14px;background:#fdc17c;"></div>
<div style="position:absolute;left:525px;top:464px;width:58px;height:14px;background:#fcbc7b;"></div>
<div style="position:absolute;left:582px;top:464px;width:58px;height:14px;background:#fdc17c;"></div>
<div style="position:absolute;left:639px;top:464px;width:58px;height:14px;background:#fdc17c;"></div>
<div style="position:absolute;left:696px;top:464px;width:58px;height:14px;background:#fdc17c;"></div>
<div style="position:absolute;left:753px;top:464px;width:70px;height:14px;background:#fdc07c;"></div>
<div style="position:absolute;left:822px;top:464px;width:70px;height:14px;background:#fdc17c;"></div>
<div style="position:absolute;left:891px;top:464px;width:63px;height:14px;background:#fdc17c;"></div>
<div style="position:absolute;left:25px;top:478px;width:986px;height:1px;background:#e2efda;"></div>
<div style="position:absolute;left:25px;top:479px;width:986px;height:14px;background:#fff;"></div>
<div style="position:absolute;left:212px;top:479px;width:86px;height:14px;background:#fcbc7b;"></div>
<div style="position:absolute;left:297px;top:479px;width:58px;height:14px;background:#fdbe7b;"></div>
<div style="position:absolute;left:354px;top:479px;width:58px;height:14px;background:#fdbe7b;"></div>
<div style="position:absolute;left:411px;top:479px;width:58px;height:14px;background:#fdbe7b;"></div>
<div style="position:absolute;left:468px;top:479px;width:58px;height:14px;background:#fdbd7b;"></div>
<div style="position:absolute;left:525px;top:479px;width:58px;height:14px;background:#fcb97a;"></div>
<div style="position:absolute;left:582px;top:479px;width:58px;height:14px;background:#fdbe7b;"></div>
<div style="position:absolute;left:639px;top:479px;width:58px;height:14px;background:#fdbd7b;"></div>
<div style="position:absolute;left:696px;top:479px;width:58px;height:14px;background:#fdbe7b;"></div>
<div style="position:absolute;left:753px;top:479px;width:70px;height:14px;background:#fdbe7b;"></div>
<div style="position:absolute;left:822px;top:479px;width:70px;height:14px;background:#fdbf7c;"></div>
<div style="position:absolute;left:891px;top:479px;width:63px;height:14px;background:#fdbe7b;"></div>
<div style="position:absolute;left:25px;top:493px;width:986px;height:1px;background:#e2efda;"></div>
<div style="position:absolute;left:25px;top:494px;width:986px;height:14px;background:#fff;"></div>
<div style="position:absolute;left:212px;top:494px;width:86px;height:14px;background:#f86c6c;"></div>
<div style="position:absolute;left:297px;top:494px;width:58px;height:14px;background:#f86e6c;"></div>
<div style="position:absolute;left:354px;top:494px;width:58px;height:14px;background:#f9736d;"></div>
<div style="position:absolute;left:411px;top:494px;width:58px;height:14px;background:#f86e6c;"></div>
<div style="position:absolute;left:468px;top:494px;width:58px;height:14px;background:#f86c6c;"></div>
<div style="position:absolute;left:525px;top:494px;width:58px;height:14px;background:#f86a6b;"></div>
<div style="position:absolute;left:582px;top:494px;width:58px;height:14px;background:#f86c6c;"></div>
<div style="position:absolute;left:639px;top:494px;width:58px;height:14px;background:#f8726d;"></div>
<div style="position:absolute;left:696px;top:494px;width:58px;height:14px;background:#f86a6b;"></div>
<div style="position:absolute;left:753px;top:494px;width:70px;height:14px;background:#f86a6b;"></div>
<div style="position:absolute;left:822px;top:494px;width:70px;height:14px;background:#f8696b;"></div>
<div style="position:absolute;left:891px;top:494px;width:63px;height:14px;background:#f86b6b;"></div>
<div style="position:absolute;left:25px;top:508px;width:986px;height:1px;background:#e2efda;"></div>
<div style="position:absolute;left:25px;top:509px;width:986px;height:14px;background:#fff;"></div>
<div style="position:absolute;left:212px;top:509px;width:86px;height:14px;background:#ffe483;"></div>
<div style="position:absolute;left:297px;top:509px;width:58px;height:14px;background:#ffe583;"></div>
<div style="position:absolute;left:354px;top:509px;width:58px;height:14px;background:#ffe583;"></div>
<div style="position:absolute;left:411px;top:509px;width:58px;height:14px;background:#ffe583;"></div>
<div style="position:absolute;left:468px;top:509px;width:58px;height:14px;background:#ffe683;"></div>
<div style="position:absolute;left:525px;top:509px;width:58px;height:14px;background:#ffe683;"></div>
<div style="position:absolute;left:582px;top:509px;width:58px;height:14px;background:#ffe583;"></div>
<div style="position:absolute;left:639px;top:509px;width:58px;height:14px;background:#ffe683;"></div>
<div style="position:absolute;left:696px;top:509px;width:58px;height:14px;background:#ffe583;"></div>
<div style="position:absolute;left:753px;top:509px;width:70px;height:14px;background:#ffe583;"></div>
<div style="position:absolute;left:822px;top:509px;width:70px;height:14px;background:#ffe683;"></div>
<div style="position:absolute;left:891px;top:509px;width:63px;height:14px;background:#ffe483;"></div>
<div style="position:absolute;left:25px;top:523px;width:986px;height:1px;background:#e2efda;"></div>
<div style="position:absolute;left:25px;top:524px;width:986px;height:14px;background:#fff;"></div>
<div style="position:absolute;left:212px;top:524px;width:86px;height:14px;background:#ffeb84;"></div>
<div style="position:absolute;left:297px;top:524px;width:58px;height:14px;background:#ede683;"></div>
<div style="position:absolute;left:354px;top:524px;width:58px;height:14px;background:#ffeb84;"></div>
<div style="position:absolute;left:411px;top:524px;width:58px;height:14px;background:#ffeb84;"></div>
<div style="position:absolute;left:468px;top:524px;width:58px;height:14px;background:#ffea84;"></div>
<div style="position:absolute;left:525px;top:524px;width:58px;height:14px;background:#ede683;"></div>
<div style="position:absolute;left:582px;top:524px;width:58px;height:14px;background:#ede683;"></div>
<div style="position:absolute;left:639px;top:524px;width:58px;height:14px;background:#ede683;"></div>
<div style="position:absolute;left:696px;top:524px;width:58px;height:14px;background:#ffeb84;"></div>
<div style="position:absolute;left:753px;top:524px;width:70px;height:14px;background:#ffea84;"></div>
<div style="position:absolute;left:822px;top:524px;width:70px;height:14px;background:#ffeb84;"></div>
<div style="position:absolute;left:891px;top:524px;width:63px;height:14px;background:#ede683;"></div>
<div style="position:absolute;left:25px;top:538px;width:986px;height:1px;background:#e2efda;"></div>
<div style="position:absolute;left:25px;top:539px;width:986px;height:14px;background:#fff;"></div>
<div style="position:absolute;left:212px;top:539px;width:86px;height:14px;background:#ffeb84;"></div>
<div style="position:absolute;left:297px;top:539px;width:58px;height:14px;background:#ede683;"></div>
<div style="position:absolute;left:354px;top:539px;width:58px;height:14px;background:#ffeb84;"></div>
<div style="position:absolute;left:411px;top:539px;width:58px;height:14px;background:#ffeb84;"></div>
<div style="position:absolute;left:468px;top:539px;width:58px;height:14px;background:#ffea84;"></div>
<div style="position:absolute;left:525px;top:539px;width:58px;height:14px;background:#ede683;"></div>
<div style="position:absolute;left:582px;top:539px;width:58px;height:14px;background:#ede683;"></div>
<div style="position:absolute;left:639px;top:539px;width:58px;height:14px;background:#ede683;"></div>
<div style="position:absolute;left:696px;top:539px;width:58px;height:14px;background:#ffeb84;"></div>
<div style="position:absolute;left:753px;top:539px;width:70px;height:14px;background:#ffea84;"></div>
<div style="position:absolute;left:822px;top:539px;width:70px;height:14px;background:#ffeb84;"></div>
<div style="position:absolute;left:891px;top:539px;width:63px;height:14px;background:#ede683;"></div>
<div style="position:absolute;left:25px;top:553px;width:986px;height:1px;background:#e2efda;"></div>
<div style="position:absolute;left:25px;top:554px;width:986px;height:14px;background:#fff;"></div>
<div style="position:absolute;left:212px;top:554px;width:86px;height:14px;background:#7dc67d;"></div>
<div style="position:absolute;left:297px;top:554px;width:58px;height:14px;background:#82c77d;"></div>
<div style="position:absolute;left:354px;top:554px;width:58px;height:14px;background:#7cc57c;"></div>
<div style="position:absolute;left:411px;top:554px;width:58px;height:14px;background:#80c77d;"></div>
<div style="position:absolute;left:468px;top:554px;width:58px;height:14px;background:#82c77d;"></div>
<div style="position:absolute;left:525px;top:554px;width:58px;height:14px;background:#84c77d;"></div>
<div style="position:absolute;left:582px;top:554px;width:58px;height:14px;background:#7bc57c;"></div>
<div style="position:absolute;left:639px;top:554px;width:58px;height:14px;background:#82c77d;"></div>
<div style="position:absolute;left:696px;top:554px;width:58px;height:14px;background:#7ec67d;"></div>
<div style="position:absolute;left:753px;top:554px;width:70px;height:14px;background:#7fc67d;"></div>
<div style="position:absolute;left:822px;top:554px;width:70px;height:14px;background:#84c87d;"></div>
<div style="position:absolute;left:891px;top:554px;width:63px;height:14px;background:#7cc57c;"></div>
<div style="position:absolute;left:25px;top:568px;width:986px;height:1px;background:#e2efda;"></div>
<div style="position:absolute;left:25px;top:569px;width:986px;height:14px;background:#fff;"></div>
<div style="position:absolute;left:212px;top:569px;width:86px;height:14px;background:#fdce7f;"></div>
<div style="position:absolute;left:297px;top:569px;width:58px;height:14px;background:#fed07f;"></div>
<div style="position:absolute;left:354px;top:569px;width:58px;height:14px;background:#fed07f;"></div>
<div style="position:absolute;left:411px;top:569px;width:58px;height:14px;background:#fecf7f;"></div>
<div style="position:absolute;left:468px;top:569px;width:58px;height:14px;background:#fed07f;"></div>
<div style="position:absolute;left:525px;top:569px;width:58px;height:14px;background:#fdcf7f;"></div>
<div style="position:absolute;left:582px;top:569px;width:58px;height:14px;background:#fed07f;"></div>
<div style="position:absolute;left:639px;top:569px;width:58px;height:14px;background:#fdcf7f;"></div>
<div style="position:absolute;left:696px;top:569px;width:58px;height:14px;background:#fed07f;"></div>
<div style="position:absolute;left:753px;top:569px;width:70px;height:14px;background:#fed07f;"></div>
<div style="position:absolute;left:822px;top:569px;width:70px;height:14px;background:#fed07f;"></div>
<div style="position:absolute;left:891px;top:569px;width:63px;height:14px;background:#fdce7e;"></div>
<div style="position:absolute;left:25px;top:583px;width:986px;height:1px;background:#e2efda;"></div>
<div style="position:absolute;left:25px;top:584px;width:986px;height:14px;background:#fff;"></div>
<div style="position:absolute;left:212px;top:584px;width:86px;height:14px;background:#b8d680;"></div>
<div style="position:absolute;left:297px;top:584px;width:58px;height:14px;background:#b2d580;"></div>
<div style="position:absolute;left:354px;top:584px;width:58px;height:14px;background:#acd37f;"></div>
<div style="position:absolute;left:411px;top:584px;width:58px;height:14px;background:#b0d47f;"></div>
<div style="position:absolute;left:468px;top:584px;width:58px;height:14px;background:#b3d580;"></div>
<div style="position:absolute;left:525px;top:584px;width:58px;height:14px;background:#c9db81;"></div>
<div style="position:absolute;left:582px;top:584px;width:58px;height:14px;background:#bcd880;"></div>
<div style="position:absolute;left:639px;top:584px;width:58px;height:14px;background:#b3d580;"></div>
<div style="position:absolute;left:696px;top:584px;width:58px;height:14px;background:#b2d580;"></div>
<div style="position:absolute;left:753px;top:584px;width:70px;height:14px;background:#aad27f;"></div>
<div style="position:absolute;left:822px;top:584px;width:70px;height:14px;background:#aad37f;"></div>
<div style="position:absolute;left:891px;top:584px;width:63px;height:14px;background:#aed37f;"></div>
<div style="position:absolute;left:25px;top:598px;width:986px;height:1px;background:#e2efda;"></div>
<div style="position:absolute;left:25px;top:599px;width:986px;height:14px;background:#fff;"></div>
<div style="position:absolute;left:212px;top:599px;width:86px;height:14px;background:#f5e883;"></div>
<div style="position:absolute;left:297px;top:599px;width:58px;height:14px;background:#f6e883;"></div>
<div style="position:absolute;left:354px;top:599px;width:58px;height:14px;background:#f5e883;"></div>
<div style="position:absolute;left:411px;top:599px;width:58px;height:14px;background:#f8e984;"></div>
<div style="position:absolute;left:468px;top:599px;width:58px;height:14px;background:#f9e984;"></div>
<div style="position:absolute;left:525px;top:599px;width:58px;height:14px;background:#f9e984;"></div>
<div style="position:absolute;left:582px;top:599px;width:58px;height:14px;background:#f4e883;"></div>
<div style="position:absolute;left:639px;top:599px;width:58px;height:14px;background:#f8e984;"></div>
<div style="position:absolute;left:696px;top:599px;width:58px;height:14px;background:#f7e984;"></div>
<div style="position:absolute;left:753px;top:599px;width:70px;height:14px;background:#f5e883;"></div>
<div style="position:absolute;left:822px;top:599px;width:70px;height:14px;background:#f8e984;"></div>
<div style="position:absolute;left:891px;top:599px;width:63px;height:14px;background:#f9e984;"></div>
<div style="position:absolute;left:25px;top:613px;width:986px;height:1px;background:#e2efda;"></div>
<div style="position:absolute;left:25px;top:612px;width:986px;height:1px;background:#548235;"></div>
<div style="position:absolute;left:25px;top:613px;width:986px;height:1px;#fff"></div>
<div style="position:absolute;left:25px;top:613px;width:986px;height:1px;background:#f4f8f0;"></div>
<div style="position:absolute;left:25px;top:614px;width:986px;height:1px;background:#548235;"></div>
<div style="position:absolute;left:25px;top:615px;width:986px;height:13px;background:#fff;"></div>
<div style="position:absolute;left:27.3px;top:257px;font-size:9.5px;line-height:9.5px;color:#fff;font-weight:bold;white-space:nowrap;letter-spacing:0.1px;">Sum of Amount</div>
<div style="position:absolute;left:27.3px;top:272px;font-size:9.5px;line-height:9.5px;color:#fff;font-weight:normal;white-space:nowrap;letter-spacing:0.5px;">Row Labels</div>
<div style="position:absolute;left:215px;top:257px;font-size:9.5px;line-height:9.5px;color:#fff;font-weight:bold;white-space:nowrap;letter-spacing:0.5px;">Column Labels</div>
<div style="position:absolute;left:283px;top:254px;width:14px;height:14px;background:#f2f2f2;border:1px solid #c8c8c8;"></div>
<svg style="left:0;top:0" width="300" height="300"><path d="M286 259 h6 l-3 4z" fill="#444"/></svg>
<div style="position:absolute;right:1628.05px;top:272px;font-size:9.5px;line-height:9.5px;color:#fff;font-weight:normal;white-space:nowrap;text-align:right;letter-spacing:0.85px;">1/31/2018</div>
<div style="position:absolute;right:1571.05px;top:272px;font-size:9.5px;line-height:9.5px;color:#fff;font-weight:normal;white-space:nowrap;text-align:right;letter-spacing:0.85px;">2/28/2018</div>
<div style="position:absolute;right:1514.05px;top:272px;font-size:9.5px;line-height:9.5px;color:#fff;font-weight:normal;white-space:nowrap;text-align:right;letter-spacing:0.85px;">3/31/2018</div>
<div style="position:absolute;right:1457.05px;top:272px;font-size:9.5px;line-height:9.5px;color:#fff;font-weight:normal;white-space:nowrap;text-align:right;letter-spacing:0.85px;">4/30/2018</div>
<div style="position:absolute;right:1400.05px;top:272px;font-size:9.5px;line-height:9.5px;color:#fff;font-weight:normal;white-space:nowrap;text-align:right;letter-spacing:0.85px;">5/31/2018</div>
<div style="position:absolute;right:1343.05px;top:272px;font-size:9.5px;line-height:9.5px;color:#fff;font-weight:normal;white-space:nowrap;text-align:right;letter-spacing:0.85px;">6/30/2018</div>
<div style="position:absolute;right:1286.05px;top:272px;font-size:9.5px;line-height:9.5px;color:#fff;font-weight:normal;white-space:nowrap;text-align:right;letter-spacing:0.85px;">7/31/2018</div>
<div style="position:absolute;right:1229.05px;top:272px;font-size:9.5px;line-height:9.5px;color:#fff;font-weight:normal;white-space:nowrap;text-align:right;letter-spacing:0.85px;">8/31/2018</div>
<div style="position:absolute;right:1172.05px;top:272px;font-size:9.5px;line-height:9.5px;color:#fff;font-weight:normal;white-space:nowrap;text-align:right;letter-spacing:0.85px;">9/30/2018</div>
<div style="position:absolute;right:1103.05px;top:272px;font-size:9.5px;line-height:9.5px;color:#fff;font-weight:normal;white-space:nowrap;text-align:right;letter-spacing:0.85px;">10/31/2018</div>
<div style="position:absolute;right:1034.05px;top:272px;font-size:9.5px;line-height:9.5px;color:#fff;font-weight:normal;white-space:nowrap;text-align:right;letter-spacing:0.85px;">11/30/2018</div>
<div style="position:absolute;right:972.05px;top:272px;font-size:9.5px;line-height:9.5px;color:#fff;font-weight:normal;white-space:nowrap;text-align:right;letter-spacing:0.85px;">12/31/2018</div>
<div style="position:absolute;right:912.91px;top:272px;font-size:9.5px;line-height:9.5px;color:#fff;font-weight:normal;white-space:nowrap;text-align:right;letter-spacing:0.49px;">Grand Total</div>
<div style="position:absolute;left:27.5px;top:287px;font-size:9.5px;line-height:9.5px;color:#000;font-weight:normal;white-space:nowrap;letter-spacing:0.45px;-webkit-text-stroke:0.12px #000;">Advertising</div>
<div style="position:absolute;right:1628.83px;top:287px;font-size:9.5px;line-height:9.5px;color:#000;font-weight:normal;white-space:nowrap;text-align:right;letter-spacing:0.47px;-webkit-text-stroke:0.12px #000;">11.66%</div>
<div style="position:absolute;right:1571.83px;top:287px;font-size:9.5px;line-height:9.5px;color:#000;font-weight:normal;white-space:nowrap;text-align:right;letter-spacing:0.47px;-webkit-text-stroke:0.12px #000;">11.53%</div>
<div style="position:absolute;right:1514.83px;top:287px;font-size:9.5px;line-height:9.5px;color:#000;font-weight:normal;white-space:nowrap;text-align:right;letter-spacing:0.47px;-webkit-text-stroke:0.12px #000;">11.43%</div>
<div style="position:absolute;right:1457.83px;top:287px;font-size:9.5px;line-height:9.5px;color:#000;font-weight:normal;white-space:nowrap;text-align:right;letter-spacing:0.47px;-webkit-text-stroke:0.12px #000;">12.32%</div>
<div style="position:absolute;right:1400.83px;top:287px;font-size:9.5px;line-height:9.5px;color:#000;font-weight:normal;white-space:nowrap;text-align:right;letter-spacing:0.47px;-webkit-text-stroke:0.12px #000;">11.43%</div>
<div style="position:absolute;right:1343.83px;top:287px;font-size:9.5px;line-height:9.5px;color:#000;font-weight:normal;white-space:nowrap;text-align:right;letter-spacing:0.47px;-webkit-text-stroke:0.12px #000;">11.11%</div>
<div style="position:absolute;right:1286.83px;top:287px;font-size:9.5px;line-height:9.5px;color:#000;font-weight:normal;white-space:nowrap;text-align:right;letter-spacing:0.47px;-webkit-text-stroke:0.12px #000;">11.17%</div>
<div style="position:absolute;right:1229.83px;top:287px;font-size:9.5px;line-height:9.5px;color:#000;font-weight:normal;white-space:nowrap;text-align:right;letter-spacing:0.47px;-webkit-text-stroke:0.12px #000;">10.72%</div>
<div style="position:absolute;right:1172.83px;top:287px;font-size:9.5px;line-height:9.5px;color:#000;font-weight:normal;white-space:nowrap;text-align:right;letter-spacing:0.47px;-webkit-text-stroke:0.12px #000;">10.79%</div>
<div style="position:absolute;right:1103.83px;top:287px;font-size:9.5px;line-height:9.5px;color:#000;font-weight:normal;white-space:nowrap;text-align:right;letter-spacing:0.47px;-webkit-text-stroke:0.12px #000;">11.24%</div>
<div style="position:absolute;right:1034.83px;top:287px;font-size:9.5px;line-height:9.5px;color:#000;font-weight:normal;white-space:nowrap;text-align:right;letter-spacing:0.47px;-webkit-text-stroke:0.12px #000;">10.97%</div>
<div style="position:absolute;right:972.83px;top:287px;font-size:9.5px;line-height:9.5px;color:#000;font-weight:normal;white-space:nowrap;text-align:right;letter-spacing:0.47px;-webkit-text-stroke:0.12px #000;">11.60%</div>
<div style="position:absolute;right:913.55px;top:287px;font-size:9.5px;line-height:9.5px;color:#000;font-weight:normal;white-space:nowrap;text-align:right;letter-spacing:0.85px;-webkit-text-stroke:0.12px #000;">1.3597</div>
<div style="position:absolute;left:27.5px;top:302px;font-size:9.5px;line-height:9.5px;color:#000;font-weight:normal;white-space:nowrap;letter-spacing:0.45px;-webkit-text-stroke:0.12px #000;">Bank Loan</div>
<div style="position:absolute;right:1628.83px;top:302px;font-size:9.5px;line-height:9.5px;color:#000;font-weight:normal;white-space:nowrap;text-align:right;letter-spacing:0.47px;-webkit-text-stroke:0.12px #000;">29.81%</div>
<div style="position:absolute;right:1571.83px;top:302px;font-size:9.5px;line-height:9.5px;color:#000;font-weight:normal;white-space:nowrap;text-align:right;letter-spacing:0.47px;-webkit-text-stroke:0.12px #000;">27.84%</div>
<div style="position:absolute;right:1514.83px;top:302px;font-size:9.5px;line-height:9.5px;color:#000;font-weight:normal;white-space:nowrap;text-align:right;letter-spacing:0.47px;-webkit-text-stroke:0.12px #000;">27.42%</div>
<div style="position:absolute;right:1457.83px;top:302px;font-size:9.5px;line-height:9.5px;color:#000;font-weight:normal;white-space:nowrap;text-align:right;letter-spacing:0.47px;-webkit-text-stroke:0.12px #000;">27.35%</div>
<div style="position:absolute;right:1400.83px;top:302px;font-size:9.5px;line-height:9.5px;color:#000;font-weight:normal;white-space:nowrap;text-align:right;letter-spacing:0.47px;-webkit-text-stroke:0.12px #000;">30.17%</div>
<div style="position:absolute;right:1343.83px;top:302px;font-size:9.5px;line-height:9.5px;color:#000;font-weight:normal;white-space:nowrap;text-align:right;letter-spacing:0.47px;-webkit-text-stroke:0.12px #000;">28.06%</div>
<div style="position:absolute;right:1286.83px;top:302px;font-size:9.5px;line-height:9.5px;color:#000;font-weight:normal;white-space:nowrap;text-align:right;letter-spacing:0.47px;-webkit-text-stroke:0.12px #000;">27.86%</div>
<div style="position:absolute;right:1229.83px;top:302px;font-size:9.5px;line-height:9.5px;color:#000;font-weight:normal;white-space:nowrap;text-align:right;letter-spacing:0.47px;-webkit-text-stroke:0.12px #000;">27.89%</div>
<div style="position:absolute;right:1172.83px;top:302px;font-size:9.5px;line-height:9.5px;color:#000;font-weight:normal;white-space:nowrap;text-align:right;letter-spacing:0.47px;-webkit-text-stroke:0.12px #000;">29.01%</div>
<div style="position:absolute;right:1103.83px;top:302px;font-size:9.5px;line-height:9.5px;color:#000;font-weight:normal;white-space:nowrap;text-align:right;letter-spacing:0.47px;-webkit-text-stroke:0.12px #000;">29.40%</div>
<div style="position:absolute;right:1034.83px;top:302px;font-size:9.5px;line-height:9.5px;color:#000;font-weight:normal;white-space:nowrap;text-align:right;letter-spacing:0.47px;-webkit-text-stroke:0.12px #000;">26.07%</div>
<div style="position:absolute;right:972.83px;top:302px;font-size:9.5px;line-height:9.5px;color:#000;font-weight:normal;white-space:nowrap;text-align:right;letter-spacing:0.47px;-webkit-text-stroke:0.12px #000;">25.96%</div>
<div style="position:absolute;right:913.55px;top:302px;font-size:9.5px;line-height:9.5px;color:#000;font-weight:normal;white-space:nowrap;text-align:right;letter-spacing:0.85px;-webkit-text-stroke:0.12px #000;">3.3684</div>
<div style="position:absolute;left:27.5px;top:317px;font-size:9.5px;line-height:9.5px;color:#000;font-weight:normal;white-space:nowrap;letter-spacing:0.45px;-webkit-text-stroke:0.12px #000;">Bank Loan Payment</div>
<div style="position:absolute;right:1628.83px;top:317px;font-size:9.5px;line-height:9.5px;color:#000;font-weight:normal;white-space:nowrap;text-align:right;letter-spacing:0.47px;-webkit-text-stroke:0.12px #000;">29.81%</div>
<div style="position:absolute;right:1571.83px;top:317px;font-size:9.5px;line-height:9.5px;color:#000;font-weight:normal;white-space:nowrap;text-align:right;letter-spacing:0.47px;-webkit-text-stroke:0.12px #000;">27.84%</div>
<div style="position:absolute;right:1514.83px;top:317px;font-size:9.5px;line-height:9.5px;color:#000;font-weight:normal;white-space:nowrap;text-align:right;letter-spacing:0.47px;-webkit-text-stroke:0.12px #000;">27.42%</div>
<div style="position:absolute;right:1457.83px;top:317px;font-size:9.5px;line-height:9.5px;color:#000;font-weight:normal;white-space:nowrap;text-align:right;letter-spacing:0.47px;-webkit-text-stroke:0.12px #000;">27.35%</div>
<div style="position:absolute;right:1400.83px;top:317px;font-size:9.5px;line-height:9.5px;color:#000;font-weight:normal;white-space:nowrap;text-align:right;letter-spacing:0.47px;-webkit-text-stroke:0.12px #000;">30.17%</div>
<div style="position:absolute;right:1343.83px;top:317px;font-size:9.5px;line-height:9.5px;color:#000;font-weight:normal;white-space:nowrap;text-align:right;letter-spacing:0.47px;-webkit-text-stroke:0.12px #000;">28.06%</div>
<div style="position:absolute;right:1286.83px;top:317px;font-size:9.5px;line-height:9.5px;color:#000;font-weight:normal;white-space:nowrap;text-align:right;letter-spacing:0.47px;-webkit-text-stroke:0.12px #000;">27.86%</div>
<div style="position:absolute;right:1229.83px;top:317px;font-size:9.5px;line-height:9.5px;color:#000;font-weight:normal;white-space:nowrap;text-align:right;letter-spacing:0.47px;-webkit-text-stroke:0.12px #000;">27.89%</div>
<div style="position:absolute;right:1172.83px;top:317px;font-size:9.5px;line-height:9.5px;color:#000;font-weight:normal;white-space:nowrap;text-align:right;letter-spacing:0.47px;-webkit-text-stroke:0.12px #000;">29.01%</div>
<div style="position:absolute;right:1103.83px;top:317px;font-size:9.5px;line-height:9.5px;color:#000;font-weight:normal;white-space:nowrap;text-align:right;letter-spacing:0.47px;-webkit-text-stroke:0.12px #000;">29.40%</div>
<div style="position:absolute;right:1034.83px;top:317px;font-size:9.5px;line-height:9.5px;color:#000;font-weight:normal;white-space:nowrap;text-align:right;letter-spacing:0.47px;-webkit-text-stroke:0.12px #000;">26.07%</div>
<div style="position:absolute;right:972.83px;top:317px;font-size:9.5px;line-height:9.5px;color:#000;font-weight:normal;white-space:nowrap;text-align:right;letter-spacing:0.47px;-webkit-text-stroke:0.12px #000;">25.96%</div>
<div style="position:absolute;right:913.55px;top:317px;font-size:9.5px;line-height:9.5px;color:#000;font-weight:normal;white-space:nowrap;text-align:right;letter-spacing:0.85px;-webkit-text-stroke:0.12px #000;">3.3684</div>
<div style="position:absolute;left:27.5px;top:332px;font-size:9.5px;line-height:9.5px;color:#000;font-weight:normal;white-space:nowrap;letter-spacing:0.45px;-webkit-text-stroke:0.12px #000;">Bank Loan Outstanding</div>
<div style="position:absolute;right:1628.83px;top:332px;font-size:9.5px;line-height:9.5px;color:#000;font-weight:normal;white-space:nowrap;text-align:right;letter-spacing:0.47px;-webkit-text-stroke:0.12px #000;">22.60%</div>
<div style="position:absolute;right:1571.83px;top:332px;font-size:9.5px;line-height:9.5px;color:#000;font-weight:normal;white-space:nowrap;text-align:right;letter-spacing:0.47px;-webkit-text-stroke:0.12px #000;">23.83%</div>
<div style="position:absolute;right:1514.83px;top:332px;font-size:9.5px;line-height:9.5px;color:#000;font-weight:normal;white-space:nowrap;text-align:right;letter-spacing:0.47px;-webkit-text-stroke:0.12px #000;">24.01%</div>
<div style="position:absolute;right:1457.83px;top:332px;font-size:9.5px;line-height:9.5px;color:#000;font-weight:normal;white-space:nowrap;text-align:right;letter-spacing:0.47px;-webkit-text-stroke:0.12px #000;">23.15%</div>
<div style="position:absolute;right:1400.83px;top:332px;font-size:9.5px;line-height:9.5px;color:#000;font-weight:normal;white-space:nowrap;text-align:right;letter-spacing:0.47px;-webkit-text-stroke:0.12px #000;">23.87%</div>
<div style="position:absolute;right:1343.83px;top:332px;font-size:9.5px;line-height:9.5px;color:#000;font-weight:normal;white-space:nowrap;text-align:right;letter-spacing:0.47px;-webkit-text-stroke:0.12px #000;">23.61%</div>
<div style="position:absolute;right:1286.83px;top:332px;font-size:9.5px;line-height:9.5px;color:#000;font-weight:normal;white-space:nowrap;text-align:right;letter-spacing:0.47px;-webkit-text-stroke:0.12px #000;">23.09%</div>
<div style="position:absolute;right:1229.83px;top:332px;font-size:9.5px;line-height:9.5px;color:#000;font-weight:normal;white-space:nowrap;text-align:right;letter-spacing:0.47px;-webkit-text-stroke:0.12px #000;">22.54%</div>
<div style="position:absolute;right:1172.83px;top:332px;font-size:9.5px;line-height:9.5px;color:#000;font-weight:normal;white-space:nowrap;text-align:right;letter-spacing:0.47px;-webkit-text-stroke:0.12px #000;">22.72%</div>
<div style="position:absolute;right:1103.83px;top:332px;font-size:9.5px;line-height:9.5px;color:#000;font-weight:normal;white-space:nowrap;text-align:right;letter-spacing:0.47px;-webkit-text-stroke:0.12px #000;">22.88%</div>
<div style="position:absolute;right:1034.83px;top:332px;font-size:9.5px;line-height:9.5px;color:#000;font-weight:normal;white-space:nowrap;text-align:right;letter-spacing:0.47px;-webkit-text-stroke:0.12px #000;">23.65%</div>
<div style="position:absolute;right:972.83px;top:332px;font-size:9.5px;line-height:9.5px;color:#000;font-weight:normal;white-space:nowrap;text-align:right;letter-spacing:0.47px;-webkit-text-stroke:0.12px #000;">22.60%</div>
<div style="position:absolute;right:913.55px;top:332px;font-size:9.5px;line-height:9.5px;color:#000;font-weight:normal;white-space:nowrap;text-align:right;letter-spacing:0.85px;-webkit-text-stroke:0.12px #000;">2.7855</div>
<div style="position:absolute;left:27.5px;top:347px;font-size:9.5px;line-height:9.5px;color:#000;font-weight:normal;white-space:nowrap;letter-spacing:0.002px;-webkit-text-stroke:0.12px #000;">Cash</div>
<div style="position:absolute;right:1628.83px;top:347px;font-size:9.5px;line-height:9.5px;color:#000;font-weight:normal;white-space:nowrap;text-align:right;letter-spacing:0.47px;-webkit-text-stroke:0.12px #000;">18.47%</div>
<div style="position:absolute;right:1571.83px;top:347px;font-size:9.5px;line-height:9.5px;color:#000;font-weight:normal;white-space:nowrap;text-align:right;letter-spacing:0.47px;-webkit-text-stroke:0.12px #000;">16.24%</div>
<div style="position:absolute;right:1514.83px;top:347px;font-size:9.5px;line-height:9.5px;color:#000;font-weight:normal;white-space:nowrap;text-align:right;letter-spacing:0.47px;-webkit-text-stroke:0.12px #000;">17.77%</div>
<div style="position:absolute;right:1457.83px;top:347px;font-size:9.5px;line-height:9.5px;color:#000;font-weight:normal;white-space:nowrap;text-align:right;letter-spacing:0.47px;-webkit-text-stroke:0.12px #000;">18.66%</div>
<div style="position:absolute;right:1400.83px;top:347px;font-size:9.5px;line-height:9.5px;color:#000;font-weight:normal;white-space:nowrap;text-align:right;letter-spacing:0.47px;-webkit-text-stroke:0.12px #000;">16.66%</div>
<div style="position:absolute;right:1343.83px;top:347px;font-size:9.5px;line-height:9.5px;color:#000;font-weight:normal;white-space:nowrap;text-align:right;letter-spacing:0.47px;-webkit-text-stroke:0.12px #000;">17.87%</div>
<div style="position:absolute;right:1286.83px;top:347px;font-size:9.5px;line-height:9.5px;color:#000;font-weight:normal;white-space:nowrap;text-align:right;letter-spacing:0.47px;-webkit-text-stroke:0.12px #000;">18.38%</div>
<div style="position:absolute;right:1229.83px;top:347px;font-size:9.5px;line-height:9.5px;color:#000;font-weight:normal;white-space:nowrap;text-align:right;letter-spacing:0.47px;-webkit-text-stroke:0.12px #000;">17.59%</div>
<div style="position:absolute;right:1172.83px;top:347px;font-size:9.5px;line-height:9.5px;color:#000;font-weight:normal;white-space:nowrap;text-align:right;letter-spacing:0.47px;-webkit-text-stroke:0.12px #000;">17.88%</div>
<div style="position:absolute;right:1103.83px;top:347px;font-size:9.5px;line-height:9.5px;color:#000;font-weight:normal;white-space:nowrap;text-align:right;letter-spacing:0.47px;-webkit-text-stroke:0.12px #000;">17.82%</div>
<div style="position:absolute;right:1034.83px;top:347px;font-size:9.5px;line-height:9.5px;color:#000;font-weight:normal;white-space:nowrap;text-align:right;letter-spacing:0.47px;-webkit-text-stroke:0.12px #000;">17.00%</div>
<div style="position:absolute;right:972.83px;top:347px;font-size:9.5px;line-height:9.5px;color:#000;font-weight:normal;white-space:nowrap;text-align:right;letter-spacing:0.47px;-webkit-text-stroke:0.12px #000;">17.92%</div>
<div style="position:absolute;right:913.55px;top:347px;font-size:9.5px;line-height:9.5px;color:#000;font-weight:normal;white-space:nowrap;text-align:right;letter-spacing:0.85px;-webkit-text-stroke:0.12px #000;">2.1226</div>
<div style="position:absolute;left:27.5px;top:362px;font-size:9.5px;line-height:9.5px;color:#000;font-weight:normal;white-space:nowrap;letter-spacing:0.529px;-webkit-text-stroke:0.12px #000;">Depreciation Expense</div>
<div style="position:absolute;right:1628.83px;top:362px;font-size:9.5px;line-height:9.5px;color:#000;font-weight:normal;white-space:nowrap;text-align:right;letter-spacing:0.47px;-webkit-text-stroke:0.12px #000;">22.92%</div>
<div style="position:absolute;right:1571.83px;top:362px;font-size:9.5px;line-height:9.5px;color:#000;font-weight:normal;white-space:nowrap;text-align:right;letter-spacing:0.47px;-webkit-text-stroke:0.12px #000;">20.14%</div>
<div style="position:absolute;right:1514.83px;top:362px;font-size:9.5px;line-height:9.5px;color:#000;font-weight:normal;white-space:nowrap;text-align:right;letter-spacing:0.47px;-webkit-text-stroke:0.12px #000;">20.14%</div>
<div style="position:absolute;right:1457.83px;top:362px;font-size:9.5px;line-height:9.5px;color:#000;font-weight:normal;white-space:nowrap;text-align:right;letter-spacing:0.47px;-webkit-text-stroke:0.12px #000;">22.28%</div>
<div style="position:absolute;right:1400.83px;top:362px;font-size:9.5px;line-height:9.5px;color:#000;font-weight:normal;white-space:nowrap;text-align:right;letter-spacing:0.47px;-webkit-text-stroke:0.12px #000;">26.94%</div>
<div style="position:absolute;right:1343.83px;top:362px;font-size:9.5px;line-height:9.5px;color:#000;font-weight:normal;white-space:nowrap;text-align:right;letter-spacing:0.47px;-webkit-text-stroke:0.12px #000;">22.28%</div>
<div style="position:absolute;right:1286.83px;top:362px;font-size:9.5px;line-height:9.5px;color:#000;font-weight:normal;white-space:nowrap;text-align:right;letter-spacing:0.47px;-webkit-text-stroke:0.12px #000;">22.28%</div>
<div style="position:absolute;right:1229.83px;top:362px;font-size:9.5px;line-height:9.5px;color:#000;font-weight:normal;white-space:nowrap;text-align:right;letter-spacing:0.47px;-webkit-text-stroke:0.12px #000;">22.28%</div>
<div style="position:absolute;right:1172.83px;top:362px;font-size:9.5px;line-height:9.5px;color:#000;font-weight:normal;white-space:nowrap;text-align:right;letter-spacing:0.47px;-webkit-text-stroke:0.12px #000;">20.14%</div>
<div style="position:absolute;right:1103.83px;top:362px;font-size:9.5px;line-height:9.5px;color:#000;font-weight:normal;white-space:nowrap;text-align:right;letter-spacing:0.47px;-webkit-text-stroke:0.12px #000;">25.07%</div>
<div style="position:absolute;right:1034.83px;top:362px;font-size:9.5px;line-height:9.5px;color:#000;font-weight:normal;white-space:nowrap;text-align:right;letter-spacing:0.47px;-webkit-text-stroke:0.12px #000;">20.14%</div>
<div style="position:absolute;right:972.83px;top:362px;font-size:9.5px;line-height:9.5px;color:#000;font-weight:normal;white-space:nowrap;text-align:right;letter-spacing:0.47px;-webkit-text-stroke:0.12px #000;">22.28%</div>
<div style="position:absolute;right:913.55px;top:362px;font-size:9.5px;line-height:9.5px;color:#000;font-weight:normal;white-space:nowrap;text-align:right;letter-spacing:0.85px;-webkit-text-stroke:0.12px #000;">2.6689</div>
<div style="position:absolute;left:27.5px;top:377px;font-size:9.5px;line-height:9.5px;color:#000;font-weight:normal;white-space:nowrap;letter-spacing:0.567px;-webkit-text-stroke:0.12px #000;">Equipment Value</div>
<div style="position:absolute;right:1628.83px;top:377px;font-size:9.5px;line-height:9.5px;color:#000;font-weight:normal;white-space:nowrap;text-align:right;letter-spacing:0.47px;-webkit-text-stroke:0.12px #000;">22.92%</div>
<div style="position:absolute;right:1571.83px;top:377px;font-size:9.5px;line-height:9.5px;color:#000;font-weight:normal;white-space:nowrap;text-align:right;letter-spacing:0.47px;-webkit-text-stroke:0.12px #000;">20.14%</div>
<div style="position:absolute;right:1514.83px;top:377px;font-size:9.5px;line-height:9.5px;color:#000;font-weight:normal;white-space:nowrap;text-align:right;letter-spacing:0.47px;-webkit-text-stroke:0.12px #000;">20.14%</div>
<div style="position:absolute;right:1457.83px;top:377px;font-size:9.5px;line-height:9.5px;color:#000;font-weight:normal;white-space:nowrap;text-align:right;letter-spacing:0.47px;-webkit-text-stroke:0.12px #000;">22.28%</div>
<div style="position:absolute;right:1400.83px;top:377px;font-size:9.5px;line-height:9.5px;color:#000;font-weight:normal;white-space:nowrap;text-align:right;letter-spacing:0.47px;-webkit-text-stroke:0.12px #000;">26.94%</div>
<div style="position:absolute;right:1343.83px;top:377px;font-size:9.5px;line-height:9.5px;color:#000;font-weight:normal;white-space:nowrap;text-align:right;letter-spacing:0.47px;-webkit-text-stroke:0.12px #000;">22.28%</div>
<div style="position:absolute;right:1286.83px;top:377px;font-size:9.5px;line-height:9.5px;color:#000;font-weight:normal;white-space:nowrap;text-align:right;letter-spacing:0.47px;-webkit-text-stroke:0.12px #000;">22.28%</div>
<div style="position:absolute;right:1229.83px;top:377px;font-size:9.5px;line-height:9.5px;color:#000;font-weight:normal;white-space:nowrap;text-align:right;letter-spacing:0.47px;-webkit-text-stroke:0.12px #000;">22.28%</div>
<div style="position:absolute;right:1172.83px;top:377px;font-size:9.5px;line-height:9.5px;color:#000;font-weight:normal;white-space:nowrap;text-align:right;letter-spacing:0.47px;-webkit-text-stroke:0.12px #000;">20.14%</div>
<div style="position:absolute;right:1103.83px;top:377px;font-size:9.5px;line-height:9.5px;color:#000;font-weight:normal;white-space:nowrap;text-align:right;letter-spacing:0.47px;-webkit-text-stroke:0.12px #000;">25.07%</div>
<div style="position:absolute;right:1034.83px;top:377px;font-size:9.5px;line-height:9.5px;color:#000;font-weight:normal;white-space:nowrap;text-align:right;letter-spacing:0.47px;-webkit-text-stroke:0.12px #000;">20.14%</div>
<div style="position:absolute;right:972.83px;top:377px;font-size:9.5px;line-height:9.5px;color:#000;font-weight:normal;white-space:nowrap;text-align:right;letter-spacing:0.47px;-webkit-text-stroke:0.12px #000;">22.28%</div>
<div style="position:absolute;right:913.55px;top:377px;font-size:9.5px;line-height:9.5px;color:#000;font-weight:normal;white-space:nowrap;text-align:right;letter-spacing:0.85px;-webkit-text-stroke:0.12px #000;">2.6689</div>
<div style="position:absolute;left:27.5px;top:392px;font-size:9.5px;line-height:9.5px;color:#000;font-weight:normal;white-space:nowrap;letter-spacing:0.276px;-webkit-text-stroke:0.12px #000;">Expenses</div>
<div style="position:absolute;right:1628.83px;top:392px;font-size:9.5px;line-height:9.5px;color:#000;font-weight:normal;white-space:nowrap;text-align:right;letter-spacing:0.47px;-webkit-text-stroke:0.12px #000;">9.83%</div>
<div style="position:absolute;right:1571.83px;top:392px;font-size:9.5px;line-height:9.5px;color:#000;font-weight:normal;white-space:nowrap;text-align:right;letter-spacing:0.47px;-webkit-text-stroke:0.12px #000;">9.83%</div>
<div style="position:absolute;right:1514.83px;top:392px;font-size:9.5px;line-height:9.5px;color:#000;font-weight:normal;white-space:nowrap;text-align:right;letter-spacing:0.47px;-webkit-text-stroke:0.12px #000;">9.83%</div>
<div style="position:absolute;right:1457.83px;top:392px;font-size:9.5px;line-height:9.5px;color:#000;font-weight:normal;white-space:nowrap;text-align:right;letter-spacing:0.47px;-webkit-text-stroke:0.12px #000;">9.83%</div>
<div style="position:absolute;right:1400.83px;top:392px;font-size:9.5px;line-height:9.5px;color:#000;font-weight:normal;white-space:nowrap;text-align:right;letter-spacing:0.47px;-webkit-text-stroke:0.12px #000;">9.92%</div>
<div style="position:absolute;right:1343.83px;top:392px;font-size:9.5px;line-height:9.5px;color:#000;font-weight:normal;white-space:nowrap;text-align:right;letter-spacing:0.47px;-webkit-text-stroke:0.12px #000;">9.83%</div>
<div style="position:absolute;right:1286.83px;top:392px;font-size:9.5px;line-height:9.5px;color:#000;font-weight:normal;white-space:nowrap;text-align:right;letter-spacing:0.47px;-webkit-text-stroke:0.12px #000;">9.83%</div>
<div style="position:absolute;right:1229.83px;top:392px;font-size:9.5px;line-height:9.5px;color:#000;font-weight:normal;white-space:nowrap;text-align:right;letter-spacing:0.47px;-webkit-text-stroke:0.12px #000;">9.89%</div>
<div style="position:absolute;right:1172.83px;top:392px;font-size:9.5px;line-height:9.5px;color:#000;font-weight:normal;white-space:nowrap;text-align:right;letter-spacing:0.47px;-webkit-text-stroke:0.12px #000;">9.83%</div>
<div style="position:absolute;right:1103.83px;top:392px;font-size:9.5px;line-height:9.5px;color:#000;font-weight:normal;white-space:nowrap;text-align:right;letter-spacing:0.47px;-webkit-text-stroke:0.12px #000;">9.83%</div>
<div style="position:absolute;right:1034.83px;top:392px;font-size:9.5px;line-height:9.5px;color:#000;font-weight:normal;white-space:nowrap;text-align:right;letter-spacing:0.47px;-webkit-text-stroke:0.12px #000;">9.83%</div>
<div style="position:absolute;right:972.83px;top:392px;font-size:9.5px;line-height:9.5px;color:#000;font-weight:normal;white-space:nowrap;text-align:right;letter-spacing:0.47px;-webkit-text-stroke:0.12px #000;">10.68%</div>
<div style="position:absolute;right:913.55px;top:392px;font-size:9.5px;line-height:9.5px;color:#000;font-weight:normal;white-space:nowrap;text-align:right;letter-spacing:0.85px;-webkit-text-stroke:0.12px #000;">1.1896</div>
<div style="position:absolute;left:27.5px;top:407px;font-size:9.5px;line-height:9.5px;color:#000;font-weight:normal;white-space:nowrap;letter-spacing:0.535px;-webkit-text-stroke:0.12px #000;">Foundation Grants</div>
<div style="position:absolute;right:1628.83px;top:407px;font-size:9.5px;line-height:9.5px;color:#000;font-weight:normal;white-space:nowrap;text-align:right;letter-spacing:0.47px;-webkit-text-stroke:0.12px #000;">7.52%</div>
<div style="position:absolute;right:1571.83px;top:407px;font-size:9.5px;line-height:9.5px;color:#000;font-weight:normal;white-space:nowrap;text-align:right;letter-spacing:0.47px;-webkit-text-stroke:0.12px #000;">7.54%</div>
<div style="position:absolute;right:1514.83px;top:407px;font-size:9.5px;line-height:9.5px;color:#000;font-weight:normal;white-space:nowrap;text-align:right;letter-spacing:0.47px;-webkit-text-stroke:0.12px #000;">7.39%</div>
<div style="position:absolute;right:1457.83px;top:407px;font-size:9.5px;line-height:9.5px;color:#000;font-weight:normal;white-space:nowrap;text-align:right;letter-spacing:0.47px;-webkit-text-stroke:0.12px #000;">7.67%</div>
<div style="position:absolute;right:1400.83px;top:407px;font-size:9.5px;line-height:9.5px;color:#000;font-weight:normal;white-space:nowrap;text-align:right;letter-spacing:0.47px;-webkit-text-stroke:0.12px #000;">7.25%</div>
<div style="position:absolute;right:1343.83px;top:407px;font-size:9.5px;line-height:9.5px;color:#000;font-weight:normal;white-space:nowrap;text-align:right;letter-spacing:0.47px;-webkit-text-stroke:0.12px #000;">7.23%</div>
<div style="position:absolute;right:1286.83px;top:407px;font-size:9.5px;line-height:9.5px;color:#000;font-weight:normal;white-space:nowrap;text-align:right;letter-spacing:0.47px;-webkit-text-stroke:0.12px #000;">7.24%</div>
<div style="position:absolute;right:1229.83px;top:407px;font-size:9.5px;line-height:9.5px;color:#000;font-weight:normal;white-space:nowrap;text-align:right;letter-spacing:0.47px;-webkit-text-stroke:0.12px #000;">7.22%</div>
<div style="position:absolute;right:1172.83px;top:407px;font-size:9.5px;line-height:9.5px;color:#000;font-weight:normal;white-space:nowrap;text-align:right;letter-spacing:0.47px;-webkit-text-stroke:0.12px #000;">7.50%</div>
<div style="position:absolute;right:1103.83px;top:407px;font-size:9.5px;line-height:9.5px;color:#000;font-weight:normal;white-space:nowrap;text-align:right;letter-spacing:0.47px;-webkit-text-stroke:0.12px #000;">6.98%</div>
<div style="position:absolute;right:1034.83px;top:407px;font-size:9.5px;line-height:9.5px;color:#000;font-weight:normal;white-space:nowrap;text-align:right;letter-spacing:0.47px;-webkit-text-stroke:0.12px #000;">7.35%</div>
<div style="position:absolute;right:972.83px;top:407px;font-size:9.5px;line-height:9.5px;color:#000;font-weight:normal;white-space:nowrap;text-align:right;letter-spacing:0.47px;-webkit-text-stroke:0.12px #000;">7.66%</div>
<div style="position:absolute;right:913.55px;top:407px;font-size:9.5px;line-height:9.5px;color:#000;font-weight:normal;white-space:nowrap;text-align:right;letter-spacing:0.85px;-webkit-text-stroke:0.12px #000;">0.8855</div>
<div style="position:absolute;left:27.5px;top:422px;font-size:9.5px;line-height:9.5px;color:#000;font-weight:normal;white-space:nowrap;letter-spacing:0.341px;-webkit-text-stroke:0.12px #000;">Fund Advertising Expenses</div>
<div style="position:absolute;right:1628.83px;top:422px;font-size:9.5px;line-height:9.5px;color:#000;font-weight:normal;white-space:nowrap;text-align:right;letter-spacing:0.47px;-webkit-text-stroke:0.12px #000;">183.75%</div>
<div style="position:absolute;right:1571.83px;top:422px;font-size:9.5px;line-height:9.5px;color:#000;font-weight:normal;white-space:nowrap;text-align:right;letter-spacing:0.47px;-webkit-text-stroke:0.12px #000;">170.51%</div>
<div style="position:absolute;right:1514.83px;top:422px;font-size:9.5px;line-height:9.5px;color:#000;font-weight:normal;white-space:nowrap;text-align:right;letter-spacing:0.47px;-webkit-text-stroke:0.12px #000;">167.56%</div>
<div style="position:absolute;right:1457.83px;top:422px;font-size:9.5px;line-height:9.5px;color:#000;font-weight:normal;white-space:nowrap;text-align:right;letter-spacing:0.47px;-webkit-text-stroke:0.12px #000;">167.33%</div>
<div style="position:absolute;right:1400.83px;top:422px;font-size:9.5px;line-height:9.5px;color:#000;font-weight:normal;white-space:nowrap;text-align:right;letter-spacing:0.47px;-webkit-text-stroke:0.12px #000;">180.04%</div>
<div style="position:absolute;right:1343.83px;top:422px;font-size:9.5px;line-height:9.5px;color:#000;font-weight:normal;white-space:nowrap;text-align:right;letter-spacing:0.47px;-webkit-text-stroke:0.12px #000;">187.00%</div>
<div style="position:absolute;right:1286.83px;top:422px;font-size:9.5px;line-height:9.5px;color:#000;font-weight:normal;white-space:nowrap;text-align:right;letter-spacing:0.47px;-webkit-text-stroke:0.12px #000;">175.76%</div>
<div style="position:absolute;right:1229.83px;top:422px;font-size:9.5px;line-height:9.5px;color:#000;font-weight:normal;white-space:nowrap;text-align:right;letter-spacing:0.47px;-webkit-text-stroke:0.12px #000;">173.38%</div>
<div style="position:absolute;right:1172.83px;top:422px;font-size:9.5px;line-height:9.5px;color:#000;font-weight:normal;white-space:nowrap;text-align:right;letter-spacing:0.47px;-webkit-text-stroke:0.12px #000;">170.32%</div>
<div style="position:absolute;right:1103.83px;top:422px;font-size:9.5px;line-height:9.5px;color:#000;font-weight:normal;white-space:nowrap;text-align:right;letter-spacing:0.47px;-webkit-text-stroke:0.12px #000;">166.94%</div>
<div style="position:absolute;right:1034.83px;top:422px;font-size:9.5px;line-height:9.5px;color:#000;font-weight:normal;white-space:nowrap;text-align:right;letter-spacing:0.47px;-webkit-text-stroke:0.12px #000;">171.58%</div>
<div style="position:absolute;right:972.83px;top:422px;font-size:9.5px;line-height:9.5px;color:#000;font-weight:normal;white-space:nowrap;text-align:right;letter-spacing:0.47px;-webkit-text-stroke:0.12px #000;">178.34%</div>
<div style="position:absolute;right:913.55px;top:422px;font-size:9.5px;line-height:9.5px;color:#000;font-weight:normal;white-space:nowrap;text-align:right;letter-spacing:0.85px;-webkit-text-stroke:0.12px #000;">20.9251</div>
<div style="position:absolute;left:27.5px;top:437px;font-size:9.5px;line-height:9.5px;color:#000;font-weight:normal;white-space:nowrap;letter-spacing:0.294px;-webkit-text-stroke:0.12px #000;">Fund Cash Account</div>
<div style="position:absolute;right:1628.83px;top:437px;font-size:9.5px;line-height:9.5px;color:#000;font-weight:normal;white-space:nowrap;text-align:right;letter-spacing:0.47px;-webkit-text-stroke:0.12px #000;">235.75%</div>
<div style="position:absolute;right:1571.83px;top:437px;font-size:9.5px;line-height:9.5px;color:#000;font-weight:normal;white-space:nowrap;text-align:right;letter-spacing:0.47px;-webkit-text-stroke:0.12px #000;">228.24%</div>
<div style="position:absolute;right:1514.83px;top:437px;font-size:9.5px;line-height:9.5px;color:#000;font-weight:normal;white-space:nowrap;text-align:right;letter-spacing:0.47px;-webkit-text-stroke:0.12px #000;">229.16%</div>
<div style="position:absolute;right:1457.83px;top:437px;font-size:9.5px;line-height:9.5px;color:#000;font-weight:normal;white-space:nowrap;text-align:right;letter-spacing:0.47px;-webkit-text-stroke:0.12px #000;">229.84%</div>
<div style="position:absolute;right:1400.83px;top:437px;font-size:9.5px;line-height:9.5px;color:#000;font-weight:normal;white-space:nowrap;text-align:right;letter-spacing:0.47px;-webkit-text-stroke:0.12px #000;">230.56%</div>
<div style="position:absolute;right:1343.83px;top:437px;font-size:9.5px;line-height:9.5px;color:#000;font-weight:normal;white-space:nowrap;text-align:right;letter-spacing:0.47px;-webkit-text-stroke:0.12px #000;">231.49%</div>
<div style="position:absolute;right:1286.83px;top:437px;font-size:9.5px;line-height:9.5px;color:#000;font-weight:normal;white-space:nowrap;text-align:right;letter-spacing:0.47px;-webkit-text-stroke:0.12px #000;">230.03%</div>
<div style="position:absolute;right:1229.83px;top:437px;font-size:9.5px;line-height:9.5px;color:#000;font-weight:normal;white-space:nowrap;text-align:right;letter-spacing:0.47px;-webkit-text-stroke:0.12px #000;">227.90%</div>
<div style="position:absolute;right:1172.83px;top:437px;font-size:9.5px;line-height:9.5px;color:#000;font-weight:normal;white-space:nowrap;text-align:right;letter-spacing:0.47px;-webkit-text-stroke:0.12px #000;">228.83%</div>
<div style="position:absolute;right:1103.83px;top:437px;font-size:9.5px;line-height:9.5px;color:#000;font-weight:normal;white-space:nowrap;text-align:right;letter-spacing:0.47px;-webkit-text-stroke:0.12px #000;">229.16%</div>
<div style="position:absolute;right:1034.83px;top:437px;font-size:9.5px;line-height:9.5px;color:#000;font-weight:normal;white-space:nowrap;text-align:right;letter-spacing:0.47px;-webkit-text-stroke:0.12px #000;">226.95%</div>
<div style="position:absolute;right:972.83px;top:437px;font-size:9.5px;line-height:9.5px;color:#000;font-weight:normal;white-space:nowrap;text-align:right;letter-spacing:0.47px;-webkit-text-stroke:0.12px #000;">233.43%</div>
<div style="position:absolute;right:913.55px;top:437px;font-size:9.5px;line-height:9.5px;color:#000;font-weight:normal;white-space:nowrap;text-align:right;letter-spacing:0.85px;-webkit-text-stroke:0.12px #000;">27.6134</div>
<div style="position:absolute;left:27.5px;top:452px;font-size:9.5px;line-height:9.5px;color:#000;font-weight:normal;white-space:nowrap;letter-spacing:0.456px;-webkit-text-stroke:0.12px #000;">Fund Entertainment Expenses</div>
<div style="position:absolute;right:1628.83px;top:452px;font-size:9.5px;line-height:9.5px;color:#000;font-weight:normal;white-space:nowrap;text-align:right;letter-spacing:0.47px;-webkit-text-stroke:0.12px #000;">212.17%</div>
<div style="position:absolute;right:1571.83px;top:452px;font-size:9.5px;line-height:9.5px;color:#000;font-weight:normal;white-space:nowrap;text-align:right;letter-spacing:0.47px;-webkit-text-stroke:0.12px #000;">211.73%</div>
<div style="position:absolute;right:1514.83px;top:452px;font-size:9.5px;line-height:9.5px;color:#000;font-weight:normal;white-space:nowrap;text-align:right;letter-spacing:0.47px;-webkit-text-stroke:0.12px #000;">216.22%</div>
<div style="position:absolute;right:1457.83px;top:452px;font-size:9.5px;line-height:9.5px;color:#000;font-weight:normal;white-space:nowrap;text-align:right;letter-spacing:0.47px;-webkit-text-stroke:0.12px #000;">218.43%</div>
<div style="position:absolute;right:1400.83px;top:452px;font-size:9.5px;line-height:9.5px;color:#000;font-weight:normal;white-space:nowrap;text-align:right;letter-spacing:0.47px;-webkit-text-stroke:0.12px #000;">201.22%</div>
<div style="position:absolute;right:1343.83px;top:452px;font-size:9.5px;line-height:9.5px;color:#000;font-weight:normal;white-space:nowrap;text-align:right;letter-spacing:0.47px;-webkit-text-stroke:0.12px #000;">222.57%</div>
<div style="position:absolute;right:1286.83px;top:452px;font-size:9.5px;line-height:9.5px;color:#000;font-weight:normal;white-space:nowrap;text-align:right;letter-spacing:0.47px;-webkit-text-stroke:0.12px #000;">213.11%</div>
<div style="position:absolute;right:1229.83px;top:452px;font-size:9.5px;line-height:9.5px;color:#000;font-weight:normal;white-space:nowrap;text-align:right;letter-spacing:0.47px;-webkit-text-stroke:0.12px #000;">210.34%</div>
<div style="position:absolute;right:1172.83px;top:452px;font-size:9.5px;line-height:9.5px;color:#000;font-weight:normal;white-space:nowrap;text-align:right;letter-spacing:0.47px;-webkit-text-stroke:0.12px #000;">212.42%</div>
<div style="position:absolute;right:1103.83px;top:452px;font-size:9.5px;line-height:9.5px;color:#000;font-weight:normal;white-space:nowrap;text-align:right;letter-spacing:0.47px;-webkit-text-stroke:0.12px #000;">217.41%</div>
<div style="position:absolute;right:1034.83px;top:452px;font-size:9.5px;line-height:9.5px;color:#000;font-weight:normal;white-space:nowrap;text-align:right;letter-spacing:0.47px;-webkit-text-stroke:0.12px #000;">206.91%</div>
<div style="position:absolute;right:972.83px;top:452px;font-size:9.5px;line-height:9.5px;color:#000;font-weight:normal;white-space:nowrap;text-align:right;letter-spacing:0.47px;-webkit-text-stroke:0.12px #000;">223.20%</div>
<div style="position:absolute;right:913.55px;top:452px;font-size:9.5px;line-height:9.5px;color:#000;font-weight:normal;white-space:nowrap;text-align:right;letter-spacing:0.85px;-webkit-text-stroke:0.12px #000;">25.6573</div>
<div style="position:absolute;left:27.5px;top:467px;font-size:9.5px;line-height:9.5px;color:#000;font-weight:normal;white-space:nowrap;letter-spacing:0.3px;-webkit-text-stroke:0.12px #000;">Fund Expense Account</div>
<div style="position:absolute;right:1628.83px;top:467px;font-size:9.5px;line-height:9.5px;color:#000;font-weight:normal;white-space:nowrap;text-align:right;letter-spacing:0.47px;-webkit-text-stroke:0.12px #000;">161.55%</div>
<div style="position:absolute;right:1571.83px;top:467px;font-size:9.5px;line-height:9.5px;color:#000;font-weight:normal;white-space:nowrap;text-align:right;letter-spacing:0.47px;-webkit-text-stroke:0.12px #000;">147.57%</div>
<div style="position:absolute;right:1514.83px;top:467px;font-size:9.5px;line-height:9.5px;color:#000;font-weight:normal;white-space:nowrap;text-align:right;letter-spacing:0.47px;-webkit-text-stroke:0.12px #000;">147.02%</div>
<div style="position:absolute;right:1457.83px;top:467px;font-size:9.5px;line-height:9.5px;color:#000;font-weight:normal;white-space:nowrap;text-align:right;letter-spacing:0.47px;-webkit-text-stroke:0.12px #000;">146.21%</div>
<div style="position:absolute;right:1400.83px;top:467px;font-size:9.5px;line-height:9.5px;color:#000;font-weight:normal;white-space:nowrap;text-align:right;letter-spacing:0.47px;-webkit-text-stroke:0.12px #000;">146.57%</div>
<div style="position:absolute;right:1343.83px;top:467px;font-size:9.5px;line-height:9.5px;color:#000;font-weight:normal;white-space:nowrap;text-align:right;letter-spacing:0.47px;-webkit-text-stroke:0.12px #000;">160.25%</div>
<div style="position:absolute;right:1286.83px;top:467px;font-size:9.5px;line-height:9.5px;color:#000;font-weight:normal;white-space:nowrap;text-align:right;letter-spacing:0.47px;-webkit-text-stroke:0.12px #000;">146.27%</div>
<div style="position:absolute;right:1229.83px;top:467px;font-size:9.5px;line-height:9.5px;color:#000;font-weight:normal;white-space:nowrap;text-align:right;letter-spacing:0.47px;-webkit-text-stroke:0.12px #000;">146.56%</div>
<div style="position:absolute;right:1172.83px;top:467px;font-size:9.5px;line-height:9.5px;color:#000;font-weight:normal;white-space:nowrap;text-align:right;letter-spacing:0.47px;-webkit-text-stroke:0.12px #000;">144.68%</div>
<div style="position:absolute;right:1103.83px;top:467px;font-size:9.5px;line-height:9.5px;color:#000;font-weight:normal;white-space:nowrap;text-align:right;letter-spacing:0.47px;-webkit-text-stroke:0.12px #000;">147.52%</div>
<div style="position:absolute;right:1034.83px;top:467px;font-size:9.5px;line-height:9.5px;color:#000;font-weight:normal;white-space:nowrap;text-align:right;letter-spacing:0.47px;-webkit-text-stroke:0.12px #000;">147.07%</div>
<div style="position:absolute;right:972.83px;top:467px;font-size:9.5px;line-height:9.5px;color:#000;font-weight:normal;white-space:nowrap;text-align:right;letter-spacing:0.47px;-webkit-text-stroke:0.12px #000;">147.26%</div>
<div style="position:absolute;right:913.55px;top:467px;font-size:9.5px;line-height:9.5px;color:#000;font-weight:normal;white-space:nowrap;text-align:right;letter-spacing:0.85px;-webkit-text-stroke:0.12px #000;">17.8853</div>
<div style="position:absolute;left:27.5px;top:482px;font-size:9.5px;line-height:9.5px;color:#000;font-weight:normal;white-space:nowrap;letter-spacing:0.426px;-webkit-text-stroke:0.12px #000;">Fund Materials Expense Account</div>
<div style="position:absolute;right:1628.83px;top:482px;font-size:9.5px;line-height:9.5px;color:#000;font-weight:normal;white-space:nowrap;text-align:right;letter-spacing:0.47px;-webkit-text-stroke:0.12px #000;">160.10%</div>
<div style="position:absolute;right:1571.83px;top:482px;font-size:9.5px;line-height:9.5px;color:#000;font-weight:normal;white-space:nowrap;text-align:right;letter-spacing:0.47px;-webkit-text-stroke:0.12px #000;">153.99%</div>
<div style="position:absolute;right:1514.83px;top:482px;font-size:9.5px;line-height:9.5px;color:#000;font-weight:normal;white-space:nowrap;text-align:right;letter-spacing:0.47px;-webkit-text-stroke:0.12px #000;">154.46%</div>
<div style="position:absolute;right:1457.83px;top:482px;font-size:9.5px;line-height:9.5px;color:#000;font-weight:normal;white-space:nowrap;text-align:right;letter-spacing:0.47px;-webkit-text-stroke:0.12px #000;">154.66%</div>
<div style="position:absolute;right:1400.83px;top:482px;font-size:9.5px;line-height:9.5px;color:#000;font-weight:normal;white-space:nowrap;text-align:right;letter-spacing:0.47px;-webkit-text-stroke:0.12px #000;">157.98%</div>
<div style="position:absolute;right:1343.83px;top:482px;font-size:9.5px;line-height:9.5px;color:#000;font-weight:normal;white-space:nowrap;text-align:right;letter-spacing:0.47px;-webkit-text-stroke:0.12px #000;">169.36%</div>
<div style="position:absolute;right:1286.83px;top:482px;font-size:9.5px;line-height:9.5px;color:#000;font-weight:normal;white-space:nowrap;text-align:right;letter-spacing:0.47px;-webkit-text-stroke:0.12px #000;">155.04%</div>
<div style="position:absolute;right:1229.83px;top:482px;font-size:9.5px;line-height:9.5px;color:#000;font-weight:normal;white-space:nowrap;text-align:right;letter-spacing:0.47px;-webkit-text-stroke:0.12px #000;">156.64%</div>
<div style="position:absolute;right:1172.83px;top:482px;font-size:9.5px;line-height:9.5px;color:#000;font-weight:normal;white-space:nowrap;text-align:right;letter-spacing:0.47px;-webkit-text-stroke:0.12px #000;">155.61%</div>
<div style="position:absolute;right:1103.83px;top:482px;font-size:9.5px;line-height:9.5px;color:#000;font-weight:normal;white-space:nowrap;text-align:right;letter-spacing:0.47px;-webkit-text-stroke:0.12px #000;">153.67%</div>
<div style="position:absolute;right:1034.83px;top:482px;font-size:9.5px;line-height:9.5px;color:#000;font-weight:normal;white-space:nowrap;text-align:right;letter-spacing:0.47px;-webkit-text-stroke:0.12px #000;">151.98%</div>
<div style="position:absolute;right:972.83px;top:482px;font-size:9.5px;line-height:9.5px;color:#000;font-weight:normal;white-space:nowrap;text-align:right;letter-spacing:0.47px;-webkit-text-stroke:0.12px #000;">154.94%</div>
<div style="position:absolute;right:913.55px;top:482px;font-size:9.5px;line-height:9.5px;color:#000;font-weight:normal;white-space:nowrap;text-align:right;letter-spacing:0.85px;-webkit-text-stroke:0.12px #000;">18.7843</div>
<div style="position:absolute;left:27.5px;top:497px;font-size:9.5px;line-height:9.5px;color:#000;font-weight:normal;white-space:nowrap;letter-spacing:0.323px;-webkit-text-stroke:0.12px #000;">Fund Property Tax Expense Account</div>
<div style="position:absolute;right:1628.83px;top:497px;font-size:9.5px;line-height:9.5px;color:#000;font-weight:normal;white-space:nowrap;text-align:right;letter-spacing:0.47px;-webkit-text-stroke:0.12px #000;">390.81%</div>
<div style="position:absolute;right:1571.83px;top:497px;font-size:9.5px;line-height:9.5px;color:#000;font-weight:normal;white-space:nowrap;text-align:right;letter-spacing:0.47px;-webkit-text-stroke:0.12px #000;">383.00%</div>
<div style="position:absolute;right:1514.83px;top:497px;font-size:9.5px;line-height:9.5px;color:#000;font-weight:normal;white-space:nowrap;text-align:right;letter-spacing:0.47px;-webkit-text-stroke:0.12px #000;">369.53%</div>
<div style="position:absolute;right:1457.83px;top:497px;font-size:9.5px;line-height:9.5px;color:#000;font-weight:normal;white-space:nowrap;text-align:right;letter-spacing:0.47px;-webkit-text-stroke:0.12px #000;">383.11%</div>
<div style="position:absolute;right:1400.83px;top:497px;font-size:9.5px;line-height:9.5px;color:#000;font-weight:normal;white-space:nowrap;text-align:right;letter-spacing:0.47px;-webkit-text-stroke:0.12px #000;">390.89%</div>
<div style="position:absolute;right:1343.83px;top:497px;font-size:9.5px;line-height:9.5px;color:#000;font-weight:normal;white-space:nowrap;text-align:right;letter-spacing:0.47px;-webkit-text-stroke:0.12px #000;">396.58%</div>
<div style="position:absolute;right:1286.83px;top:497px;font-size:9.5px;line-height:9.5px;color:#000;font-weight:normal;white-space:nowrap;text-align:right;letter-spacing:0.47px;-webkit-text-stroke:0.12px #000;">388.74%</div>
<div style="position:absolute;right:1229.83px;top:497px;font-size:9.5px;line-height:9.5px;color:#000;font-weight:normal;white-space:nowrap;text-align:right;letter-spacing:0.47px;-webkit-text-stroke:0.12px #000;">373.84%</div>
<div style="position:absolute;right:1172.83px;top:497px;font-size:9.5px;line-height:9.5px;color:#000;font-weight:normal;white-space:nowrap;text-align:right;letter-spacing:0.47px;-webkit-text-stroke:0.12px #000;">396.98%</div>
<div style="position:absolute;right:1103.83px;top:497px;font-size:9.5px;line-height:9.5px;color:#000;font-weight:normal;white-space:nowrap;text-align:right;letter-spacing:0.47px;-webkit-text-stroke:0.12px #000;">395.96%</div>
<div style="position:absolute;right:1034.83px;top:497px;font-size:9.5px;line-height:9.5px;color:#000;font-weight:normal;white-space:nowrap;text-align:right;letter-spacing:0.47px;-webkit-text-stroke:0.12px #000;">398.47%</div>
<div style="position:absolute;right:972.83px;top:497px;font-size:9.5px;line-height:9.5px;color:#000;font-weight:normal;white-space:nowrap;text-align:right;letter-spacing:0.47px;-webkit-text-stroke:0.12px #000;">393.79%</div>
<div style="position:absolute;right:913.55px;top:497px;font-size:9.5px;line-height:9.5px;color:#000;font-weight:normal;white-space:nowrap;text-align:right;letter-spacing:0.85px;-webkit-text-stroke:0.12px #000;">46.617</div>
<div style="position:absolute;left:27.5px;top:512px;font-size:9.5px;line-height:9.5px;color:#000;font-weight:normal;white-space:nowrap;letter-spacing:0.576px;-webkit-text-stroke:0.12px #000;">Government Fund Contribution</div>
<div style="position:absolute;right:1628.83px;top:512px;font-size:9.5px;line-height:9.5px;color:#000;font-weight:normal;white-space:nowrap;text-align:right;letter-spacing:0.47px;-webkit-text-stroke:0.12px #000;">44.26%</div>
<div style="position:absolute;right:1571.83px;top:512px;font-size:9.5px;line-height:9.5px;color:#000;font-weight:normal;white-space:nowrap;text-align:right;letter-spacing:0.47px;-webkit-text-stroke:0.12px #000;">42.65%</div>
<div style="position:absolute;right:1514.83px;top:512px;font-size:9.5px;line-height:9.5px;color:#000;font-weight:normal;white-space:nowrap;text-align:right;letter-spacing:0.47px;-webkit-text-stroke:0.12px #000;">42.97%</div>
<div style="position:absolute;right:1457.83px;top:512px;font-size:9.5px;line-height:9.5px;color:#000;font-weight:normal;white-space:nowrap;text-align:right;letter-spacing:0.47px;-webkit-text-stroke:0.12px #000;">41.76%</div>
<div style="position:absolute;right:1400.83px;top:512px;font-size:9.5px;line-height:9.5px;color:#000;font-weight:normal;white-space:nowrap;text-align:right;letter-spacing:0.47px;-webkit-text-stroke:0.12px #000;">39.48%</div>
<div style="position:absolute;right:1343.83px;top:512px;font-size:9.5px;line-height:9.5px;color:#000;font-weight:normal;white-space:nowrap;text-align:right;letter-spacing:0.47px;-webkit-text-stroke:0.12px #000;">39.60%</div>
<div style="position:absolute;right:1286.83px;top:512px;font-size:9.5px;line-height:9.5px;color:#000;font-weight:normal;white-space:nowrap;text-align:right;letter-spacing:0.47px;-webkit-text-stroke:0.12px #000;">41.78%</div>
<div style="position:absolute;right:1229.83px;top:512px;font-size:9.5px;line-height:9.5px;color:#000;font-weight:normal;white-space:nowrap;text-align:right;letter-spacing:0.47px;-webkit-text-stroke:0.12px #000;">39.74%</div>
<div style="position:absolute;right:1172.83px;top:512px;font-size:9.5px;line-height:9.5px;color:#000;font-weight:normal;white-space:nowrap;text-align:right;letter-spacing:0.47px;-webkit-text-stroke:0.12px #000;">42.32%</div>
<div style="position:absolute;right:1103.83px;top:512px;font-size:9.5px;line-height:9.5px;color:#000;font-weight:normal;white-space:nowrap;text-align:right;letter-spacing:0.47px;-webkit-text-stroke:0.12px #000;">41.32%</div>
<div style="position:absolute;right:1034.83px;top:512px;font-size:9.5px;line-height:9.5px;color:#000;font-weight:normal;white-space:nowrap;text-align:right;letter-spacing:0.47px;-webkit-text-stroke:0.12px #000;">40.74%</div>
<div style="position:absolute;right:972.83px;top:512px;font-size:9.5px;line-height:9.5px;color:#000;font-weight:normal;white-space:nowrap;text-align:right;letter-spacing:0.47px;-webkit-text-stroke:0.12px #000;">44.22%</div>
<div style="position:absolute;right:913.55px;top:512px;font-size:9.5px;line-height:9.5px;color:#000;font-weight:normal;white-space:nowrap;text-align:right;letter-spacing:0.85px;-webkit-text-stroke:0.12px #000;">5.0084</div>
<div style="position:absolute;left:27.5px;top:527px;font-size:9.5px;line-height:9.5px;color:#000;font-weight:normal;white-space:nowrap;letter-spacing:0.476px;-webkit-text-stroke:0.12px #000;">Intangible Assets Amortization Expense</div>
<div style="position:absolute;right:1628.83px;top:527px;font-size:9.5px;line-height:9.5px;color:#000;font-weight:normal;white-space:nowrap;text-align:right;letter-spacing:0.47px;-webkit-text-stroke:0.12px #000;">26.18%</div>
<div style="position:absolute;right:1571.83px;top:527px;font-size:9.5px;line-height:9.5px;color:#000;font-weight:normal;white-space:nowrap;text-align:right;letter-spacing:0.47px;-webkit-text-stroke:0.12px #000;">23.20%</div>
<div style="position:absolute;right:1514.83px;top:527px;font-size:9.5px;line-height:9.5px;color:#000;font-weight:normal;white-space:nowrap;text-align:right;letter-spacing:0.47px;-webkit-text-stroke:0.12px #000;">25.34%</div>
<div style="position:absolute;right:1457.83px;top:527px;font-size:9.5px;line-height:9.5px;color:#000;font-weight:normal;white-space:nowrap;text-align:right;letter-spacing:0.47px;-webkit-text-stroke:0.12px #000;">25.34%</div>
<div style="position:absolute;right:1400.83px;top:527px;font-size:9.5px;line-height:9.5px;color:#000;font-weight:normal;white-space:nowrap;text-align:right;letter-spacing:0.47px;-webkit-text-stroke:0.12px #000;">27.07%</div>
<div style="position:absolute;right:1343.83px;top:527px;font-size:9.5px;line-height:9.5px;color:#000;font-weight:normal;white-space:nowrap;text-align:right;letter-spacing:0.47px;-webkit-text-stroke:0.12px #000;">23.20%</div>
<div style="position:absolute;right:1286.83px;top:527px;font-size:9.5px;line-height:9.5px;color:#000;font-weight:normal;white-space:nowrap;text-align:right;letter-spacing:0.47px;-webkit-text-stroke:0.12px #000;">23.20%</div>
<div style="position:absolute;right:1229.83px;top:527px;font-size:9.5px;line-height:9.5px;color:#000;font-weight:normal;white-space:nowrap;text-align:right;letter-spacing:0.47px;-webkit-text-stroke:0.12px #000;">23.20%</div>
<div style="position:absolute;right:1172.83px;top:527px;font-size:9.5px;line-height:9.5px;color:#000;font-weight:normal;white-space:nowrap;text-align:right;letter-spacing:0.47px;-webkit-text-stroke:0.12px #000;">25.34%</div>
<div style="position:absolute;right:1103.83px;top:527px;font-size:9.5px;line-height:9.5px;color:#000;font-weight:normal;white-space:nowrap;text-align:right;letter-spacing:0.47px;-webkit-text-stroke:0.12px #000;">28.31%</div>
<div style="position:absolute;right:1034.83px;top:527px;font-size:9.5px;line-height:9.5px;color:#000;font-weight:normal;white-space:nowrap;text-align:right;letter-spacing:0.47px;-webkit-text-stroke:0.12px #000;">25.34%</div>
<div style="position:absolute;right:972.83px;top:527px;font-size:9.5px;line-height:9.5px;color:#000;font-weight:normal;white-space:nowrap;text-align:right;letter-spacing:0.47px;-webkit-text-stroke:0.12px #000;">23.20%</div>
<div style="position:absolute;right:913.55px;top:527px;font-size:9.5px;line-height:9.5px;color:#000;font-weight:normal;white-space:nowrap;text-align:right;letter-spacing:0.85px;-webkit-text-stroke:0.12px #000;">2.9892</div>
<div style="position:absolute;left:27.5px;top:542px;font-size:9.5px;line-height:9.5px;color:#000;font-weight:normal;white-space:nowrap;letter-spacing:0.519px;-webkit-text-stroke:0.12px #000;">Intangible Assets Trademark</div>
<div style="position:absolute;right:1628.83px;top:542px;font-size:9.5px;line-height:9.5px;color:#000;font-weight:normal;white-space:nowrap;text-align:right;letter-spacing:0.47px;-webkit-text-stroke:0.12px #000;">26.18%</div>
<div style="position:absolute;right:1571.83px;top:542px;font-size:9.5px;line-height:9.5px;color:#000;font-weight:normal;white-space:nowrap;text-align:right;letter-spacing:0.47px;-webkit-text-stroke:0.12px #000;">23.20%</div>
<div style="position:absolute;right:1514.83px;top:542px;font-size:9.5px;line-height:9.5px;color:#000;font-weight:normal;white-space:nowrap;text-align:right;letter-spacing:0.47px;-webkit-text-stroke:0.12px #000;">25.34%</div>
<div style="position:absolute;right:1457.83px;top:542px;font-size:9.5px;line-height:9.5px;color:#000;font-weight:normal;white-space:nowrap;text-align:right;letter-spacing:0.47px;-webkit-text-stroke:0.12px #000;">25.34%</div>
<div style="position:absolute;right:1400.83px;top:542px;font-size:9.5px;line-height:9.5px;color:#000;font-weight:normal;white-space:nowrap;text-align:right;letter-spacing:0.47px;-webkit-text-stroke:0.12px #000;">27.07%</div>
<div style="position:absolute;right:1343.83px;top:542px;font-size:9.5px;line-height:9.5px;color:#000;font-weight:normal;white-space:nowrap;text-align:right;letter-spacing:0.47px;-webkit-text-stroke:0.12px #000;">23.20%</div>
<div style="position:absolute;right:1286.83px;top:542px;font-size:9.5px;line-height:9.5px;color:#000;font-weight:normal;white-space:nowrap;text-align:right;letter-spacing:0.47px;-webkit-text-stroke:0.12px #000;">23.20%</div>
<div style="position:absolute;right:1229.83px;top:542px;font-size:9.5px;line-height:9.5px;color:#000;font-weight:normal;white-space:nowrap;text-align:right;letter-spacing:0.47px;-webkit-text-stroke:0.12px #000;">23.20%</div>
<div style="position:absolute;right:1172.83px;top:542px;font-size:9.5px;line-height:9.5px;color:#000;font-weight:normal;white-space:nowrap;text-align:right;letter-spacing:0.47px;-webkit-text-stroke:0.12px #000;">25.34%</div>
<div style="position:absolute;right:1103.83px;top:542px;font-size:9.5px;line-height:9.5px;color:#000;font-weight:normal;white-space:nowrap;text-align:right;letter-spacing:0.47px;-webkit-text-stroke:0.12px #000;">28.31%</div>
<div style="position:absolute;right:1034.83px;top:542px;font-size:9.5px;line-height:9.5px;color:#000;font-weight:normal;white-space:nowrap;text-align:right;letter-spacing:0.47px;-webkit-text-stroke:0.12px #000;">25.34%</div>
<div style="position:absolute;right:972.83px;top:542px;font-size:9.5px;line-height:9.5px;color:#000;font-weight:normal;white-space:nowrap;text-align:right;letter-spacing:0.47px;-webkit-text-stroke:0.12px #000;">23.20%</div>
<div style="position:absolute;right:913.55px;top:542px;font-size:9.5px;line-height:9.5px;color:#000;font-weight:normal;white-space:nowrap;text-align:right;letter-spacing:0.85px;-webkit-text-stroke:0.12px #000;">2.9892</div>
<div style="position:absolute;left:27.5px;top:557px;font-size:9.5px;line-height:9.5px;color:#000;font-weight:normal;white-space:nowrap;letter-spacing:0.587px;-webkit-text-stroke:0.12px #000;">Meals and Entertainment</div>
<div style="position:absolute;right:1628.83px;top:557px;font-size:9.5px;line-height:9.5px;color:#000;font-weight:normal;white-space:nowrap;text-align:right;letter-spacing:0.47px;-webkit-text-stroke:0.12px #000;">10.06%</div>
<div style="position:absolute;right:1571.83px;top:557px;font-size:9.5px;line-height:9.5px;color:#000;font-weight:normal;white-space:nowrap;text-align:right;letter-spacing:0.47px;-webkit-text-stroke:0.12px #000;">10.64%</div>
<div style="position:absolute;right:1514.83px;top:557px;font-size:9.5px;line-height:9.5px;color:#000;font-weight:normal;white-space:nowrap;text-align:right;letter-spacing:0.47px;-webkit-text-stroke:0.12px #000;">9.89%</div>
<div style="position:absolute;right:1457.83px;top:557px;font-size:9.5px;line-height:9.5px;color:#000;font-weight:normal;white-space:nowrap;text-align:right;letter-spacing:0.47px;-webkit-text-stroke:0.12px #000;">10.45%</div>
<div style="position:absolute;right:1400.83px;top:557px;font-size:9.5px;line-height:9.5px;color:#000;font-weight:normal;white-space:nowrap;text-align:right;letter-spacing:0.47px;-webkit-text-stroke:0.12px #000;">10.65%</div>
<div style="position:absolute;right:1343.83px;top:557px;font-size:9.5px;line-height:9.5px;color:#000;font-weight:normal;white-space:nowrap;text-align:right;letter-spacing:0.47px;-webkit-text-stroke:0.12px #000;">10.85%</div>
<div style="position:absolute;right:1286.83px;top:557px;font-size:9.5px;line-height:9.5px;color:#000;font-weight:normal;white-space:nowrap;text-align:right;letter-spacing:0.47px;-webkit-text-stroke:0.12px #000;">9.77%</div>
<div style="position:absolute;right:1229.83px;top:557px;font-size:9.5px;line-height:9.5px;color:#000;font-weight:normal;white-space:nowrap;text-align:right;letter-spacing:0.47px;-webkit-text-stroke:0.12px #000;">10.60%</div>
<div style="position:absolute;right:1172.83px;top:557px;font-size:9.5px;line-height:9.5px;color:#000;font-weight:normal;white-space:nowrap;text-align:right;letter-spacing:0.47px;-webkit-text-stroke:0.12px #000;">10.14%</div>
<div style="position:absolute;right:1103.83px;top:557px;font-size:9.5px;line-height:9.5px;color:#000;font-weight:normal;white-space:nowrap;text-align:right;letter-spacing:0.47px;-webkit-text-stroke:0.12px #000;">10.27%</div>
<div style="position:absolute;right:1034.83px;top:557px;font-size:9.5px;line-height:9.5px;color:#000;font-weight:normal;white-space:nowrap;text-align:right;letter-spacing:0.47px;-webkit-text-stroke:0.12px #000;">10.91%</div>
<div style="position:absolute;right:972.83px;top:557px;font-size:9.5px;line-height:9.5px;color:#000;font-weight:normal;white-space:nowrap;text-align:right;letter-spacing:0.47px;-webkit-text-stroke:0.12px #000;">9.90%</div>
<div style="position:absolute;right:913.55px;top:557px;font-size:9.5px;line-height:9.5px;color:#000;font-weight:normal;white-space:nowrap;text-align:right;letter-spacing:0.85px;-webkit-text-stroke:0.12px #000;">1.2413</div>
<div style="position:absolute;left:27.5px;top:572px;font-size:9.5px;line-height:9.5px;color:#000;font-weight:normal;white-space:nowrap;letter-spacing:0.528px;-webkit-text-stroke:0.12px #000;">Private Fund Contribution</div>
<div style="position:absolute;right:1628.83px;top:572px;font-size:9.5px;line-height:9.5px;color:#000;font-weight:normal;white-space:nowrap;text-align:right;letter-spacing:0.47px;-webkit-text-stroke:0.12px #000;">107.27%</div>
<div style="position:absolute;right:1571.83px;top:572px;font-size:9.5px;line-height:9.5px;color:#000;font-weight:normal;white-space:nowrap;text-align:right;letter-spacing:0.47px;-webkit-text-stroke:0.12px #000;">104.05%</div>
<div style="position:absolute;right:1514.83px;top:572px;font-size:9.5px;line-height:9.5px;color:#000;font-weight:normal;white-space:nowrap;text-align:right;letter-spacing:0.47px;-webkit-text-stroke:0.12px #000;">101.70%</div>
<div style="position:absolute;right:1457.83px;top:572px;font-size:9.5px;line-height:9.5px;color:#000;font-weight:normal;white-space:nowrap;text-align:right;letter-spacing:0.47px;-webkit-text-stroke:0.12px #000;">104.89%</div>
<div style="position:absolute;right:1400.83px;top:572px;font-size:9.5px;line-height:9.5px;color:#000;font-weight:normal;white-space:nowrap;text-align:right;letter-spacing:0.47px;-webkit-text-stroke:0.12px #000;">103.99%</div>
<div style="position:absolute;right:1343.83px;top:572px;font-size:9.5px;line-height:9.5px;color:#000;font-weight:normal;white-space:nowrap;text-align:right;letter-spacing:0.47px;-webkit-text-stroke:0.12px #000;">105.46%</div>
<div style="position:absolute;right:1286.83px;top:572px;font-size:9.5px;line-height:9.5px;color:#000;font-weight:normal;white-space:nowrap;text-align:right;letter-spacing:0.47px;-webkit-text-stroke:0.12px #000;">103.76%</div>
<div style="position:absolute;right:1229.83px;top:572px;font-size:9.5px;line-height:9.5px;color:#000;font-weight:normal;white-space:nowrap;text-align:right;letter-spacing:0.47px;-webkit-text-stroke:0.12px #000;">105.56%</div>
<div style="position:absolute;right:1172.83px;top:572px;font-size:9.5px;line-height:9.5px;color:#000;font-weight:normal;white-space:nowrap;text-align:right;letter-spacing:0.47px;-webkit-text-stroke:0.12px #000;">104.00%</div>
<div style="position:absolute;right:1103.83px;top:572px;font-size:9.5px;line-height:9.5px;color:#000;font-weight:normal;white-space:nowrap;text-align:right;letter-spacing:0.47px;-webkit-text-stroke:0.12px #000;">103.93%</div>
<div style="position:absolute;right:1034.83px;top:572px;font-size:9.5px;line-height:9.5px;color:#000;font-weight:normal;white-space:nowrap;text-align:right;letter-spacing:0.47px;-webkit-text-stroke:0.12px #000;">103.75%</div>
<div style="position:absolute;right:972.83px;top:572px;font-size:9.5px;line-height:9.5px;color:#000;font-weight:normal;white-space:nowrap;text-align:right;letter-spacing:0.47px;-webkit-text-stroke:0.12px #000;">109.33%</div>
<div style="position:absolute;right:913.55px;top:572px;font-size:9.5px;line-height:9.5px;color:#000;font-weight:normal;white-space:nowrap;text-align:right;letter-spacing:0.85px;-webkit-text-stroke:0.12px #000;">12.5769</div>
<div style="position:absolute;left:27.5px;top:587px;font-size:9.5px;line-height:9.5px;color:#000;font-weight:normal;white-space:nowrap;letter-spacing:0.524px;-webkit-text-stroke:0.12px #000;">Site rental and related costs</div>
<div style="position:absolute;right:1628.83px;top:587px;font-size:9.5px;line-height:9.5px;color:#000;font-weight:normal;white-space:nowrap;text-align:right;letter-spacing:0.47px;-webkit-text-stroke:0.12px #000;">16.94%</div>
<div style="position:absolute;right:1571.83px;top:587px;font-size:9.5px;line-height:9.5px;color:#000;font-weight:normal;white-space:nowrap;text-align:right;letter-spacing:0.47px;-webkit-text-stroke:0.12px #000;">16.23%</div>
<div style="position:absolute;right:1514.83px;top:587px;font-size:9.5px;line-height:9.5px;color:#000;font-weight:normal;white-space:nowrap;text-align:right;letter-spacing:0.47px;-webkit-text-stroke:0.12px #000;">15.61%</div>
<div style="position:absolute;right:1457.83px;top:587px;font-size:9.5px;line-height:9.5px;color:#000;font-weight:normal;white-space:nowrap;text-align:right;letter-spacing:0.47px;-webkit-text-stroke:0.12px #000;">16.07%</div>
<div style="position:absolute;right:1400.83px;top:587px;font-size:9.5px;line-height:9.5px;color:#000;font-weight:normal;white-space:nowrap;text-align:right;letter-spacing:0.47px;-webkit-text-stroke:0.12px #000;">16.35%</div>
<div style="position:absolute;right:1343.83px;top:587px;font-size:9.5px;line-height:9.5px;color:#000;font-weight:normal;white-space:nowrap;text-align:right;letter-spacing:0.47px;-webkit-text-stroke:0.12px #000;">18.94%</div>
<div style="position:absolute;right:1286.83px;top:587px;font-size:9.5px;line-height:9.5px;color:#000;font-weight:normal;white-space:nowrap;text-align:right;letter-spacing:0.47px;-webkit-text-stroke:0.12px #000;">17.48%</div>
<div style="position:absolute;right:1229.83px;top:587px;font-size:9.5px;line-height:9.5px;color:#000;font-weight:normal;white-space:nowrap;text-align:right;letter-spacing:0.47px;-webkit-text-stroke:0.12px #000;">16.34%</div>
<div style="position:absolute;right:1172.83px;top:587px;font-size:9.5px;line-height:9.5px;color:#000;font-weight:normal;white-space:nowrap;text-align:right;letter-spacing:0.47px;-webkit-text-stroke:0.12px #000;">16.30%</div>
<div style="position:absolute;right:1103.83px;top:587px;font-size:9.5px;line-height:9.5px;color:#000;font-weight:normal;white-space:nowrap;text-align:right;letter-spacing:0.47px;-webkit-text-stroke:0.12px #000;">15.34%</div>
<div style="position:absolute;right:1034.83px;top:587px;font-size:9.5px;line-height:9.5px;color:#000;font-weight:normal;white-space:nowrap;text-align:right;letter-spacing:0.47px;-webkit-text-stroke:0.12px #000;">15.35%</div>
<div style="position:absolute;right:972.83px;top:587px;font-size:9.5px;line-height:9.5px;color:#000;font-weight:normal;white-space:nowrap;text-align:right;letter-spacing:0.47px;-webkit-text-stroke:0.12px #000;">15.75%</div>
<div style="position:absolute;right:913.55px;top:587px;font-size:9.5px;line-height:9.5px;color:#000;font-weight:normal;white-space:nowrap;text-align:right;letter-spacing:0.85px;-webkit-text-stroke:0.12px #000;">1.967</div>
<div style="position:absolute;left:27.5px;top:602px;font-size:9.5px;line-height:9.5px;color:#000;font-weight:normal;white-space:nowrap;letter-spacing:0.295px;-webkit-text-stroke:0.12px #000;">Tax Payables</div>
<div style="position:absolute;right:1628.83px;top:602px;font-size:9.5px;line-height:9.5px;color:#000;font-weight:normal;white-space:nowrap;text-align:right;letter-spacing:0.47px;-webkit-text-stroke:0.12px #000;">24.13%</div>
<div style="position:absolute;right:1571.83px;top:602px;font-size:9.5px;line-height:9.5px;color:#000;font-weight:normal;white-space:nowrap;text-align:right;letter-spacing:0.47px;-webkit-text-stroke:0.12px #000;">24.25%</div>
<div style="position:absolute;right:1514.83px;top:602px;font-size:9.5px;line-height:9.5px;color:#000;font-weight:normal;white-space:nowrap;text-align:right;letter-spacing:0.47px;-webkit-text-stroke:0.12px #000;">24.11%</div>
<div style="position:absolute;right:1457.83px;top:602px;font-size:9.5px;line-height:9.5px;color:#000;font-weight:normal;white-space:nowrap;text-align:right;letter-spacing:0.47px;-webkit-text-stroke:0.12px #000;">24.50%</div>
<div style="position:absolute;right:1400.83px;top:602px;font-size:9.5px;line-height:9.5px;color:#000;font-weight:normal;white-space:nowrap;text-align:right;letter-spacing:0.47px;-webkit-text-stroke:0.12px #000;">24.68%</div>
<div style="position:absolute;right:1343.83px;top:602px;font-size:9.5px;line-height:9.5px;color:#000;font-weight:normal;white-space:nowrap;text-align:right;letter-spacing:0.47px;-webkit-text-stroke:0.12px #000;">24.64%</div>
<div style="position:absolute;right:1286.83px;top:602px;font-size:9.5px;line-height:9.5px;color:#000;font-weight:normal;white-space:nowrap;text-align:right;letter-spacing:0.47px;-webkit-text-stroke:0.12px #000;">24.09%</div>
<div style="position:absolute;right:1229.83px;top:602px;font-size:9.5px;line-height:9.5px;color:#000;font-weight:normal;white-space:nowrap;text-align:right;letter-spacing:0.47px;-webkit-text-stroke:0.12px #000;">24.50%</div>
<div style="position:absolute;right:1172.83px;top:602px;font-size:9.5px;line-height:9.5px;color:#000;font-weight:normal;white-space:nowrap;text-align:right;letter-spacing:0.47px;-webkit-text-stroke:0.12px #000;">24.43%</div>
<div style="position:absolute;right:1103.83px;top:602px;font-size:9.5px;line-height:9.5px;color:#000;font-weight:normal;white-space:nowrap;text-align:right;letter-spacing:0.47px;-webkit-text-stroke:0.12px #000;">24.15%</div>
<div style="position:absolute;right:1034.83px;top:602px;font-size:9.5px;line-height:9.5px;color:#000;font-weight:normal;white-space:nowrap;text-align:right;letter-spacing:0.47px;-webkit-text-stroke:0.12px #000;">24.57%</div>
<div style="position:absolute;right:972.83px;top:602px;font-size:9.5px;line-height:9.5px;color:#000;font-weight:normal;white-space:nowrap;text-align:right;letter-spacing:0.47px;-webkit-text-stroke:0.12px #000;">24.61%</div>
<div style="position:absolute;right:913.55px;top:602px;font-size:9.5px;line-height:9.5px;color:#000;font-weight:normal;white-space:nowrap;text-align:right;letter-spacing:0.85px;-webkit-text-stroke:0.12px #000;">2.9266</div>
<div style="position:absolute;left:27.3px;top:617px;font-size:9.5px;line-height:9.5px;color:#000;font-weight:bold;white-space:nowrap;letter-spacing:0.05px;">Grand Total</div>
<div style="position:absolute;right:1628.00px;top:617px;font-size:9.5px;line-height:9.5px;color:#000;font-weight:bold;white-space:nowrap;text-align:right;letter-spacing:0.9px;">17.7469</div>
<div style="position:absolute;right:1571.00px;top:617px;font-size:9.5px;line-height:9.5px;color:#000;font-weight:bold;white-space:nowrap;text-align:right;letter-spacing:0.9px;">17.0419</div>
<div style="position:absolute;right:1514.00px;top:617px;font-size:9.5px;line-height:9.5px;color:#000;font-weight:bold;white-space:nowrap;text-align:right;letter-spacing:0.9px;">16.9446</div>
<div style="position:absolute;right:1457.00px;top:617px;font-size:9.5px;line-height:9.5px;color:#000;font-weight:bold;white-space:nowrap;text-align:right;letter-spacing:0.9px;">17.1882</div>
<div style="position:absolute;right:1400.00px;top:617px;font-size:9.5px;line-height:9.5px;color:#000;font-weight:bold;white-space:nowrap;text-align:right;letter-spacing:0.9px;">17.399</div>
<div style="position:absolute;right:1343.00px;top:617px;font-size:9.5px;line-height:9.5px;color:#000;font-weight:bold;white-space:nowrap;text-align:right;letter-spacing:0.9px;">17.8347</div>
<div style="position:absolute;right:1286.00px;top:617px;font-size:9.5px;line-height:9.5px;color:#000;font-weight:bold;white-space:nowrap;text-align:right;letter-spacing:0.9px;">17.2222</div>
<div style="position:absolute;right:1229.00px;top:617px;font-size:9.5px;line-height:9.5px;color:#000;font-weight:bold;white-space:nowrap;text-align:right;letter-spacing:0.9px;">17.001</div>
<div style="position:absolute;right:1172.00px;top:617px;font-size:9.5px;line-height:9.5px;color:#000;font-weight:bold;white-space:nowrap;text-align:right;letter-spacing:0.9px;">17.2373</div>
<div style="position:absolute;right:1103.00px;top:617px;font-size:9.5px;line-height:9.5px;color:#000;font-weight:bold;white-space:nowrap;text-align:right;letter-spacing:0.9px;">17.3998</div>
<div style="position:absolute;right:1034.00px;top:617px;font-size:9.5px;line-height:9.5px;color:#000;font-weight:bold;white-space:nowrap;text-align:right;letter-spacing:0.9px;">17.1018</div>
<div style="position:absolute;right:972.00px;top:617px;font-size:9.5px;line-height:9.5px;color:#000;font-weight:bold;white-space:nowrap;text-align:right;letter-spacing:0.9px;">17.4811</div>
<div style="position:absolute;right:913.50px;top:617px;font-size:9.5px;line-height:9.5px;color:#000;font-weight:bold;white-space:nowrap;text-align:right;letter-spacing:0.9px;">207.5985</div>
<div style="position:absolute;left:526px;top:329px;width:56px;height:13px;border:1px solid #fff;"></div>
<div style="position:absolute;left:524px;top:327px;width:60px;height:17px;border:2px solid #217346;"></div>
<div style="position:absolute;left:579px;top:340px;width:7px;height:7px;background:#217346;border:1px solid #fff;"></div>
<div style="position:absolute;left:1901px;top:209px;width:21px;height:783px;background:#e6e6e6;"></div>
<div style="position:absolute;left:1904px;top:211px;width:15px;height:15px;background:#fff;border:1px solid #c6c6c6;"></div>
<div style="position:absolute;left:1904px;top:225px;width:15px;height:753px;background:#d9d9d9;"></div>
<div style="position:absolute;left:1904px;top:226px;width:15px;height:737px;background:#fff;border:1px solid #b4b4b4;"></div>
<div style="position:absolute;left:1904px;top:978px;width:15px;height:15px;background:#fff;border:1px solid #c6c6c6;"></div>
<svg style="left:0;top:0" width="1924" height="1044"><path d="M1907.5 221 h8 l-4 -4z" fill="#777"/><path d="M1907.5 984 h8 l-4 4z" fill="#777"/></svg>
<div style="position:absolute;left:2px;top:992px;width:1920px;height:28px;background:#e6e6e6;"></div>
<div style="position:absolute;left:2px;top:992px;width:1920px;height:1px;background:#a8a8a8;"></div>
<div style="position:absolute;left:417px;top:992px;width:66px;height:25px;background:#fff;"></div>
<div style="position:absolute;left:417px;top:992px;width:1px;height:25px;background:#a8a8a8;"></div>
<div style="position:absolute;left:482px;top:992px;width:1px;height:25px;background:#a8a8a8;"></div>
<div style="position:absolute;left:417px;top:1015px;width:66px;height:2px;background:#217346;"></div>
<div style="position:absolute;left:2px;top:1020px;width:1920px;height:1px;background:#c8c8c8;"></div>
<div style="position:absolute;left:102px;top:996px;width:1px;height:20px;background:#8a8a8a;"></div>
<div style="position:absolute;left:165px;top:996px;width:1px;height:20px;background:#8a8a8a;"></div>
<div style="position:absolute;left:228px;top:996px;width:1px;height:20px;background:#8a8a8a;"></div>
<div style="position:absolute;left:291px;top:996px;width:1px;height:20px;background:#8a8a8a;"></div>
<div style="position:absolute;left:354px;top:996px;width:1px;height:20px;background:#8a8a8a;"></div>
<div style="position:absolute;left:546px;top:996px;width:1px;height:20px;background:#8a8a8a;"></div>
<svg style="left:0;top:0" width="1924" height="1044"><path d="M33 1001.5 v8 l-4 -4z" fill="#bdbdbd"/><path d="M57 1001.5 v8 l4 -4z" fill="#a0a0a0"/></svg>
<div style="position:absolute;left:-66.0px;width:400px;top:1000px;font-size:12.3px;line-height:12.3px;color:#333;font-weight:normal;white-space:nowrap;text-align:center;">Year-1</div>
<div style="position:absolute;left:-3.0px;width:400px;top:1000px;font-size:12.3px;line-height:12.3px;color:#333;font-weight:normal;white-space:nowrap;text-align:center;">Year-2</div>
<div style="position:absolute;left:60.0px;width:400px;top:1000px;font-size:12.3px;line-height:12.3px;color:#333;font-weight:normal;white-space:nowrap;text-align:center;">Year-3</div>
<div style="position:absolute;left:123.0px;width:400px;top:1000px;font-size:12.3px;line-height:12.3px;color:#333;font-weight:normal;white-space:nowrap;text-align:center;">Year-4</div>
<div style="position:absolute;left:186.0px;width:400px;top:1000px;font-size:12.3px;line-height:12.3px;color:#333;font-weight:normal;white-space:nowrap;text-align:center;">Year-5</div>
<div style="position:absolute;left:250px;width:400px;top:1000px;font-size:12px;line-height:12px;color:#1e7145;font-weight:bold;white-space:nowrap;text-align:center;">Sheet2</div>
<div style="position:absolute;left:314px;width:400px;top:1000px;font-size:12.3px;line-height:12.3px;color:#333;font-weight:normal;white-space:nowrap;text-align:center;">Sheet1</div>
<svg style="left:0;top:0" width="1924" height="1044"><circle cx="588" cy="1006" r="7.5" fill="none" stroke="#666" stroke-width="1.1"/><path d="M588 1002 v8 M584 1006 h8" stroke="#666" stroke-width="1.6"/><circle cx="965" cy="1002" r="0.9" fill="#999"/><circle cx="965" cy="1006" r="0.9" fill="#999"/><circle cx="965" cy="1010" r="0.9" fill="#999"/></svg>
<div style="position:absolute;left:981px;top:999px;width:920px;height:15px;background:#dcdcdc;border:1px solid #c6c6c6;"></div>
<div style="position:absolute;left:981px;top:999px;width:15px;height:15px;background:#fff;border:1px solid #b0b0b0;"></div>
<div style="position:absolute;left:996px;top:999px;width:861px;height:15px;background:#fff;border:1px solid #b0b0b0;"></div>
<div style="position:absolute;left:1886px;top:999px;width:15px;height:15px;background:#fff;border:1px solid #c6c6c6;"></div>
<svg style="left:0;top:0" width="1924" height="1044"><path d="M990 1002.5 v8 l-4 -4z" fill="#666"/><path d="M1891 1002.5 v8 l4 -4z" fill="#666"/></svg>
<div style="position:absolute;left:2px;top:1021px;width:1920px;height:20px;background:#f3f2f1;"></div>
<div style="position:absolute;left:10.4px;top:1025px;font-size:11px;line-height:11px;color:#444;font-weight:normal;white-space:nowrap;">Ready</div>
<div style="position:absolute;left:1622px;top:1021px;width:40px;height:20px;background:#c8c6c4;"></div>
<svg style="left:0;top:0" width="1924" height="1044"><g fill="none" stroke="#333" stroke-width="1.2">
<rect x="1635.5" y="1024.5" width="12" height="12"/><path d="M1639.5 1024.5 v12 M1643.5 1024.5 v12 M1635.5 1028.5 h12 M1635.5 1032.5 h12"/>
<rect x="1675.5" y="1024.5" width="13" height="12"/><rect x="1678.5" y="1026.5" width="7" height="8"/><path d="M1680 1028.5 h4 M1680 1030.5 h4 M1680 1032.5 h4"/>
<rect x="1715.5" y="1024.5" width="13" height="12"/><path d="M1715.5 1030.5 h9 v-6 M1720.5 1024.5 v6"/>
</g>
<path d="M1748 1030.5 h7.5" stroke="#444" stroke-width="1.2"/>
<path d="M1761 1031 h100" stroke="#b0b0b0" stroke-width="1"/>
<path d="M1811.5 1028.5 v5" stroke="#888" stroke-width="1"/>
<rect x="1793" y="1025" width="5" height="11" fill="#666"/>
<path d="M1866 1030.5 h7.5 M1869.8 1026.8 v7.5" stroke="#444" stroke-width="1.2"/>
</svg>
<div style="position:absolute;left:1887.5px;top:1027px;font-size:10.4px;line-height:10.4px;color:#555;font-weight:normal;white-space:nowrap;">70%</div>
<div style="position:absolute;left:62px;top:142px;width:229px;height:198px;background:rgba(0,0,0,0.08);filter:blur(1.5px);"></div>
<div style="position:absolute;left:64px;top:142px;width:225px;height:196px;background:#fff;border:1px solid #d6d6d6;"></div>
<div style="position:absolute;left:64px;top:142px;width:226px;height:52px;background:#d0cecc;border:3px solid #3e93f4;"></div>
<div style="position:absolute;left:119.4px;top:166px;font-size:11.4px;line-height:11.4px;color:#1a1a1a;font-weight:bold;white-space:nowrap;">O<u>f</u>f for Rows and Columns</div>
<div style="position:absolute;left:119.4px;top:214px;font-size:11.4px;line-height:11.4px;color:#1a1a1a;font-weight:bold;white-space:nowrap;">O<u>n</u> for Rows and Columns</div>
<div style="position:absolute;left:119.4px;top:262px;font-size:11.4px;line-height:11.4px;color:#1a1a1a;font-weight:bold;white-space:nowrap;">On for <u>R</u>ows Only</div>
<div style="position:absolute;left:119.4px;top:310px;font-size:11.4px;line-height:11.4px;color:#1a1a1a;font-weight:bold;white-space:nowrap;">On for <u>C</u>olumns Only</div>
<svg style="left:85px;top:154px" width="22" height="28"><rect x="0.65" y="0.65" width="20.7" height="26.7" fill="#fafafa" stroke="#3b3a39" stroke-width="1.3"/><line x1="6" y1="5.5" x2="13" y2="5.5" stroke="#7a7574" stroke-width="1.3"/><line x1="14" y1="5.5" x2="18" y2="5.5" stroke="#7a7574" stroke-width="1.3"/><line x1="6" y1="9.5" x2="13" y2="9.5" stroke="#7a7574" stroke-width="1.3"/><line x1="14" y1="9.5" x2="18" y2="9.5" stroke="#7a7574" stroke-width="1.3"/><line x1="4" y1="13.5" x2="13" y2="13.5" stroke="#7a7574" stroke-width="1.3"/><line x1="14" y1="13.5" x2="18" y2="13.5" stroke="#7a7574" stroke-width="1.3"/><line x1="6" y1="17.5" x2="13" y2="17.5" stroke="#7a7574" stroke-width="1.3"/><line x1="14" y1="17.5" x2="18" y2="17.5" stroke="#7a7574" stroke-width="1.3"/><line x1="6" y1="21.5" x2="13" y2="21.5" stroke="#7a7574" stroke-width="1.3"/><line x1="14" y1="21.5" x2="18" y2="21.5" stroke="#7a7574" stroke-width="1.3"/></svg>
<svg style="left:85px;top:202px" width="22" height="28"><rect x="0.65" y="0.65" width="20.7" height="26.7" fill="#fafafa" stroke="#3b3a39" stroke-width="1.3"/><line x1="4" y1="5.5" x2="13" y2="5.5" stroke="#7a7574" stroke-width="1.3"/><line x1="14" y1="5.5" x2="18" y2="5.5" stroke="#1a86d6" stroke-width="1.3"/><line x1="6" y1="9.5" x2="13" y2="9.5" stroke="#7a7574" stroke-width="1.3"/><line x1="14" y1="9.5" x2="18" y2="9.5" stroke="#1a86d6" stroke-width="1.3"/><line x1="4" y1="13.5" x2="13" y2="13.5" stroke="#7a7574" stroke-width="1.3"/><line x1="14" y1="13.5" x2="18" y2="13.5" stroke="#1a86d6" stroke-width="1.3"/><line x1="6" y1="17.5" x2="13" y2="17.5" stroke="#7a7574" stroke-width="1.3"/><line x1="14" y1="17.5" x2="18" y2="17.5" stroke="#1a86d6" stroke-width="1.3"/><line x1="6" y1="21.5" x2="13" y2="21.5" stroke="#1a86d6" stroke-width="1.3"/><line x1="14" y1="21.5" x2="18" y2="21.5" stroke="#1a86d6" stroke-width="1.3"/></svg>
<svg style="left:85px;top:250px" width="22" height="28"><rect x="0.65" y="0.65" width="20.7" height="26.7" fill="#fafafa" stroke="#3b3a39" stroke-width="1.3"/><line x1="4" y1="5.5" x2="13" y2="5.5" stroke="#7a7574" stroke-width="1.3"/><line x1="14" y1="5.5" x2="18" y2="5.5" stroke="#1a86d6" stroke-width="1.3"/><line x1="6" y1="9.5" x2="13" y2="9.5" stroke="#7a7574" stroke-width="1.3"/><line x1="14" y1="9.5" x2="18" y2="9.5" stroke="#1a86d6" stroke-width="1.3"/><line x1="4" y1="13.5" x2="13" y2="13.5" stroke="#7a7574" stroke-width="1.3"/><line x1="14" y1="13.5" x2="18" y2="13.5" stroke="#1a86d6" stroke-width="1.3"/><line x1="6" y1="17.5" x2="13" y2="17.5" stroke="#7a7574" stroke-width="1.3"/><line x1="14" y1="17.5" x2="18" y2="17.5" stroke="#1a86d6" stroke-width="1.3"/><line x1="6" y1="21.5" x2="13" y2="21.5" stroke="#7a7574" stroke-width="1.3"/><line x1="14" y1="21.5" x2="18" y2="21.5" stroke="#1a86d6" stroke-width="1.3"/></svg>
<svg style="left:85px;top:298px" width="22" height="28"><rect x="0.65" y="0.65" width="20.7" height="26.7" fill="#fafafa" stroke="#3b3a39" stroke-width="1.3"/><line x1="6" y1="5.5" x2="13" y2="5.5" stroke="#7a7574" stroke-width="1.3"/><line x1="14" y1="5.5" x2="18" y2="5.5" stroke="#7a7574" stroke-width="1.3"/><line x1="6" y1="9.5" x2="13" y2="9.5" stroke="#7a7574" stroke-width="1.3"/><line x1="14" y1="9.5" x2="18" y2="9.5" stroke="#7a7574" stroke-width="1.3"/><line x1="4" y1="13.5" x2="13" y2="13.5" stroke="#7a7574" stroke-width="1.3"/><line x1="14" y1="13.5" x2="18" y2="13.5" stroke="#7a7574" stroke-width="1.3"/><line x1="6" y1="17.5" x2="13" y2="17.5" stroke="#7a7574" stroke-width="1.3"/><line x1="14" y1="17.5" x2="18" y2="17.5" stroke="#7a7574" stroke-width="1.3"/><line x1="4" y1="21.5" x2="13" y2="21.5" stroke="#1a86d6" stroke-width="1.3"/><line x1="14" y1="21.5" x2="18" y2="21.5" stroke="#1a86d6" stroke-width="1.3"/></svg>
</body></html>
